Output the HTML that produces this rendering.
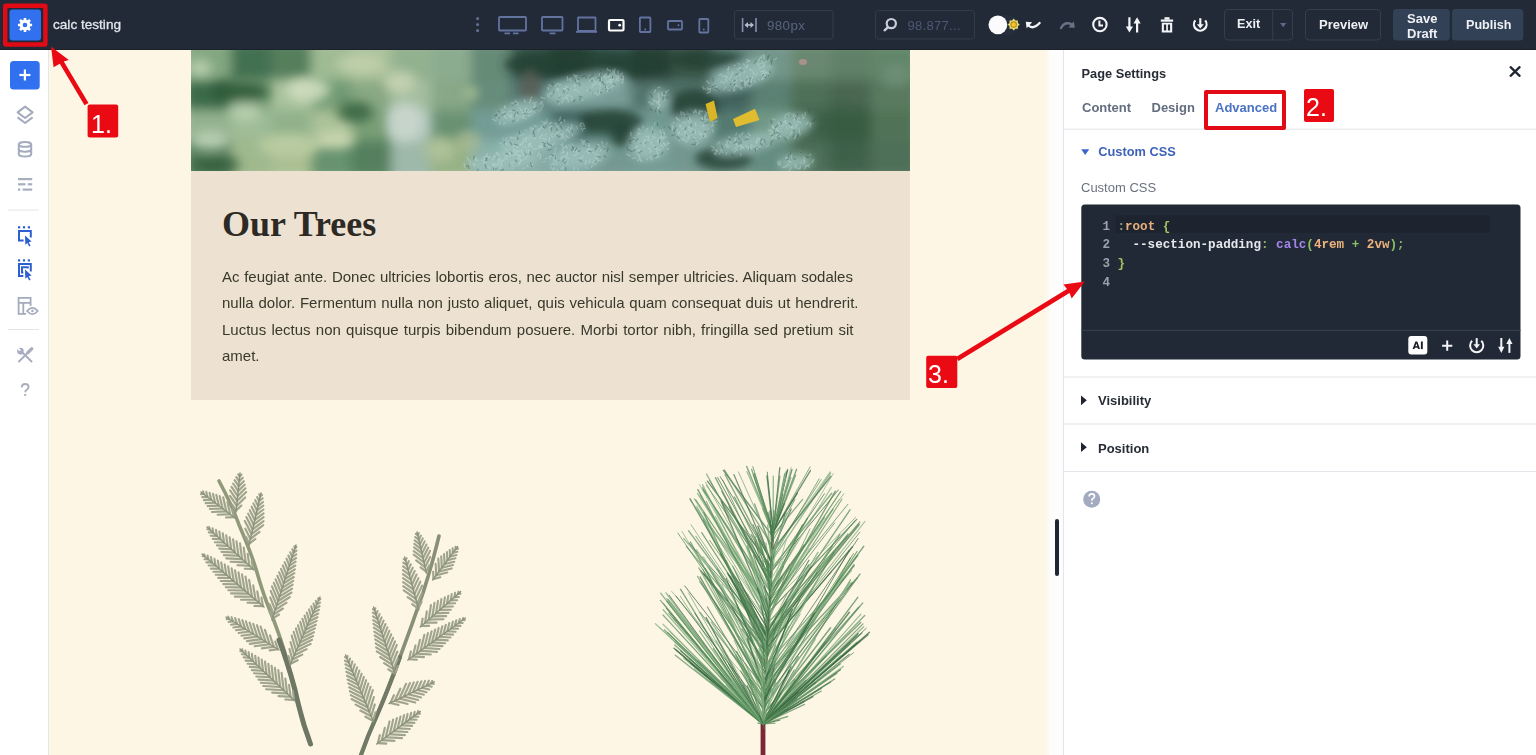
<!DOCTYPE html>
<html><head><meta charset="utf-8">
<style>
*{margin:0;padding:0;box-sizing:border-box}
html,body{width:1536px;height:755px;overflow:hidden;background:#fff;font-family:"Liberation Sans",sans-serif}
.abs{position:absolute}
#top{position:absolute;left:0;top:0;width:1536px;height:50px;background:#222a37;border-bottom:1px solid #1c222c;z-index:5}
#side{position:absolute;left:0;top:49px;width:49px;height:706px;background:#fff;border-right:1px solid #e3e6eb}
#canvas{position:absolute;left:49px;top:49px;width:1001px;height:706px;background:#fdf6e5;overflow:hidden}
#gap{position:absolute;left:1050px;top:49px;width:14px;height:706px;background:#fdfdfd}
#panel{position:absolute;left:1064px;top:49px;width:472px;height:706px;background:#fff}
#pline{position:absolute;left:1063px;top:49px;width:1px;height:706px;background:#e3e5ea}
.t{position:absolute;white-space:nowrap;line-height:1}
.lbl{position:absolute;color:#fff;font-size:25px;line-height:1;white-space:nowrap}
</style></head><body>

<div id="top">
  <svg class="abs" style="left:0;top:0" width="1536" height="49" viewBox="0 0 1536 49">
    <!-- gear button -->
    <rect x="9.5" y="9.5" width="31.5" height="31" rx="3" fill="#3170ee"/>
    <path fill="#fff" d="M32.09 23.76 L32.09 26.24 L30.23 26.34 L29.65 27.75 L30.89 29.14 L29.14 30.89 L27.75 29.65 L26.34 30.23 L26.24 32.09 L23.76 32.09 L23.66 30.23 L22.25 29.65 L20.86 30.89 L19.11 29.14 L20.35 27.75 L19.77 26.34 L17.91 26.24 L17.91 23.76 L19.77 23.66 L20.35 22.25 L19.11 20.86 L20.86 19.11 L22.25 20.35 L23.66 19.77 L23.76 17.91 L26.24 17.91 L26.34 19.77 L27.75 20.35 L29.14 19.11 L30.89 20.86 L29.65 22.25 L30.23 23.66Z"/>
    <circle cx="25" cy="25" r="2.3" fill="#3170ee"/>
    <!-- red highlight box -->
    <rect x="5.2" y="5.7" width="40.2" height="38.8" rx="0.8" fill="none" stroke="#e20a15" stroke-width="4.4"/>
    <!-- kebab -->
    <g fill="#5f6c8c"><circle cx="477.6" cy="18.6" r="1.6"/><circle cx="477.6" cy="24.6" r="1.6"/><circle cx="477.6" cy="30.6" r="1.6"/></g>
    <g fill="none" stroke="#6373a0" stroke-width="1.8">
      <rect x="499" y="17" width="27" height="13.5" rx="0.8"/>
      <rect x="542" y="17" width="20.5" height="13.5" rx="0.8"/>
      <rect x="578" y="17.5" width="17.5" height="13.5" rx="0.5"/>
      <rect x="639.9" y="17.5" width="10.5" height="14.5" rx="0.8"/>
      <rect x="668" y="21" width="14" height="8.5" rx="0.8"/>
      <rect x="699.3" y="19" width="9" height="13.5" rx="0.8"/>
    </g>
    <g fill="#6373a0">
      <rect x="504.5" y="32.5" width="5.5" height="1.8"/><rect x="513" y="32.5" width="5.5" height="1.8"/>
      <rect x="549.5" y="32.5" width="6" height="1.8"/>
      <rect x="576" y="31" width="21" height="1.8"/>
      <circle cx="645.2" cy="29.5" r="1"/>
      <circle cx="678.5" cy="25.2" r="1"/>
      <circle cx="703.8" cy="29.5" r="1"/>
    </g>
    <rect x="609" y="20" width="14.5" height="10.5" rx="1" fill="none" stroke="#fff" stroke-width="2.2"/>
    <circle cx="619.7" cy="25.2" r="1.4" fill="#fff"/>
    <!-- width box icon -->
    <rect x="734.5" y="10.5" width="98.5" height="28.5" rx="3" fill="none" stroke="#343c4b" stroke-width="1"/>
    <g stroke="#8791ad" stroke-width="1.6" fill="none">
      <line x1="742.6" y1="18" x2="742.6" y2="32"/><line x1="756" y1="18" x2="756" y2="32"/>
    </g>
    <path d="M744.5 25 L748 22 L748 28 Z M754 25 L750.5 22 L750.5 28 Z" fill="#b6bdd0"/>
    <rect x="747" y="24.2" width="4.5" height="1.6" fill="#b6bdd0"/>
    <!-- zoom box -->
    <rect x="875.5" y="10.5" width="99" height="28.5" rx="3" fill="none" stroke="#343c4b" stroke-width="1"/>
    <circle cx="891.3" cy="23.6" r="4.6" fill="none" stroke="#c9ced9" stroke-width="2.2"/>
    <line x1="887.8" y1="27.3" x2="884.6" y2="30.3" stroke="#c9ced9" stroke-width="2.4" stroke-linecap="round"/>
    <!-- toggle -->
    <rect x="987" y="15" width="32" height="20" rx="10" fill="#252e3d"/>
    <circle cx="997.9" cy="24.8" r="9.4" fill="#fbfbfd"/>
    <g transform="translate(1013.7 24.6)">
      <path fill="#e9d77a" d="M6 0 L4.2 1.7 L4.2 4.2 L1.7 4.2 L0 6 L-1.7 4.2 L-4.2 4.2 L-4.2 1.7 L-6 0 L-4.2 -1.7 L-4.2 -4.2 L-1.7 -4.2 L0 -6 L1.7 -4.2 L4.2 -4.2 L4.2 -1.7Z"/>
      <circle r="3.3" fill="#b48f1a"/><circle r="2.2" fill="#f0c62a"/>
    </g>
    <!-- undo -->
    <path d="M1028.5 25.5 Q1033 29.8 1039.6 23" fill="none" stroke="#f4f5f8" stroke-width="2.4" stroke-linecap="round"/>
    <path d="M1025.8 21.8 L1032.2 22.3 L1026.6 28.2Z" fill="#f4f5f8"/>
    <!-- redo -->
    <path d="M1061 28 Q1065 21 1072 24.5" fill="none" stroke="#687385" stroke-width="2.4" stroke-linecap="round"/>
    <path d="M1074.8 27.8 L1068.4 27.4 L1073.8 21.3Z" fill="#687385"/>
    <!-- clock -->
    <circle cx="1099.9" cy="24.6" r="6.7" fill="none" stroke="#f4f5f8" stroke-width="2.1"/>
    <path d="M1099.4 20.5 V25.4 H1103" fill="none" stroke="#f4f5f8" stroke-width="2"/>
    <!-- sort arrows -->
    <g fill="#f4f5f8">
      <rect x="1128.3" y="17.3" width="2.2" height="11"/>
      <path d="M1125.8 26.5 L1133 26.5 L1129.4 32.6Z"/>
      <rect x="1136" y="21.5" width="2.2" height="11"/>
      <path d="M1133.5 23.4 L1140.7 23.4 L1137.1 17.2Z"/>
    </g>
    <!-- trash -->
    <g fill="#f4f5f8">
      <rect x="1160.8" y="19.5" width="12.3" height="2.2"/>
      <rect x="1164.5" y="17.2" width="5" height="2.5"/>
      <path d="M1161.8 22.8 H1172.2 V32.5 H1161.8Z M1163.9 24.6 V30.6 H1166.2 V24.6Z M1167.9 24.6 V30.6 H1170.1 V24.6Z" fill-rule="evenodd"/>
    </g>
    <!-- power/download -->
    <path d="M1195.3 20.4 A6.3 6.3 0 1 0 1205.2 20.4" fill="none" stroke="#f4f5f8" stroke-width="2.2"/>
    <rect x="1199.2" y="18.2" width="2.2" height="7"/>
    <path d="M1196.8 24.2 L1203.8 24.2 L1200.3 28.6Z" fill="#f4f5f8"/>
    <rect x="1199.2" y="18.2" width="2.2" height="7" fill="#f4f5f8"/>
    <!-- exit / preview -->
    <rect x="1224.5" y="9.5" width="68" height="30.5" rx="3.5" fill="none" stroke="#353e4d"/>
    <line x1="1272.7" y1="10" x2="1272.7" y2="40" stroke="#353e4d"/>
    <path d="M1280 23 L1286.4 23 L1283.2 27.2Z" fill="#5d6886"/>
    <rect x="1305.5" y="9.5" width="75" height="30.5" rx="3.5" fill="none" stroke="#353e4d"/>
    <rect x="1393" y="9" width="56.8" height="31.6" rx="3.5" fill="#334157"/>
    <rect x="1452" y="9" width="71.3" height="31.6" rx="3.5" fill="#334157"/>
  </svg>
  <div class="t" style="left:53px;top:18px;font-size:13.6px;color:#e2e6ec;-webkit-text-stroke:0.3px #e2e6ec">calc testing</div>
  <div class="t" style="left:767px;top:18.5px;font-size:13.3px;color:#58647e;letter-spacing:0.4px">980px</div>
  <div class="t" style="left:907.5px;top:18.5px;font-size:13px;color:#4c5874;letter-spacing:0.3px">98.877...</div>
  <div class="t" style="left:1237px;top:18.2px;font-size:12.6px;font-weight:bold;color:#eef0f4">Exit</div>
  <div class="t" style="left:1319px;top:18px;font-size:13px;font-weight:bold;color:#eef0f4">Preview</div>
  <div class="t" style="left:1407px;top:11px;font-size:13px;font-weight:bold;color:#eef0f4;line-height:15.2px;text-align:center">Save<br>Draft</div>
  <div class="t" style="left:1466px;top:19.3px;font-size:12.6px;font-weight:bold;color:#eef0f4">Publish</div>
</div>

<div id="side">
  <svg class="abs" style="left:0;top:-49px" width="49" height="755" viewBox="0 0 49 755">
    <rect x="10" y="61" width="29.7" height="28.5" rx="3.5" fill="#3170ee"/>
    <rect x="23.8" y="69.5" width="2.2" height="11" fill="#fff"/>
    <rect x="19.4" y="73.9" width="11" height="2.2" fill="#fff"/>
    <g fill="none" stroke="#a4abbd" stroke-width="2" stroke-linejoin="round">
      <path d="M17.6 112.4 L25.1 106.6 L32.6 112.4 L25.1 118 Z"/>
      <path d="M17.6 117.4 L25.1 123 L32.6 117.4"/>
      <ellipse cx="25" cy="144.4" rx="6.2" ry="2.4"/>
      <path d="M18.8 144.4 V154 A6.2 2.6 0 0 0 31.2 154 V144.4"/>
      <path d="M18.8 149.2 A6.2 2.6 0 0 0 31.2 149.2"/>
    </g>
    <g fill="#a8aebf">
      <rect x="18" y="178" width="14.2" height="2.2"/>
      <rect x="18" y="183.2" width="7.5" height="2.2"/><rect x="27.8" y="183.2" width="4.4" height="2.2"/>
      <rect x="18" y="188.5" width="2.3" height="2.2"/><rect x="22.6" y="188.5" width="9.6" height="2.2"/>
    </g>
    <rect x="8" y="209.5" width="31" height="1" fill="#e3e5ea"/>
    <rect x="8" y="329" width="31" height="1" fill="#e3e5ea"/>
    <g fill="#2d5fd2">
      <rect x="18" y="226.2" width="2.2" height="2.2"/><rect x="22.9" y="226.2" width="2.2" height="2.2"/><rect x="27.8" y="226.2" width="2.2" height="2.2"/>
      <rect x="18" y="259.3" width="2.2" height="2.2"/><rect x="22.9" y="259.3" width="2.2" height="2.2"/><rect x="27.8" y="259.3" width="2.2" height="2.2"/>
      <path d="M25 235.6 L31.6 241.6 L28.7 242.2 L30.6 245.8 L29.2 246.5 L27.3 242.9 L25.3 244.8Z"/>
      <path d="M25 269.6 L31.6 275.6 L28.7 276.2 L30.6 279.8 L29.2 280.5 L27.3 276.9 L25.3 278.8Z"/>
    </g>
    <g fill="none" stroke="#2d5fd2" stroke-width="2">
      <path d="M23.6 240.6 H19 V231 H30.8 V237.5"/>
      <path d="M23.3 276 H19 V264 H30.8 V271.5"/>
      <path d="M23.3 272.5 H22 V267.3 H27.8 V268.5"/>
    </g>
    <g fill="none" stroke="#a4abbd" stroke-width="1.8">
      <path d="M26 313.8 H18.6 V297.8 H30.6 V306"/>
      <path d="M18.6 302.8 H30.6 M23.3 302.8 V313.8"/>
      <path d="M27 311 Q32.4 304.8 37.8 311 Q32.4 317.2 27 311Z" fill="#fff"/>
    </g>
    <circle cx="32.4" cy="311" r="1.3" fill="#a4abbd"/>
    <g stroke="#a8aebf" stroke-linecap="round" fill="none">
      <path d="M19 361.5 L28.5 352" stroke-width="2"/>
      <path d="M28 352.5 L31.8 348.7" stroke-width="3.2"/>
      <path d="M22.5 352.5 L31.5 361.5" stroke-width="2"/>
    </g>
    <path d="M17.6 350.6 A3.6 3.6 0 0 0 23.6 353.6 L21.3 351.3 L20.3 348.1 A3.6 3.6 0 0 0 17.6 350.6Z" fill="#a8aebf"/>
    <circle cx="20.4" cy="351" r="3.3" fill="#a8aebf"/>
    <path d="M17.5 348 L20.2 350.7" stroke="#fff" stroke-width="1.8"/>
    <path d="M21.8 387.5 Q21.8 384 25.2 384 Q28.6 384 28.6 387 Q28.6 389 26.2 390.2 Q25.2 390.8 25.2 392.3" fill="none" stroke="#a8aebf" stroke-width="1.9"/>
    <rect x="24.2" y="394" width="2" height="1.9" fill="#a8aebf"/>
  </svg>
</div>

<div id="canvas"><svg class="abs" style="left:0;top:0;filter:saturate(1.25) contrast(1.12)" width="1001" height="706" viewBox="49 49 1001 706">
<defs><filter id="b6" x="-20%" y="-20%" width="140%" height="140%"><feGaussianBlur stdDeviation="6"/></filter><filter id="b3" x="-30%" y="-30%" width="160%" height="160%"><feGaussianBlur stdDeviation="4.5"/></filter><filter id="b1" x="-10%" y="-10%" width="120%" height="120%"><feGaussianBlur stdDeviation="0.6"/></filter><clipPath id="ph"><rect x="191" y="49" width="719" height="122"/></clipPath></defs>
<g clip-path="url(#ph)">
<g filter="url(#b6)">
<rect x="183" y="40" width="48" height="40" fill="#86a085"/>
<rect x="231" y="40" width="40" height="40" fill="#50705a"/>
<rect x="271" y="40" width="40" height="40" fill="#5f7d64"/>
<rect x="311" y="40" width="40" height="40" fill="#9fb397"/>
<rect x="351" y="40" width="40" height="40" fill="#a9b99e"/>
<rect x="391" y="40" width="40" height="40" fill="#94aa92"/>
<rect x="431" y="40" width="40" height="40" fill="#8fa692"/>
<rect x="471" y="40" width="40" height="40" fill="#6d8779"/>
<rect x="511" y="40" width="40" height="40" fill="#3f5650"/>
<rect x="551" y="40" width="40" height="40" fill="#34473f"/>
<rect x="591" y="40" width="40" height="40" fill="#4a625c"/>
<rect x="631" y="40" width="40" height="40" fill="#344740"/>
<rect x="671" y="40" width="40" height="40" fill="#44594f"/>
<rect x="711" y="40" width="40" height="40" fill="#6a837e"/>
<rect x="751" y="40" width="40" height="40" fill="#7a938a"/>
<rect x="791" y="40" width="40" height="40" fill="#6f8674"/>
<rect x="831" y="40" width="40" height="40" fill="#677f6d"/>
<rect x="871" y="40" width="50" height="40" fill="#6a8470"/>
<rect x="183" y="80" width="48" height="30" fill="#4a6a52"/>
<rect x="231" y="80" width="40" height="30" fill="#7e9a7e"/>
<rect x="271" y="80" width="40" height="30" fill="#a7b99f"/>
<rect x="311" y="80" width="40" height="30" fill="#779579"/>
<rect x="351" y="80" width="40" height="30" fill="#8ca388"/>
<rect x="391" y="80" width="40" height="30" fill="#a3b59f"/>
<rect x="431" y="80" width="40" height="30" fill="#8ba28a"/>
<rect x="471" y="80" width="40" height="30" fill="#6e8a7d"/>
<rect x="511" y="80" width="40" height="30" fill="#5f7672"/>
<rect x="551" y="80" width="40" height="30" fill="#7a9691"/>
<rect x="591" y="80" width="40" height="30" fill="#7f9994"/>
<rect x="631" y="80" width="40" height="30" fill="#5b736d"/>
<rect x="671" y="80" width="40" height="30" fill="#5b736d"/>
<rect x="711" y="80" width="40" height="30" fill="#4e6461"/>
<rect x="751" y="80" width="40" height="30" fill="#647f74"/>
<rect x="791" y="80" width="40" height="30" fill="#586f5f"/>
<rect x="831" y="80" width="40" height="30" fill="#54695a"/>
<rect x="871" y="80" width="50" height="30" fill="#627966"/>
<rect x="183" y="110" width="48" height="30" fill="#94ab91"/>
<rect x="231" y="110" width="40" height="30" fill="#9fb49a"/>
<rect x="271" y="110" width="40" height="30" fill="#93aa8f"/>
<rect x="311" y="110" width="40" height="30" fill="#a9b99c"/>
<rect x="351" y="110" width="40" height="30" fill="#7f9a7d"/>
<rect x="391" y="110" width="40" height="30" fill="#adbdb4"/>
<rect x="431" y="110" width="40" height="30" fill="#718e78"/>
<rect x="471" y="110" width="40" height="30" fill="#7a9893"/>
<rect x="511" y="110" width="40" height="30" fill="#789591"/>
<rect x="551" y="110" width="40" height="30" fill="#48625e"/>
<rect x="591" y="110" width="40" height="30" fill="#58746d"/>
<rect x="631" y="110" width="40" height="30" fill="#789590"/>
<rect x="671" y="110" width="40" height="30" fill="#78918b"/>
<rect x="711" y="110" width="40" height="30" fill="#5f7a73"/>
<rect x="751" y="110" width="40" height="30" fill="#789488"/>
<rect x="791" y="110" width="40" height="30" fill="#4b6453"/>
<rect x="831" y="110" width="40" height="30" fill="#475e4e"/>
<rect x="871" y="110" width="50" height="30" fill="#5a735f"/>
<rect x="183" y="140" width="48" height="40" fill="#5f7d65"/>
<rect x="231" y="140" width="40" height="40" fill="#9fb192"/>
<rect x="271" y="140" width="40" height="40" fill="#a9b797"/>
<rect x="311" y="140" width="40" height="40" fill="#708f74"/>
<rect x="351" y="140" width="40" height="40" fill="#5f7e66"/>
<rect x="391" y="140" width="40" height="40" fill="#9eb1a6"/>
<rect x="431" y="140" width="40" height="40" fill="#98aa8b"/>
<rect x="471" y="140" width="40" height="40" fill="#8eaaa5"/>
<rect x="511" y="140" width="40" height="40" fill="#89a49f"/>
<rect x="551" y="140" width="40" height="40" fill="#7c9896"/>
<rect x="591" y="140" width="40" height="40" fill="#7a9590"/>
<rect x="631" y="140" width="40" height="40" fill="#7b9892"/>
<rect x="671" y="140" width="40" height="40" fill="#7a948e"/>
<rect x="711" y="140" width="40" height="40" fill="#78928b"/>
<rect x="751" y="140" width="40" height="40" fill="#6e8a81"/>
<rect x="791" y="140" width="40" height="40" fill="#587060"/>
<rect x="831" y="140" width="40" height="40" fill="#4d6555"/>
<rect x="871" y="140" width="50" height="40" fill="#58705e"/>
</g>
<g filter="url(#b6)" opacity="0.9">
<ellipse cx="200" cy="68" rx="12" ry="9" fill="#b9c8b0"/>
<ellipse cx="308" cy="90" rx="22" ry="12" fill="#c9d3bd"/>
<ellipse cx="245" cy="112" rx="16" ry="9" fill="#b8c8b0"/>
<ellipse cx="290" cy="145" rx="32" ry="11" fill="#b7c4a5"/>
<ellipse cx="335" cy="140" rx="20" ry="8" fill="#ccd4b8"/>
<ellipse cx="210" cy="140" rx="20" ry="9" fill="#bccab7"/>
<ellipse cx="360" cy="64" rx="24" ry="9" fill="#bdc8ae"/>
<ellipse cx="400" cy="82" rx="16" ry="11" fill="#c1cab2"/>
<ellipse cx="405" cy="122" rx="18" ry="20" fill="#c3ccc6"/>
<ellipse cx="240" cy="92" rx="30" ry="10" fill="#3a5a43"/>
<ellipse cx="355" cy="112" rx="18" ry="10" fill="#42634a"/>
<ellipse cx="215" cy="165" rx="25" ry="8" fill="#3f5e47"/>
<ellipse cx="440" cy="150" rx="15" ry="12" fill="#aebb9f"/>
</g>
<g filter="url(#b3)">
<ellipse cx="587.0" cy="64.5" rx="83.0" ry="14.5" fill="#2e433c" opacity="0.8"/>
<ellipse cx="610.5" cy="121.5" rx="32.5" ry="11.5" fill="#2e433c" opacity="0.8"/>
<ellipse cx="623.0" cy="137.0" rx="12.0" ry="10.0" fill="#2e433c" opacity="0.8"/>
<ellipse cx="707.0" cy="59.5" rx="37.0" ry="9.5" fill="#2e433c" opacity="0.8"/>
<ellipse cx="694.5" cy="105.5" rx="24.5" ry="16.5" fill="#2e433c" opacity="0.8"/>
<ellipse cx="723.5" cy="158.5" rx="28.5" ry="11.5" fill="#2e433c" opacity="0.8"/>
<ellipse cx="530" cy="87" rx="10" ry="17" fill="#5e605a" opacity="0.8"/>
<ellipse cx="581.0" cy="88.0" rx="39.56" ry="11.9" fill="#a0bab5" opacity="0.8" transform="rotate(-15 581.0 88.0)"/>
<ellipse cx="613.0" cy="81.0" rx="12.88" ry="6.8" fill="#a0bab5" opacity="0.8" transform="rotate(-10 613.0 81.0)"/>
<ellipse cx="659.0" cy="100.5" rx="10.120000000000001" ry="11.475" fill="#a0bab5" opacity="0.8" transform="rotate(-10 659.0 100.5)"/>
<ellipse cx="518.5" cy="112.0" rx="24.380000000000003" ry="10.2" fill="#a0bab5" opacity="0.8" transform="rotate(-20 518.5 112.0)"/>
<ellipse cx="540.0" cy="138.5" rx="42.32" ry="12.325" fill="#a0bab5" opacity="0.8" transform="rotate(-15 540.0 138.5)"/>
<ellipse cx="504.0" cy="162.5" rx="37.72" ry="8.075" fill="#a0bab5" opacity="0.8" transform="rotate(-5 504.0 162.5)"/>
<ellipse cx="578.0" cy="157.5" rx="30.360000000000003" ry="12.325" fill="#a0bab5" opacity="0.8" transform="rotate(-10 578.0 157.5)"/>
<ellipse cx="648.5" cy="144.0" rx="19.78" ry="16.15" fill="#a0bab5" opacity="0.8" transform="rotate(-10 648.5 144.0)"/>
<ellipse cx="740.5" cy="76.0" rx="34.5" ry="12.75" fill="#a0bab5" opacity="0.8" transform="rotate(-18 740.5 76.0)"/>
<ellipse cx="693.0" cy="128.5" rx="21.16" ry="15.725" fill="#a0bab5" opacity="0.8" transform="rotate(-12 693.0 128.5)"/>
<ellipse cx="791.5" cy="126.0" rx="21.62" ry="11.9" fill="#a0bab5" opacity="0.8" transform="rotate(-15 791.5 126.0)"/>
<ellipse cx="745.5" cy="144.0" rx="31.740000000000002" ry="9.35" fill="#a0bab5" opacity="0.8" transform="rotate(-12 745.5 144.0)"/>
<ellipse cx="796.0" cy="162.5" rx="17.48" ry="8.075" fill="#a0bab5" opacity="0.8" transform="rotate(-5 796.0 162.5)"/>
<ellipse cx="471" cy="93" rx="9" ry="7" fill="#a9b79b" opacity="0.6"/>
<ellipse cx="468" cy="141" rx="13" ry="11" fill="#aab699" opacity="0.6"/>
<ellipse cx="896" cy="76" rx="14" ry="12" fill="#788f7e" opacity="0.6"/>
<ellipse cx="842" cy="130" rx="24" ry="33" fill="#3f5a48" opacity="0.25"/>
</g>
<g stroke-width="1.2" opacity="0.35" filter="url(#b1)">
<line x1="554.5" y1="86.7" x2="558.0" y2="83.4" stroke="#c8dad5"/>
<line x1="601.4" y1="72.1" x2="599.8" y2="70.1" stroke="#3a524c"/>
<line x1="603.3" y1="88.3" x2="600.9" y2="85.2" stroke="#3a524c"/>
<line x1="601.0" y1="83.2" x2="598.3" y2="79.2" stroke="#d2e0dc"/>
<line x1="601.7" y1="93.0" x2="598.4" y2="90.7" stroke="#3a524c"/>
<line x1="609.6" y1="90.5" x2="605.3" y2="89.4" stroke="#3a524c"/>
<line x1="597.1" y1="78.3" x2="600.8" y2="77.1" stroke="#3a524c"/>
<line x1="598.6" y1="95.8" x2="595.1" y2="92.4" stroke="#d2e0dc"/>
<line x1="573.2" y1="98.1" x2="571.0" y2="96.3" stroke="#c8dad5"/>
<line x1="561.9" y1="104.1" x2="562.9" y2="100.3" stroke="#b9cec9"/>
<line x1="604.5" y1="85.1" x2="602.4" y2="81.4" stroke="#3a524c"/>
<line x1="545.2" y1="99.0" x2="540.6" y2="97.1" stroke="#c8dad5"/>
<line x1="605.4" y1="78.8" x2="604.5" y2="75.1" stroke="#d2e0dc"/>
<line x1="559.2" y1="101.8" x2="556.7" y2="101.1" stroke="#3a524c"/>
<line x1="551.1" y1="86.4" x2="548.4" y2="84.8" stroke="#d2e0dc"/>
<line x1="566.7" y1="98.8" x2="567.1" y2="94.3" stroke="#c8dad5"/>
<line x1="548.9" y1="90.0" x2="547.8" y2="86.9" stroke="#d2e0dc"/>
<line x1="593.2" y1="83.3" x2="591.6" y2="79.6" stroke="#3a524c"/>
<line x1="558.9" y1="105.3" x2="559.3" y2="102.1" stroke="#b9cec9"/>
<line x1="567.7" y1="103.3" x2="569.2" y2="99.3" stroke="#b9cec9"/>
<line x1="598.3" y1="83.3" x2="593.7" y2="81.4" stroke="#d2e0dc"/>
<line x1="617.3" y1="80.7" x2="616.0" y2="77.8" stroke="#d2e0dc"/>
<line x1="606.9" y1="92.0" x2="608.7" y2="87.9" stroke="#b9cec9"/>
<line x1="589.2" y1="81.5" x2="592.1" y2="77.6" stroke="#d2e0dc"/>
<line x1="603.2" y1="87.8" x2="599.5" y2="85.0" stroke="#b9cec9"/>
<line x1="607.1" y1="91.4" x2="608.1" y2="88.7" stroke="#d2e0dc"/>
<line x1="615.6" y1="75.9" x2="614.1" y2="73.0" stroke="#d2e0dc"/>
<line x1="567.5" y1="94.7" x2="565.9" y2="89.9" stroke="#3a524c"/>
<line x1="559.8" y1="86.6" x2="558.7" y2="84.1" stroke="#b9cec9"/>
<line x1="549.3" y1="95.5" x2="549.4" y2="92.8" stroke="#b9cec9"/>
<line x1="569.0" y1="80.5" x2="571.3" y2="77.9" stroke="#b9cec9"/>
<line x1="592.3" y1="78.8" x2="596.4" y2="77.7" stroke="#b9cec9"/>
<line x1="561.7" y1="84.6" x2="558.0" y2="83.5" stroke="#b9cec9"/>
<line x1="570.7" y1="97.3" x2="568.7" y2="94.1" stroke="#b9cec9"/>
<line x1="561.1" y1="102.5" x2="563.9" y2="98.9" stroke="#b9cec9"/>
<line x1="596.8" y1="81.0" x2="599.8" y2="79.1" stroke="#b9cec9"/>
<line x1="610.8" y1="77.3" x2="611.1" y2="74.4" stroke="#b9cec9"/>
<line x1="608.4" y1="76.9" x2="610.6" y2="73.2" stroke="#d2e0dc"/>
<line x1="598.9" y1="94.1" x2="599.9" y2="90.1" stroke="#d2e0dc"/>
<line x1="570.6" y1="100.6" x2="573.3" y2="98.9" stroke="#c8dad5"/>
<line x1="592.0" y1="95.1" x2="593.1" y2="92.4" stroke="#3a524c"/>
<line x1="575.0" y1="87.5" x2="574.8" y2="84.4" stroke="#c8dad5"/>
<line x1="592.1" y1="82.1" x2="595.7" y2="81.0" stroke="#c8dad5"/>
<line x1="559.0" y1="98.1" x2="560.2" y2="95.7" stroke="#3a524c"/>
<line x1="584.1" y1="100.4" x2="580.7" y2="99.6" stroke="#b9cec9"/>
<line x1="605.7" y1="71.1" x2="607.7" y2="67.8" stroke="#c8dad5"/>
<line x1="558.5" y1="91.6" x2="556.6" y2="88.4" stroke="#b9cec9"/>
<line x1="618.6" y1="74.7" x2="617.7" y2="70.2" stroke="#b9cec9"/>
<line x1="564.3" y1="93.6" x2="563.3" y2="90.1" stroke="#3a524c"/>
<line x1="613.9" y1="77.0" x2="612.1" y2="72.6" stroke="#c8dad5"/>
<line x1="562.9" y1="98.3" x2="566.4" y2="96.7" stroke="#b9cec9"/>
<line x1="553.1" y1="85.9" x2="552.0" y2="82.5" stroke="#3a524c"/>
<line x1="551.2" y1="96.4" x2="553.2" y2="93.5" stroke="#3a524c"/>
<line x1="562.9" y1="88.8" x2="566.6" y2="87.9" stroke="#d2e0dc"/>
<line x1="622.5" y1="78.6" x2="620.2" y2="74.3" stroke="#3a524c"/>
<line x1="566.1" y1="92.7" x2="567.4" y2="89.3" stroke="#b9cec9"/>
<line x1="596.4" y1="85.2" x2="595.4" y2="81.6" stroke="#b9cec9"/>
<line x1="582.2" y1="97.3" x2="578.7" y2="96.1" stroke="#3a524c"/>
<line x1="576.9" y1="81.7" x2="576.9" y2="76.8" stroke="#c8dad5"/>
<line x1="596.2" y1="84.4" x2="593.9" y2="80.8" stroke="#b9cec9"/>
<line x1="580.2" y1="86.0" x2="578.6" y2="82.1" stroke="#3a524c"/>
<line x1="602.0" y1="84.0" x2="601.6" y2="79.2" stroke="#3a524c"/>
<line x1="618.8" y1="79.0" x2="618.1" y2="75.1" stroke="#d2e0dc"/>
<line x1="605.9" y1="71.4" x2="605.7" y2="67.2" stroke="#3a524c"/>
<line x1="604.6" y1="76.0" x2="606.7" y2="73.6" stroke="#c8dad5"/>
<line x1="571.4" y1="81.9" x2="569.0" y2="78.1" stroke="#b9cec9"/>
<line x1="599.6" y1="90.6" x2="600.1" y2="86.9" stroke="#b9cec9"/>
<line x1="553.7" y1="93.1" x2="554.1" y2="90.5" stroke="#3a524c"/>
<line x1="579.6" y1="92.4" x2="575.2" y2="90.5" stroke="#b9cec9"/>
<line x1="573.7" y1="76.3" x2="577.9" y2="75.4" stroke="#c8dad5"/>
<line x1="591.7" y1="88.5" x2="593.2" y2="84.2" stroke="#c8dad5"/>
<line x1="577.3" y1="84.0" x2="574.8" y2="79.9" stroke="#3a524c"/>
<line x1="588.6" y1="91.5" x2="590.5" y2="89.7" stroke="#3a524c"/>
<line x1="594.6" y1="85.6" x2="593.8" y2="83.0" stroke="#c8dad5"/>
<line x1="567.7" y1="89.5" x2="566.6" y2="85.6" stroke="#c8dad5"/>
<line x1="559.1" y1="97.1" x2="560.1" y2="93.6" stroke="#b9cec9"/>
<line x1="594.8" y1="81.7" x2="592.8" y2="78.3" stroke="#b9cec9"/>
<line x1="608.1" y1="75.2" x2="609.2" y2="72.2" stroke="#3a524c"/>
<line x1="580.0" y1="100.4" x2="580.2" y2="97.6" stroke="#3a524c"/>
<line x1="599.9" y1="75.8" x2="599.2" y2="73.1" stroke="#c8dad5"/>
<line x1="573.9" y1="86.5" x2="575.2" y2="84.1" stroke="#c8dad5"/>
<line x1="552.1" y1="95.4" x2="551.1" y2="91.9" stroke="#b9cec9"/>
<line x1="605.4" y1="87.8" x2="605.9" y2="84.4" stroke="#3a524c"/>
<line x1="607.5" y1="77.8" x2="610.7" y2="74.8" stroke="#c8dad5"/>
<line x1="615.6" y1="76.8" x2="617.8" y2="75.0" stroke="#d2e0dc"/>
<line x1="568.3" y1="96.8" x2="566.6" y2="93.1" stroke="#b9cec9"/>
<line x1="588.5" y1="77.7" x2="590.5" y2="75.0" stroke="#b9cec9"/>
<line x1="590.5" y1="76.8" x2="593.6" y2="74.6" stroke="#3a524c"/>
<line x1="579.3" y1="79.7" x2="577.1" y2="78.4" stroke="#3a524c"/>
<line x1="591.1" y1="94.5" x2="595.0" y2="93.0" stroke="#b9cec9"/>
<line x1="610.5" y1="80.1" x2="614.0" y2="78.2" stroke="#d2e0dc"/>
<line x1="568.0" y1="100.0" x2="565.0" y2="97.2" stroke="#c8dad5"/>
<line x1="562.2" y1="99.2" x2="564.7" y2="97.8" stroke="#b9cec9"/>
<line x1="610.9" y1="88.1" x2="613.6" y2="84.9" stroke="#c8dad5"/>
<line x1="573.3" y1="90.3" x2="576.5" y2="89.0" stroke="#c8dad5"/>
<line x1="567.5" y1="81.0" x2="567.3" y2="76.1" stroke="#c8dad5"/>
<line x1="586.4" y1="78.8" x2="586.1" y2="75.7" stroke="#3a524c"/>
<line x1="616.6" y1="80.9" x2="617.5" y2="76.9" stroke="#d2e0dc"/>
<line x1="611.7" y1="73.6" x2="613.2" y2="71.0" stroke="#b9cec9"/>
<line x1="573.4" y1="101.8" x2="575.1" y2="99.4" stroke="#3a524c"/>
<line x1="589.8" y1="91.3" x2="586.1" y2="89.9" stroke="#b9cec9"/>
<line x1="591.6" y1="85.3" x2="594.1" y2="82.8" stroke="#c8dad5"/>
<line x1="619.4" y1="80.4" x2="622.6" y2="78.0" stroke="#c8dad5"/>
<line x1="576.6" y1="82.5" x2="578.7" y2="80.7" stroke="#d2e0dc"/>
<line x1="601.0" y1="84.9" x2="597.8" y2="83.6" stroke="#c8dad5"/>
<line x1="618.5" y1="81.7" x2="618.0" y2="77.7" stroke="#c8dad5"/>
<line x1="599.0" y1="81.3" x2="601.2" y2="77.8" stroke="#3a524c"/>
<line x1="568.8" y1="90.5" x2="567.5" y2="88.0" stroke="#3a524c"/>
<line x1="548.5" y1="89.2" x2="546.8" y2="87.3" stroke="#b9cec9"/>
<line x1="548.6" y1="97.6" x2="547.4" y2="93.7" stroke="#c8dad5"/>
<line x1="601.4" y1="78.5" x2="600.8" y2="74.0" stroke="#3a524c"/>
<line x1="565.9" y1="90.3" x2="565.8" y2="85.8" stroke="#b9cec9"/>
<line x1="591.2" y1="78.2" x2="588.9" y2="76.7" stroke="#3a524c"/>
<line x1="568.5" y1="79.5" x2="572.5" y2="78.3" stroke="#b9cec9"/>
<line x1="614.3" y1="83.5" x2="611.5" y2="82.4" stroke="#b9cec9"/>
<line x1="611.0" y1="71.1" x2="606.9" y2="69.2" stroke="#d2e0dc"/>
<line x1="581.5" y1="77.4" x2="585.1" y2="75.5" stroke="#3a524c"/>
<line x1="555.5" y1="90.6" x2="558.7" y2="88.0" stroke="#c8dad5"/>
<line x1="576.0" y1="77.7" x2="573.5" y2="74.0" stroke="#d2e0dc"/>
<line x1="558.4" y1="91.0" x2="557.1" y2="88.5" stroke="#d2e0dc"/>
<line x1="609.6" y1="77.8" x2="605.6" y2="76.0" stroke="#c8dad5"/>
<line x1="616.1" y1="80.8" x2="613.3" y2="78.9" stroke="#b9cec9"/>
<line x1="623.4" y1="77.2" x2="621.1" y2="74.5" stroke="#b9cec9"/>
<line x1="615.5" y1="85.1" x2="612.4" y2="82.6" stroke="#3a524c"/>
<line x1="612.4" y1="78.7" x2="612.7" y2="75.8" stroke="#3a524c"/>
<line x1="600.2" y1="85.8" x2="602.2" y2="83.9" stroke="#b9cec9"/>
<line x1="606.7" y1="83.4" x2="607.5" y2="80.6" stroke="#c8dad5"/>
<line x1="614.5" y1="73.0" x2="615.0" y2="68.1" stroke="#c8dad5"/>
<line x1="623.1" y1="83.6" x2="622.5" y2="81.0" stroke="#c8dad5"/>
<line x1="623.4" y1="80.4" x2="623.3" y2="75.7" stroke="#d2e0dc"/>
<line x1="606.9" y1="82.9" x2="609.4" y2="80.8" stroke="#b9cec9"/>
<line x1="614.1" y1="73.7" x2="612.6" y2="69.5" stroke="#c8dad5"/>
<line x1="606.5" y1="78.7" x2="602.8" y2="76.0" stroke="#d2e0dc"/>
<line x1="609.8" y1="83.2" x2="608.7" y2="79.0" stroke="#b9cec9"/>
<line x1="618.1" y1="78.0" x2="620.5" y2="75.8" stroke="#d2e0dc"/>
<line x1="620.2" y1="74.9" x2="622.8" y2="72.6" stroke="#c8dad5"/>
<line x1="621.7" y1="83.2" x2="623.2" y2="79.0" stroke="#c8dad5"/>
<line x1="612.1" y1="82.4" x2="610.4" y2="79.3" stroke="#d2e0dc"/>
<line x1="601.8" y1="81.1" x2="601.3" y2="76.6" stroke="#c8dad5"/>
<line x1="600.8" y1="81.5" x2="599.5" y2="77.8" stroke="#3a524c"/>
<line x1="612.2" y1="83.3" x2="609.2" y2="81.8" stroke="#d2e0dc"/>
<line x1="608.3" y1="89.1" x2="605.9" y2="85.5" stroke="#c8dad5"/>
<line x1="662.2" y1="100.9" x2="665.3" y2="99.9" stroke="#b9cec9"/>
<line x1="655.2" y1="89.8" x2="657.6" y2="86.6" stroke="#3a524c"/>
<line x1="655.7" y1="101.5" x2="652.9" y2="99.7" stroke="#d2e0dc"/>
<line x1="658.5" y1="101.0" x2="657.7" y2="98.2" stroke="#3a524c"/>
<line x1="666.3" y1="93.6" x2="665.5" y2="90.9" stroke="#b9cec9"/>
<line x1="659.0" y1="104.8" x2="656.7" y2="100.9" stroke="#c8dad5"/>
<line x1="662.6" y1="96.5" x2="664.2" y2="92.4" stroke="#3a524c"/>
<line x1="654.4" y1="92.9" x2="655.8" y2="89.0" stroke="#d2e0dc"/>
<line x1="652.8" y1="106.0" x2="653.3" y2="101.3" stroke="#b9cec9"/>
<line x1="656.2" y1="102.9" x2="659.1" y2="101.3" stroke="#d2e0dc"/>
<line x1="662.7" y1="100.7" x2="663.4" y2="96.8" stroke="#3a524c"/>
<line x1="653.3" y1="104.6" x2="649.4" y2="102.4" stroke="#b9cec9"/>
<line x1="658.6" y1="97.2" x2="658.5" y2="92.7" stroke="#c8dad5"/>
<line x1="654.8" y1="112.6" x2="656.7" y2="108.1" stroke="#3a524c"/>
<line x1="665.8" y1="92.7" x2="669.1" y2="89.6" stroke="#c8dad5"/>
<line x1="660.5" y1="105.2" x2="658.0" y2="103.9" stroke="#c8dad5"/>
<line x1="652.5" y1="97.6" x2="650.5" y2="93.6" stroke="#3a524c"/>
<line x1="656.6" y1="88.3" x2="660.4" y2="87.0" stroke="#c8dad5"/>
<line x1="652.4" y1="110.8" x2="650.0" y2="108.5" stroke="#3a524c"/>
<line x1="650.2" y1="104.9" x2="651.9" y2="102.8" stroke="#d2e0dc"/>
<line x1="666.0" y1="95.9" x2="661.2" y2="94.7" stroke="#b9cec9"/>
<line x1="659.4" y1="101.0" x2="658.4" y2="97.8" stroke="#c8dad5"/>
<line x1="648.4" y1="103.1" x2="649.8" y2="101.0" stroke="#d2e0dc"/>
<line x1="668.5" y1="98.8" x2="666.1" y2="96.4" stroke="#3a524c"/>
<line x1="657.0" y1="110.1" x2="659.4" y2="106.3" stroke="#c8dad5"/>
<line x1="657.2" y1="108.3" x2="660.3" y2="106.2" stroke="#c8dad5"/>
<line x1="661.0" y1="113.3" x2="658.6" y2="109.8" stroke="#3a524c"/>
<line x1="658.6" y1="104.7" x2="658.4" y2="99.8" stroke="#d2e0dc"/>
<line x1="662.4" y1="94.6" x2="662.0" y2="91.8" stroke="#c8dad5"/>
<line x1="541.7" y1="103.9" x2="540.8" y2="101.5" stroke="#b9cec9"/>
<line x1="494.5" y1="116.2" x2="496.8" y2="114.8" stroke="#3a524c"/>
<line x1="526.7" y1="119.1" x2="523.1" y2="118.1" stroke="#b9cec9"/>
<line x1="498.7" y1="112.8" x2="498.6" y2="110.3" stroke="#3a524c"/>
<line x1="500.2" y1="125.3" x2="499.6" y2="121.3" stroke="#c8dad5"/>
<line x1="522.2" y1="118.3" x2="524.8" y2="114.6" stroke="#d2e0dc"/>
<line x1="532.6" y1="103.1" x2="536.9" y2="102.3" stroke="#b9cec9"/>
<line x1="532.5" y1="115.4" x2="531.5" y2="110.6" stroke="#b9cec9"/>
<line x1="522.1" y1="118.3" x2="520.0" y2="115.3" stroke="#b9cec9"/>
<line x1="539.6" y1="104.5" x2="542.6" y2="101.2" stroke="#c8dad5"/>
<line x1="533.1" y1="110.0" x2="537.3" y2="107.8" stroke="#3a524c"/>
<line x1="504.8" y1="108.7" x2="504.8" y2="105.4" stroke="#d2e0dc"/>
<line x1="526.9" y1="113.3" x2="531.4" y2="111.4" stroke="#c8dad5"/>
<line x1="542.3" y1="104.3" x2="539.8" y2="103.0" stroke="#b9cec9"/>
<line x1="512.3" y1="119.1" x2="509.9" y2="115.0" stroke="#c8dad5"/>
<line x1="516.7" y1="116.5" x2="515.9" y2="113.3" stroke="#d2e0dc"/>
<line x1="501.6" y1="115.8" x2="505.8" y2="113.2" stroke="#3a524c"/>
<line x1="516.9" y1="121.4" x2="518.6" y2="119.2" stroke="#d2e0dc"/>
<line x1="515.3" y1="110.7" x2="512.4" y2="109.9" stroke="#3a524c"/>
<line x1="497.8" y1="119.3" x2="499.7" y2="117.5" stroke="#3a524c"/>
<line x1="534.5" y1="108.0" x2="533.5" y2="105.6" stroke="#b9cec9"/>
<line x1="510.6" y1="116.3" x2="506.6" y2="113.7" stroke="#b9cec9"/>
<line x1="512.6" y1="102.8" x2="517.3" y2="101.2" stroke="#b9cec9"/>
<line x1="530.1" y1="100.2" x2="532.2" y2="96.6" stroke="#c8dad5"/>
<line x1="516.8" y1="103.9" x2="515.5" y2="99.3" stroke="#b9cec9"/>
<line x1="525.2" y1="102.9" x2="524.3" y2="99.3" stroke="#c8dad5"/>
<line x1="498.6" y1="119.6" x2="496.0" y2="117.0" stroke="#c8dad5"/>
<line x1="518.0" y1="108.1" x2="521.0" y2="106.4" stroke="#b9cec9"/>
<line x1="517.3" y1="118.7" x2="520.4" y2="115.6" stroke="#b9cec9"/>
<line x1="518.5" y1="113.9" x2="516.7" y2="111.6" stroke="#3a524c"/>
<line x1="512.4" y1="105.4" x2="516.6" y2="102.9" stroke="#3a524c"/>
<line x1="501.9" y1="113.0" x2="505.0" y2="111.5" stroke="#c8dad5"/>
<line x1="524.0" y1="110.1" x2="526.9" y2="107.8" stroke="#c8dad5"/>
<line x1="535.3" y1="107.1" x2="534.5" y2="103.4" stroke="#d2e0dc"/>
<line x1="509.0" y1="111.8" x2="511.6" y2="110.9" stroke="#c8dad5"/>
<line x1="514.6" y1="104.4" x2="510.6" y2="102.9" stroke="#b9cec9"/>
<line x1="503.6" y1="108.3" x2="505.2" y2="106.1" stroke="#b9cec9"/>
<line x1="535.2" y1="113.1" x2="533.3" y2="110.5" stroke="#c8dad5"/>
<line x1="529.4" y1="103.3" x2="531.0" y2="100.0" stroke="#d2e0dc"/>
<line x1="525.4" y1="114.1" x2="522.6" y2="110.1" stroke="#3a524c"/>
<line x1="508.6" y1="116.8" x2="512.6" y2="115.9" stroke="#d2e0dc"/>
<line x1="503.1" y1="110.9" x2="500.9" y2="109.1" stroke="#d2e0dc"/>
<line x1="527.6" y1="116.1" x2="530.7" y2="114.9" stroke="#c8dad5"/>
<line x1="526.9" y1="113.9" x2="526.9" y2="110.0" stroke="#3a524c"/>
<line x1="498.2" y1="116.1" x2="497.4" y2="111.7" stroke="#b9cec9"/>
<line x1="516.1" y1="116.7" x2="514.1" y2="113.9" stroke="#b9cec9"/>
<line x1="496.3" y1="120.9" x2="492.2" y2="118.9" stroke="#c8dad5"/>
<line x1="514.1" y1="116.9" x2="515.8" y2="112.6" stroke="#3a524c"/>
<line x1="543.4" y1="106.6" x2="542.2" y2="102.7" stroke="#b9cec9"/>
<line x1="538.4" y1="111.3" x2="541.2" y2="109.7" stroke="#b9cec9"/>
<line x1="515.0" y1="105.8" x2="517.3" y2="104.4" stroke="#b9cec9"/>
<line x1="523.3" y1="111.3" x2="519.5" y2="109.2" stroke="#d2e0dc"/>
<line x1="532.1" y1="111.8" x2="530.4" y2="109.8" stroke="#b9cec9"/>
<line x1="505.8" y1="108.5" x2="504.3" y2="105.5" stroke="#c8dad5"/>
<line x1="510.2" y1="115.8" x2="512.1" y2="113.8" stroke="#c8dad5"/>
<line x1="541.3" y1="109.7" x2="541.8" y2="106.1" stroke="#b9cec9"/>
<line x1="512.3" y1="121.8" x2="514.3" y2="120.2" stroke="#3a524c"/>
<line x1="503.0" y1="124.1" x2="506.0" y2="122.8" stroke="#c8dad5"/>
<line x1="522.4" y1="112.7" x2="525.8" y2="111.4" stroke="#d2e0dc"/>
<line x1="496.1" y1="116.6" x2="497.3" y2="113.7" stroke="#3a524c"/>
<line x1="518.0" y1="106.1" x2="517.7" y2="101.7" stroke="#c8dad5"/>
<line x1="526.4" y1="113.1" x2="528.7" y2="109.5" stroke="#c8dad5"/>
<line x1="506.4" y1="118.4" x2="503.9" y2="115.1" stroke="#d2e0dc"/>
<line x1="538.6" y1="148.7" x2="540.8" y2="144.8" stroke="#d2e0dc"/>
<line x1="567.7" y1="137.9" x2="565.6" y2="135.2" stroke="#c8dad5"/>
<line x1="506.9" y1="144.5" x2="505.1" y2="142.7" stroke="#d2e0dc"/>
<line x1="519.4" y1="136.3" x2="523.5" y2="133.8" stroke="#b9cec9"/>
<line x1="531.3" y1="138.7" x2="529.3" y2="135.4" stroke="#b9cec9"/>
<line x1="500.9" y1="156.3" x2="497.5" y2="154.0" stroke="#c8dad5"/>
<line x1="584.7" y1="126.6" x2="582.5" y2="122.5" stroke="#b9cec9"/>
<line x1="503.0" y1="154.7" x2="504.6" y2="151.8" stroke="#b9cec9"/>
<line x1="531.4" y1="129.8" x2="533.5" y2="127.8" stroke="#d2e0dc"/>
<line x1="520.5" y1="135.0" x2="520.4" y2="131.4" stroke="#b9cec9"/>
<line x1="572.4" y1="132.7" x2="572.3" y2="129.9" stroke="#3a524c"/>
<line x1="549.3" y1="141.3" x2="549.4" y2="137.1" stroke="#d2e0dc"/>
<line x1="523.4" y1="135.6" x2="524.6" y2="132.8" stroke="#b9cec9"/>
<line x1="558.3" y1="130.4" x2="556.6" y2="128.4" stroke="#b9cec9"/>
<line x1="516.6" y1="148.0" x2="518.7" y2="145.2" stroke="#d2e0dc"/>
<line x1="548.5" y1="124.2" x2="551.8" y2="122.4" stroke="#c8dad5"/>
<line x1="546.6" y1="139.5" x2="542.3" y2="138.3" stroke="#c8dad5"/>
<line x1="560.4" y1="145.1" x2="563.6" y2="143.4" stroke="#b9cec9"/>
<line x1="532.8" y1="140.1" x2="536.0" y2="137.1" stroke="#d2e0dc"/>
<line x1="558.3" y1="123.8" x2="560.9" y2="120.0" stroke="#3a524c"/>
<line x1="582.9" y1="128.7" x2="585.8" y2="128.1" stroke="#c8dad5"/>
<line x1="533.2" y1="134.2" x2="533.7" y2="129.5" stroke="#3a524c"/>
<line x1="540.5" y1="139.2" x2="539.9" y2="136.0" stroke="#d2e0dc"/>
<line x1="508.6" y1="154.9" x2="505.7" y2="153.1" stroke="#3a524c"/>
<line x1="546.0" y1="145.9" x2="545.6" y2="142.4" stroke="#c8dad5"/>
<line x1="535.0" y1="150.2" x2="532.0" y2="147.2" stroke="#b9cec9"/>
<line x1="543.4" y1="124.1" x2="547.5" y2="122.3" stroke="#d2e0dc"/>
<line x1="559.6" y1="121.0" x2="560.4" y2="116.5" stroke="#d2e0dc"/>
<line x1="537.7" y1="132.6" x2="538.8" y2="128.5" stroke="#c8dad5"/>
<line x1="552.0" y1="145.2" x2="554.7" y2="143.2" stroke="#c8dad5"/>
<line x1="532.2" y1="131.4" x2="535.3" y2="128.8" stroke="#3a524c"/>
<line x1="557.7" y1="134.0" x2="557.2" y2="131.3" stroke="#c8dad5"/>
<line x1="530.5" y1="131.6" x2="534.2" y2="128.7" stroke="#c8dad5"/>
<line x1="512.2" y1="146.6" x2="516.4" y2="145.6" stroke="#b9cec9"/>
<line x1="541.4" y1="128.1" x2="544.1" y2="125.7" stroke="#b9cec9"/>
<line x1="513.8" y1="138.9" x2="511.0" y2="136.6" stroke="#d2e0dc"/>
<line x1="545.9" y1="136.7" x2="545.8" y2="133.9" stroke="#c8dad5"/>
<line x1="545.3" y1="127.1" x2="541.6" y2="125.3" stroke="#b9cec9"/>
<line x1="572.6" y1="136.7" x2="571.9" y2="133.5" stroke="#c8dad5"/>
<line x1="526.2" y1="153.3" x2="523.0" y2="151.3" stroke="#c8dad5"/>
<line x1="543.9" y1="124.0" x2="545.2" y2="121.6" stroke="#d2e0dc"/>
<line x1="508.6" y1="146.1" x2="508.2" y2="143.2" stroke="#b9cec9"/>
<line x1="514.0" y1="138.1" x2="517.7" y2="137.1" stroke="#b9cec9"/>
<line x1="557.3" y1="124.2" x2="554.2" y2="122.7" stroke="#d2e0dc"/>
<line x1="562.3" y1="137.4" x2="564.8" y2="136.4" stroke="#b9cec9"/>
<line x1="558.9" y1="127.2" x2="556.0" y2="125.5" stroke="#d2e0dc"/>
<line x1="522.0" y1="153.9" x2="521.5" y2="149.3" stroke="#c8dad5"/>
<line x1="504.1" y1="140.4" x2="502.4" y2="137.2" stroke="#b9cec9"/>
<line x1="526.0" y1="141.9" x2="526.2" y2="137.2" stroke="#d2e0dc"/>
<line x1="520.1" y1="134.4" x2="519.2" y2="130.9" stroke="#3a524c"/>
<line x1="564.1" y1="135.2" x2="559.9" y2="133.7" stroke="#d2e0dc"/>
<line x1="511.8" y1="139.3" x2="509.1" y2="136.9" stroke="#b9cec9"/>
<line x1="554.7" y1="135.8" x2="557.8" y2="132.2" stroke="#c8dad5"/>
<line x1="562.1" y1="128.9" x2="560.2" y2="125.8" stroke="#3a524c"/>
<line x1="570.4" y1="132.5" x2="567.8" y2="130.4" stroke="#d2e0dc"/>
<line x1="559.7" y1="123.6" x2="562.1" y2="122.0" stroke="#d2e0dc"/>
<line x1="582.4" y1="126.9" x2="579.2" y2="125.2" stroke="#b9cec9"/>
<line x1="512.0" y1="155.3" x2="516.6" y2="153.6" stroke="#d2e0dc"/>
<line x1="514.8" y1="150.9" x2="513.2" y2="148.5" stroke="#d2e0dc"/>
<line x1="527.8" y1="146.6" x2="530.2" y2="146.0" stroke="#d2e0dc"/>
<line x1="531.9" y1="146.5" x2="528.1" y2="143.6" stroke="#d2e0dc"/>
<line x1="560.8" y1="139.0" x2="558.7" y2="136.9" stroke="#d2e0dc"/>
<line x1="541.3" y1="148.4" x2="542.2" y2="144.7" stroke="#c8dad5"/>
<line x1="544.6" y1="129.4" x2="542.9" y2="125.7" stroke="#3a524c"/>
<line x1="543.0" y1="136.4" x2="541.1" y2="134.6" stroke="#d2e0dc"/>
<line x1="530.3" y1="140.6" x2="527.0" y2="136.9" stroke="#b9cec9"/>
<line x1="545.6" y1="146.6" x2="543.0" y2="145.7" stroke="#3a524c"/>
<line x1="569.7" y1="138.2" x2="565.7" y2="135.6" stroke="#c8dad5"/>
<line x1="546.1" y1="123.3" x2="547.2" y2="118.6" stroke="#b9cec9"/>
<line x1="544.7" y1="130.1" x2="542.3" y2="128.0" stroke="#c8dad5"/>
<line x1="522.5" y1="147.7" x2="526.9" y2="146.3" stroke="#b9cec9"/>
<line x1="518.2" y1="145.6" x2="514.2" y2="144.0" stroke="#3a524c"/>
<line x1="514.1" y1="152.8" x2="512.7" y2="150.6" stroke="#b9cec9"/>
<line x1="557.7" y1="133.9" x2="560.7" y2="130.1" stroke="#b9cec9"/>
<line x1="509.6" y1="157.1" x2="509.5" y2="152.5" stroke="#c8dad5"/>
<line x1="518.2" y1="139.8" x2="517.3" y2="136.7" stroke="#3a524c"/>
<line x1="565.1" y1="121.6" x2="563.6" y2="119.1" stroke="#c8dad5"/>
<line x1="522.8" y1="139.6" x2="526.4" y2="137.9" stroke="#c8dad5"/>
<line x1="542.8" y1="144.3" x2="544.6" y2="140.7" stroke="#b9cec9"/>
<line x1="549.3" y1="131.5" x2="551.3" y2="129.3" stroke="#d2e0dc"/>
<line x1="545.4" y1="146.5" x2="543.9" y2="143.8" stroke="#3a524c"/>
<line x1="505.2" y1="140.9" x2="507.0" y2="137.1" stroke="#b9cec9"/>
<line x1="499.3" y1="143.6" x2="501.7" y2="143.0" stroke="#c8dad5"/>
<line x1="506.7" y1="143.3" x2="508.1" y2="140.3" stroke="#b9cec9"/>
<line x1="562.3" y1="121.1" x2="563.3" y2="117.9" stroke="#3a524c"/>
<line x1="507.5" y1="150.8" x2="505.5" y2="148.9" stroke="#c8dad5"/>
<line x1="556.7" y1="130.8" x2="557.2" y2="127.9" stroke="#3a524c"/>
<line x1="532.9" y1="153.4" x2="530.6" y2="150.0" stroke="#b9cec9"/>
<line x1="527.7" y1="131.0" x2="524.7" y2="130.1" stroke="#b9cec9"/>
<line x1="549.8" y1="127.5" x2="551.8" y2="125.7" stroke="#d2e0dc"/>
<line x1="522.3" y1="143.8" x2="524.3" y2="139.9" stroke="#d2e0dc"/>
<line x1="550.6" y1="134.3" x2="554.0" y2="133.5" stroke="#c8dad5"/>
<line x1="552.2" y1="147.4" x2="550.0" y2="144.3" stroke="#3a524c"/>
<line x1="515.6" y1="153.4" x2="517.0" y2="149.5" stroke="#d2e0dc"/>
<line x1="529.8" y1="129.4" x2="531.5" y2="126.8" stroke="#c8dad5"/>
<line x1="530.6" y1="155.1" x2="529.9" y2="151.4" stroke="#3a524c"/>
<line x1="543.0" y1="127.8" x2="546.4" y2="126.5" stroke="#3a524c"/>
<line x1="566.1" y1="131.1" x2="568.9" y2="127.0" stroke="#c8dad5"/>
<line x1="562.0" y1="139.3" x2="561.8" y2="135.2" stroke="#c8dad5"/>
<line x1="551.2" y1="131.2" x2="551.2" y2="127.2" stroke="#3a524c"/>
<line x1="579.8" y1="124.5" x2="581.9" y2="122.8" stroke="#d2e0dc"/>
<line x1="521.6" y1="145.7" x2="519.5" y2="144.3" stroke="#d2e0dc"/>
<line x1="503.2" y1="146.0" x2="504.9" y2="141.7" stroke="#3a524c"/>
<line x1="571.8" y1="128.1" x2="571.8" y2="124.0" stroke="#b9cec9"/>
<line x1="582.9" y1="131.3" x2="581.2" y2="128.0" stroke="#c8dad5"/>
<line x1="549.8" y1="146.2" x2="546.8" y2="142.2" stroke="#3a524c"/>
<line x1="548.6" y1="129.6" x2="550.4" y2="126.1" stroke="#d2e0dc"/>
<line x1="543.1" y1="147.0" x2="540.7" y2="144.3" stroke="#b9cec9"/>
<line x1="553.0" y1="138.8" x2="550.9" y2="134.9" stroke="#b9cec9"/>
<line x1="544.3" y1="123.0" x2="541.0" y2="121.0" stroke="#b9cec9"/>
<line x1="564.6" y1="139.0" x2="563.0" y2="136.6" stroke="#c8dad5"/>
<line x1="560.3" y1="137.8" x2="556.4" y2="134.9" stroke="#3a524c"/>
<line x1="521.7" y1="156.3" x2="517.2" y2="154.6" stroke="#d2e0dc"/>
<line x1="528.5" y1="144.9" x2="531.5" y2="142.6" stroke="#d2e0dc"/>
<line x1="536.7" y1="126.4" x2="533.5" y2="125.5" stroke="#d2e0dc"/>
<line x1="565.1" y1="141.2" x2="566.3" y2="138.0" stroke="#b9cec9"/>
<line x1="534.7" y1="149.4" x2="537.1" y2="148.6" stroke="#d2e0dc"/>
<line x1="523.4" y1="156.1" x2="523.2" y2="152.8" stroke="#c8dad5"/>
<line x1="541.1" y1="147.6" x2="538.4" y2="146.1" stroke="#d2e0dc"/>
<line x1="502.7" y1="146.7" x2="504.4" y2="143.4" stroke="#b9cec9"/>
<line x1="551.5" y1="147.1" x2="547.7" y2="145.9" stroke="#d2e0dc"/>
<line x1="577.7" y1="129.2" x2="576.5" y2="126.3" stroke="#b9cec9"/>
<line x1="559.4" y1="129.2" x2="557.0" y2="126.4" stroke="#b9cec9"/>
<line x1="552.2" y1="137.0" x2="555.7" y2="135.1" stroke="#b9cec9"/>
<line x1="570.2" y1="129.7" x2="571.9" y2="126.4" stroke="#c8dad5"/>
<line x1="534.7" y1="137.1" x2="533.9" y2="132.6" stroke="#3a524c"/>
<line x1="545.7" y1="143.8" x2="542.2" y2="142.2" stroke="#3a524c"/>
<line x1="547.6" y1="150.4" x2="551.5" y2="149.2" stroke="#3a524c"/>
<line x1="522.5" y1="145.2" x2="521.6" y2="142.6" stroke="#d2e0dc"/>
<line x1="526.7" y1="155.8" x2="524.5" y2="151.5" stroke="#3a524c"/>
<line x1="561.8" y1="136.1" x2="563.8" y2="131.8" stroke="#c8dad5"/>
<line x1="538.8" y1="130.0" x2="542.1" y2="126.7" stroke="#d2e0dc"/>
<line x1="512.1" y1="145.1" x2="510.0" y2="142.2" stroke="#3a524c"/>
<line x1="474.8" y1="160.3" x2="477.2" y2="159.4" stroke="#c8dad5"/>
<line x1="519.0" y1="163.6" x2="521.7" y2="160.1" stroke="#d2e0dc"/>
<line x1="497.5" y1="160.2" x2="500.8" y2="159.6" stroke="#d2e0dc"/>
<line x1="510.0" y1="163.2" x2="514.6" y2="161.6" stroke="#b9cec9"/>
<line x1="517.1" y1="165.9" x2="519.7" y2="164.0" stroke="#b9cec9"/>
<line x1="522.5" y1="168.7" x2="524.9" y2="167.7" stroke="#d2e0dc"/>
<line x1="498.3" y1="165.5" x2="498.4" y2="160.6" stroke="#c8dad5"/>
<line x1="493.7" y1="170.4" x2="493.8" y2="166.7" stroke="#3a524c"/>
<line x1="464.7" y1="167.5" x2="464.0" y2="163.1" stroke="#c8dad5"/>
<line x1="512.5" y1="154.0" x2="510.0" y2="151.5" stroke="#3a524c"/>
<line x1="469.6" y1="164.8" x2="470.6" y2="160.7" stroke="#c8dad5"/>
<line x1="525.9" y1="153.4" x2="526.8" y2="148.6" stroke="#c8dad5"/>
<line x1="498.2" y1="158.8" x2="501.1" y2="158.1" stroke="#b9cec9"/>
<line x1="495.0" y1="172.0" x2="496.3" y2="167.9" stroke="#3a524c"/>
<line x1="481.5" y1="160.4" x2="484.9" y2="159.7" stroke="#d2e0dc"/>
<line x1="494.7" y1="167.7" x2="492.7" y2="163.2" stroke="#d2e0dc"/>
<line x1="473.8" y1="166.4" x2="475.1" y2="163.6" stroke="#c8dad5"/>
<line x1="507.5" y1="159.6" x2="504.4" y2="157.8" stroke="#c8dad5"/>
<line x1="528.6" y1="152.8" x2="528.6" y2="149.3" stroke="#d2e0dc"/>
<line x1="485.3" y1="160.9" x2="486.7" y2="158.1" stroke="#3a524c"/>
<line x1="477.6" y1="161.0" x2="475.2" y2="159.5" stroke="#c8dad5"/>
<line x1="495.4" y1="166.0" x2="498.7" y2="163.2" stroke="#c8dad5"/>
<line x1="492.7" y1="165.7" x2="494.7" y2="163.5" stroke="#d2e0dc"/>
<line x1="496.9" y1="158.4" x2="493.1" y2="157.5" stroke="#3a524c"/>
<line x1="469.4" y1="160.6" x2="466.6" y2="157.3" stroke="#d2e0dc"/>
<line x1="475.1" y1="164.9" x2="472.7" y2="163.4" stroke="#d2e0dc"/>
<line x1="473.5" y1="159.5" x2="474.6" y2="155.9" stroke="#3a524c"/>
<line x1="485.8" y1="159.7" x2="483.4" y2="156.3" stroke="#d2e0dc"/>
<line x1="504.5" y1="156.3" x2="508.3" y2="155.4" stroke="#d2e0dc"/>
<line x1="488.0" y1="158.4" x2="490.6" y2="156.2" stroke="#b9cec9"/>
<line x1="464.7" y1="167.3" x2="467.4" y2="166.5" stroke="#c8dad5"/>
<line x1="537.0" y1="156.8" x2="538.3" y2="154.6" stroke="#d2e0dc"/>
<line x1="525.6" y1="158.5" x2="527.4" y2="154.8" stroke="#c8dad5"/>
<line x1="490.4" y1="168.7" x2="486.9" y2="166.4" stroke="#c8dad5"/>
<line x1="490.2" y1="157.7" x2="485.9" y2="155.7" stroke="#d2e0dc"/>
<line x1="469.4" y1="168.9" x2="468.2" y2="165.1" stroke="#3a524c"/>
<line x1="521.9" y1="160.5" x2="526.1" y2="158.4" stroke="#b9cec9"/>
<line x1="500.5" y1="170.9" x2="504.1" y2="169.1" stroke="#3a524c"/>
<line x1="520.4" y1="157.3" x2="517.0" y2="155.0" stroke="#c8dad5"/>
<line x1="513.6" y1="168.9" x2="511.2" y2="168.0" stroke="#b9cec9"/>
<line x1="510.2" y1="155.4" x2="510.3" y2="151.8" stroke="#c8dad5"/>
<line x1="493.6" y1="158.6" x2="494.5" y2="154.9" stroke="#c8dad5"/>
<line x1="484.1" y1="158.8" x2="486.2" y2="157.1" stroke="#c8dad5"/>
<line x1="465.7" y1="167.3" x2="468.8" y2="165.1" stroke="#3a524c"/>
<line x1="474.6" y1="159.5" x2="476.5" y2="156.6" stroke="#c8dad5"/>
<line x1="517.3" y1="162.1" x2="514.9" y2="159.8" stroke="#3a524c"/>
<line x1="477.9" y1="171.7" x2="477.7" y2="168.7" stroke="#3a524c"/>
<line x1="521.1" y1="160.5" x2="518.0" y2="157.4" stroke="#d2e0dc"/>
<line x1="500.4" y1="162.0" x2="504.5" y2="159.5" stroke="#d2e0dc"/>
<line x1="509.5" y1="166.3" x2="510.0" y2="162.8" stroke="#3a524c"/>
<line x1="528.4" y1="167.5" x2="526.4" y2="164.8" stroke="#c8dad5"/>
<line x1="496.3" y1="158.6" x2="493.4" y2="155.7" stroke="#b9cec9"/>
<line x1="514.8" y1="167.3" x2="512.4" y2="165.3" stroke="#b9cec9"/>
<line x1="542.0" y1="162.3" x2="545.7" y2="161.0" stroke="#b9cec9"/>
<line x1="516.5" y1="152.5" x2="520.9" y2="150.4" stroke="#c8dad5"/>
<line x1="483.5" y1="163.6" x2="485.7" y2="161.3" stroke="#d2e0dc"/>
<line x1="541.2" y1="156.2" x2="538.1" y2="152.5" stroke="#d2e0dc"/>
<line x1="507.7" y1="157.7" x2="505.5" y2="155.8" stroke="#b9cec9"/>
<line x1="492.3" y1="160.2" x2="494.4" y2="155.9" stroke="#c8dad5"/>
<line x1="500.9" y1="168.9" x2="499.6" y2="165.1" stroke="#c8dad5"/>
<line x1="495.8" y1="155.3" x2="496.5" y2="152.1" stroke="#c8dad5"/>
<line x1="540.4" y1="159.3" x2="540.1" y2="155.5" stroke="#c8dad5"/>
<line x1="485.5" y1="161.1" x2="487.1" y2="157.7" stroke="#3a524c"/>
<line x1="544.9" y1="158.9" x2="547.4" y2="158.0" stroke="#c8dad5"/>
<line x1="486.6" y1="168.8" x2="484.9" y2="164.0" stroke="#3a524c"/>
<line x1="520.5" y1="163.9" x2="518.2" y2="162.3" stroke="#c8dad5"/>
<line x1="509.9" y1="165.6" x2="510.8" y2="163.0" stroke="#b9cec9"/>
<line x1="498.7" y1="154.9" x2="496.7" y2="152.0" stroke="#d2e0dc"/>
<line x1="495.2" y1="172.5" x2="494.8" y2="169.4" stroke="#c8dad5"/>
<line x1="531.9" y1="166.8" x2="530.4" y2="162.5" stroke="#3a524c"/>
<line x1="502.3" y1="166.5" x2="500.7" y2="162.2" stroke="#d2e0dc"/>
<line x1="487.2" y1="160.8" x2="485.7" y2="157.4" stroke="#3a524c"/>
<line x1="485.5" y1="156.7" x2="487.5" y2="153.1" stroke="#d2e0dc"/>
<line x1="533.1" y1="165.8" x2="531.8" y2="163.6" stroke="#d2e0dc"/>
<line x1="498.7" y1="162.9" x2="498.7" y2="160.2" stroke="#b9cec9"/>
<line x1="494.5" y1="167.4" x2="495.9" y2="163.8" stroke="#b9cec9"/>
<line x1="511.1" y1="164.4" x2="513.4" y2="161.9" stroke="#b9cec9"/>
<line x1="587.7" y1="152.1" x2="590.4" y2="150.6" stroke="#3a524c"/>
<line x1="591.0" y1="167.8" x2="592.6" y2="165.3" stroke="#d2e0dc"/>
<line x1="555.9" y1="161.9" x2="554.0" y2="159.7" stroke="#c8dad5"/>
<line x1="587.2" y1="151.4" x2="590.0" y2="148.6" stroke="#c8dad5"/>
<line x1="583.4" y1="142.4" x2="580.4" y2="139.3" stroke="#d2e0dc"/>
<line x1="554.7" y1="151.5" x2="556.2" y2="147.4" stroke="#c8dad5"/>
<line x1="592.8" y1="162.0" x2="594.4" y2="159.6" stroke="#c8dad5"/>
<line x1="573.5" y1="148.7" x2="572.2" y2="146.1" stroke="#3a524c"/>
<line x1="583.6" y1="144.5" x2="583.1" y2="140.5" stroke="#b9cec9"/>
<line x1="569.0" y1="159.1" x2="565.1" y2="156.2" stroke="#c8dad5"/>
<line x1="589.7" y1="153.2" x2="586.0" y2="151.1" stroke="#d2e0dc"/>
<line x1="588.4" y1="150.5" x2="592.7" y2="148.8" stroke="#d2e0dc"/>
<line x1="557.1" y1="165.5" x2="556.1" y2="162.0" stroke="#b9cec9"/>
<line x1="578.1" y1="158.8" x2="582.5" y2="157.9" stroke="#c8dad5"/>
<line x1="563.7" y1="148.5" x2="561.9" y2="144.1" stroke="#c8dad5"/>
<line x1="554.8" y1="165.0" x2="553.0" y2="163.0" stroke="#d2e0dc"/>
<line x1="578.2" y1="170.4" x2="577.4" y2="167.6" stroke="#b9cec9"/>
<line x1="564.1" y1="156.7" x2="567.4" y2="155.0" stroke="#c8dad5"/>
<line x1="596.8" y1="153.4" x2="597.3" y2="149.6" stroke="#b9cec9"/>
<line x1="588.8" y1="161.4" x2="590.8" y2="158.7" stroke="#b9cec9"/>
<line x1="567.5" y1="149.0" x2="566.1" y2="145.0" stroke="#d2e0dc"/>
<line x1="595.9" y1="163.2" x2="597.0" y2="158.6" stroke="#3a524c"/>
<line x1="596.4" y1="154.9" x2="592.4" y2="152.0" stroke="#b9cec9"/>
<line x1="564.0" y1="163.5" x2="568.0" y2="161.2" stroke="#3a524c"/>
<line x1="548.7" y1="156.9" x2="552.5" y2="156.0" stroke="#d2e0dc"/>
<line x1="564.6" y1="148.2" x2="566.7" y2="145.1" stroke="#d2e0dc"/>
<line x1="605.9" y1="145.4" x2="607.4" y2="142.5" stroke="#b9cec9"/>
<line x1="595.0" y1="165.0" x2="591.9" y2="161.7" stroke="#c8dad5"/>
<line x1="569.6" y1="147.0" x2="568.5" y2="144.3" stroke="#b9cec9"/>
<line x1="554.2" y1="170.3" x2="550.4" y2="167.1" stroke="#d2e0dc"/>
<line x1="582.5" y1="157.8" x2="583.1" y2="155.2" stroke="#c8dad5"/>
<line x1="563.0" y1="170.6" x2="562.5" y2="166.5" stroke="#b9cec9"/>
<line x1="552.8" y1="170.2" x2="555.2" y2="168.1" stroke="#c8dad5"/>
<line x1="588.2" y1="163.4" x2="590.8" y2="161.2" stroke="#c8dad5"/>
<line x1="578.1" y1="151.9" x2="580.5" y2="150.1" stroke="#3a524c"/>
<line x1="581.9" y1="144.3" x2="582.7" y2="139.7" stroke="#b9cec9"/>
<line x1="606.2" y1="157.6" x2="603.8" y2="155.5" stroke="#3a524c"/>
<line x1="603.0" y1="143.7" x2="601.2" y2="141.3" stroke="#d2e0dc"/>
<line x1="573.4" y1="151.5" x2="575.0" y2="147.8" stroke="#d2e0dc"/>
<line x1="583.8" y1="146.5" x2="585.4" y2="143.9" stroke="#3a524c"/>
<line x1="607.0" y1="152.0" x2="608.3" y2="147.8" stroke="#3a524c"/>
<line x1="597.3" y1="147.7" x2="596.8" y2="144.8" stroke="#3a524c"/>
<line x1="604.1" y1="152.4" x2="604.1" y2="148.8" stroke="#b9cec9"/>
<line x1="560.7" y1="153.9" x2="564.9" y2="151.8" stroke="#c8dad5"/>
<line x1="573.7" y1="146.1" x2="571.0" y2="143.5" stroke="#b9cec9"/>
<line x1="586.2" y1="151.6" x2="588.1" y2="149.3" stroke="#b9cec9"/>
<line x1="588.6" y1="147.7" x2="585.8" y2="146.8" stroke="#3a524c"/>
<line x1="573.0" y1="150.0" x2="573.9" y2="147.2" stroke="#3a524c"/>
<line x1="583.8" y1="143.9" x2="584.5" y2="140.0" stroke="#c8dad5"/>
<line x1="562.1" y1="162.1" x2="564.5" y2="158.5" stroke="#3a524c"/>
<line x1="604.3" y1="149.7" x2="605.1" y2="145.5" stroke="#3a524c"/>
<line x1="563.7" y1="152.9" x2="562.4" y2="148.2" stroke="#d2e0dc"/>
<line x1="595.3" y1="165.2" x2="596.6" y2="162.1" stroke="#b9cec9"/>
<line x1="573.6" y1="170.6" x2="574.3" y2="166.7" stroke="#c8dad5"/>
<line x1="549.6" y1="160.0" x2="550.1" y2="156.6" stroke="#b9cec9"/>
<line x1="576.1" y1="153.0" x2="576.6" y2="149.6" stroke="#d2e0dc"/>
<line x1="591.5" y1="151.9" x2="588.7" y2="150.9" stroke="#3a524c"/>
<line x1="599.8" y1="145.4" x2="597.2" y2="144.6" stroke="#c8dad5"/>
<line x1="567.5" y1="165.1" x2="566.3" y2="162.9" stroke="#b9cec9"/>
<line x1="600.8" y1="157.1" x2="597.7" y2="156.3" stroke="#3a524c"/>
<line x1="595.3" y1="150.4" x2="596.4" y2="147.2" stroke="#3a524c"/>
<line x1="589.4" y1="143.0" x2="586.6" y2="140.8" stroke="#3a524c"/>
<line x1="567.4" y1="154.9" x2="567.3" y2="151.6" stroke="#d2e0dc"/>
<line x1="562.5" y1="153.9" x2="560.6" y2="151.4" stroke="#b9cec9"/>
<line x1="586.8" y1="146.4" x2="583.8" y2="143.5" stroke="#b9cec9"/>
<line x1="605.7" y1="148.0" x2="602.8" y2="145.2" stroke="#b9cec9"/>
<line x1="557.3" y1="172.1" x2="557.4" y2="168.7" stroke="#d2e0dc"/>
<line x1="551.9" y1="154.2" x2="556.2" y2="153.1" stroke="#b9cec9"/>
<line x1="555.0" y1="159.5" x2="555.5" y2="156.3" stroke="#3a524c"/>
<line x1="570.5" y1="147.5" x2="569.6" y2="145.1" stroke="#b9cec9"/>
<line x1="550.0" y1="165.6" x2="553.5" y2="162.6" stroke="#b9cec9"/>
<line x1="582.3" y1="162.1" x2="578.6" y2="159.5" stroke="#3a524c"/>
<line x1="565.8" y1="170.8" x2="565.6" y2="167.3" stroke="#3a524c"/>
<line x1="560.6" y1="169.3" x2="563.6" y2="166.8" stroke="#c8dad5"/>
<line x1="553.9" y1="159.7" x2="554.1" y2="155.3" stroke="#d2e0dc"/>
<line x1="590.2" y1="149.0" x2="586.7" y2="147.7" stroke="#c8dad5"/>
<line x1="588.8" y1="168.8" x2="585.1" y2="167.1" stroke="#b9cec9"/>
<line x1="571.4" y1="150.8" x2="573.8" y2="147.5" stroke="#3a524c"/>
<line x1="597.9" y1="160.1" x2="594.2" y2="157.1" stroke="#d2e0dc"/>
<line x1="573.3" y1="155.8" x2="577.5" y2="154.3" stroke="#d2e0dc"/>
<line x1="558.5" y1="160.6" x2="560.6" y2="158.8" stroke="#3a524c"/>
<line x1="600.1" y1="155.6" x2="596.9" y2="154.1" stroke="#b9cec9"/>
<line x1="553.8" y1="156.2" x2="551.5" y2="154.1" stroke="#3a524c"/>
<line x1="585.0" y1="164.7" x2="586.4" y2="160.5" stroke="#d2e0dc"/>
<line x1="599.9" y1="151.7" x2="601.9" y2="149.4" stroke="#c8dad5"/>
<line x1="588.9" y1="147.4" x2="589.0" y2="142.8" stroke="#d2e0dc"/>
<line x1="566.4" y1="163.3" x2="568.4" y2="160.7" stroke="#b9cec9"/>
<line x1="559.6" y1="159.8" x2="562.2" y2="156.6" stroke="#d2e0dc"/>
<line x1="579.2" y1="153.6" x2="575.9" y2="151.7" stroke="#b9cec9"/>
<line x1="596.8" y1="161.5" x2="598.1" y2="157.7" stroke="#c8dad5"/>
<line x1="552.5" y1="168.9" x2="554.6" y2="167.3" stroke="#b9cec9"/>
<line x1="597.5" y1="160.8" x2="602.0" y2="159.8" stroke="#b9cec9"/>
<line x1="575.0" y1="150.8" x2="577.1" y2="147.7" stroke="#3a524c"/>
<line x1="561.4" y1="157.9" x2="563.9" y2="155.3" stroke="#c8dad5"/>
<line x1="600.8" y1="149.1" x2="597.8" y2="147.4" stroke="#b9cec9"/>
<line x1="638.1" y1="141.8" x2="637.4" y2="139.2" stroke="#d2e0dc"/>
<line x1="655.9" y1="138.0" x2="652.1" y2="136.2" stroke="#c8dad5"/>
<line x1="636.9" y1="151.9" x2="639.2" y2="149.6" stroke="#c8dad5"/>
<line x1="650.8" y1="140.4" x2="653.7" y2="138.7" stroke="#b9cec9"/>
<line x1="660.1" y1="133.1" x2="659.4" y2="130.3" stroke="#b9cec9"/>
<line x1="641.7" y1="152.0" x2="638.3" y2="150.0" stroke="#d2e0dc"/>
<line x1="657.1" y1="157.4" x2="659.5" y2="156.5" stroke="#b9cec9"/>
<line x1="666.4" y1="149.7" x2="668.9" y2="148.4" stroke="#c8dad5"/>
<line x1="661.0" y1="154.5" x2="663.3" y2="151.6" stroke="#3a524c"/>
<line x1="666.3" y1="146.3" x2="663.4" y2="142.5" stroke="#d2e0dc"/>
<line x1="633.0" y1="141.8" x2="634.3" y2="137.1" stroke="#c8dad5"/>
<line x1="640.6" y1="143.9" x2="642.1" y2="141.7" stroke="#3a524c"/>
<line x1="642.3" y1="162.2" x2="640.0" y2="158.5" stroke="#d2e0dc"/>
<line x1="645.3" y1="137.0" x2="648.3" y2="136.0" stroke="#d2e0dc"/>
<line x1="630.9" y1="143.9" x2="629.3" y2="140.2" stroke="#3a524c"/>
<line x1="650.6" y1="146.9" x2="654.4" y2="144.9" stroke="#b9cec9"/>
<line x1="644.0" y1="144.3" x2="641.0" y2="141.6" stroke="#c8dad5"/>
<line x1="645.2" y1="146.9" x2="643.1" y2="145.6" stroke="#c8dad5"/>
<line x1="661.5" y1="133.6" x2="660.0" y2="130.2" stroke="#c8dad5"/>
<line x1="661.6" y1="137.9" x2="665.1" y2="135.4" stroke="#c8dad5"/>
<line x1="652.4" y1="133.6" x2="652.9" y2="130.8" stroke="#3a524c"/>
<line x1="652.3" y1="160.5" x2="649.6" y2="156.3" stroke="#d2e0dc"/>
<line x1="636.6" y1="135.4" x2="639.4" y2="133.8" stroke="#b9cec9"/>
<line x1="664.1" y1="139.5" x2="663.5" y2="136.5" stroke="#3a524c"/>
<line x1="650.8" y1="150.0" x2="647.8" y2="147.5" stroke="#c8dad5"/>
<line x1="654.3" y1="126.2" x2="655.2" y2="121.8" stroke="#b9cec9"/>
<line x1="654.2" y1="149.4" x2="656.0" y2="146.6" stroke="#3a524c"/>
<line x1="644.0" y1="143.0" x2="644.9" y2="138.6" stroke="#c8dad5"/>
<line x1="630.7" y1="155.9" x2="626.2" y2="154.3" stroke="#d2e0dc"/>
<line x1="632.9" y1="151.4" x2="635.3" y2="149.5" stroke="#3a524c"/>
<line x1="658.4" y1="139.1" x2="662.0" y2="136.0" stroke="#d2e0dc"/>
<line x1="641.1" y1="161.5" x2="638.7" y2="157.7" stroke="#d2e0dc"/>
<line x1="647.0" y1="142.2" x2="648.6" y2="139.6" stroke="#b9cec9"/>
<line x1="661.0" y1="143.9" x2="658.3" y2="143.0" stroke="#b9cec9"/>
<line x1="648.0" y1="160.2" x2="646.3" y2="158.3" stroke="#c8dad5"/>
<line x1="657.5" y1="142.3" x2="658.0" y2="138.9" stroke="#b9cec9"/>
<line x1="665.0" y1="145.5" x2="663.6" y2="142.9" stroke="#d2e0dc"/>
<line x1="665.1" y1="135.8" x2="661.7" y2="134.1" stroke="#3a524c"/>
<line x1="644.4" y1="143.3" x2="648.8" y2="141.4" stroke="#3a524c"/>
<line x1="635.1" y1="148.3" x2="637.7" y2="145.3" stroke="#d2e0dc"/>
<line x1="639.0" y1="152.9" x2="642.2" y2="150.6" stroke="#3a524c"/>
<line x1="649.1" y1="152.5" x2="651.9" y2="150.7" stroke="#c8dad5"/>
<line x1="644.8" y1="142.6" x2="646.9" y2="139.2" stroke="#b9cec9"/>
<line x1="663.0" y1="139.6" x2="664.7" y2="135.3" stroke="#c8dad5"/>
<line x1="659.8" y1="146.3" x2="662.7" y2="144.9" stroke="#c8dad5"/>
<line x1="632.4" y1="151.9" x2="628.4" y2="149.7" stroke="#3a524c"/>
<line x1="655.3" y1="157.9" x2="659.5" y2="156.1" stroke="#b9cec9"/>
<line x1="631.8" y1="158.6" x2="636.2" y2="157.6" stroke="#c8dad5"/>
<line x1="664.2" y1="130.2" x2="664.3" y2="127.3" stroke="#3a524c"/>
<line x1="647.2" y1="142.6" x2="650.2" y2="139.5" stroke="#b9cec9"/>
<line x1="663.5" y1="135.5" x2="664.1" y2="132.3" stroke="#b9cec9"/>
<line x1="663.6" y1="139.3" x2="667.0" y2="136.2" stroke="#b9cec9"/>
<line x1="645.9" y1="130.9" x2="647.8" y2="128.0" stroke="#c8dad5"/>
<line x1="635.8" y1="141.3" x2="638.4" y2="138.8" stroke="#3a524c"/>
<line x1="658.4" y1="150.7" x2="661.1" y2="149.6" stroke="#c8dad5"/>
<line x1="648.1" y1="139.8" x2="648.9" y2="135.7" stroke="#c8dad5"/>
<line x1="665.0" y1="135.1" x2="663.7" y2="130.9" stroke="#d2e0dc"/>
<line x1="652.0" y1="129.6" x2="652.4" y2="126.5" stroke="#c8dad5"/>
<line x1="657.7" y1="126.4" x2="657.4" y2="122.9" stroke="#3a524c"/>
<line x1="657.5" y1="142.9" x2="658.2" y2="140.2" stroke="#c8dad5"/>
<line x1="653.7" y1="156.3" x2="656.5" y2="155.5" stroke="#3a524c"/>
<line x1="638.8" y1="130.9" x2="638.7" y2="127.7" stroke="#c8dad5"/>
<line x1="667.5" y1="144.9" x2="668.2" y2="141.9" stroke="#c8dad5"/>
<line x1="627.7" y1="150.7" x2="627.1" y2="146.5" stroke="#3a524c"/>
<line x1="658.6" y1="154.4" x2="656.5" y2="150.9" stroke="#d2e0dc"/>
<line x1="666.4" y1="144.1" x2="669.8" y2="143.2" stroke="#c8dad5"/>
<line x1="638.8" y1="161.3" x2="637.0" y2="159.3" stroke="#d2e0dc"/>
<line x1="658.1" y1="149.6" x2="653.8" y2="148.3" stroke="#d2e0dc"/>
<line x1="641.3" y1="131.3" x2="639.0" y2="128.8" stroke="#b9cec9"/>
<line x1="650.7" y1="144.8" x2="651.9" y2="141.3" stroke="#d2e0dc"/>
<line x1="631.0" y1="136.4" x2="630.8" y2="131.7" stroke="#d2e0dc"/>
<line x1="661.5" y1="135.9" x2="661.6" y2="133.3" stroke="#b9cec9"/>
<line x1="662.4" y1="149.2" x2="663.3" y2="146.3" stroke="#b9cec9"/>
<line x1="661.8" y1="130.4" x2="665.1" y2="128.8" stroke="#b9cec9"/>
<line x1="659.4" y1="143.4" x2="659.9" y2="138.9" stroke="#3a524c"/>
<line x1="640.2" y1="158.4" x2="638.0" y2="154.2" stroke="#d2e0dc"/>
<line x1="630.3" y1="141.0" x2="634.5" y2="139.0" stroke="#3a524c"/>
<line x1="660.8" y1="139.4" x2="664.7" y2="136.4" stroke="#c8dad5"/>
<line x1="656.6" y1="150.1" x2="657.9" y2="147.2" stroke="#c8dad5"/>
<line x1="640.6" y1="134.3" x2="637.5" y2="132.1" stroke="#d2e0dc"/>
<line x1="643.8" y1="128.4" x2="642.3" y2="124.9" stroke="#b9cec9"/>
<line x1="774.9" y1="59.2" x2="777.2" y2="57.9" stroke="#d2e0dc"/>
<line x1="766.8" y1="74.3" x2="764.6" y2="70.3" stroke="#b9cec9"/>
<line x1="718.1" y1="75.3" x2="722.4" y2="73.7" stroke="#c8dad5"/>
<line x1="752.5" y1="70.5" x2="749.9" y2="69.2" stroke="#d2e0dc"/>
<line x1="753.7" y1="64.0" x2="756.4" y2="60.4" stroke="#3a524c"/>
<line x1="764.0" y1="63.3" x2="765.8" y2="61.5" stroke="#d2e0dc"/>
<line x1="747.4" y1="80.7" x2="750.5" y2="77.5" stroke="#d2e0dc"/>
<line x1="724.9" y1="76.9" x2="720.5" y2="75.3" stroke="#b9cec9"/>
<line x1="726.8" y1="70.2" x2="728.9" y2="67.8" stroke="#d2e0dc"/>
<line x1="725.0" y1="83.2" x2="720.5" y2="81.4" stroke="#d2e0dc"/>
<line x1="760.3" y1="81.0" x2="758.7" y2="78.8" stroke="#b9cec9"/>
<line x1="762.1" y1="76.1" x2="764.6" y2="73.1" stroke="#3a524c"/>
<line x1="755.7" y1="83.1" x2="753.7" y2="80.2" stroke="#c8dad5"/>
<line x1="728.6" y1="79.7" x2="731.8" y2="76.5" stroke="#c8dad5"/>
<line x1="746.3" y1="62.9" x2="747.9" y2="60.6" stroke="#c8dad5"/>
<line x1="737.2" y1="81.4" x2="734.8" y2="78.1" stroke="#c8dad5"/>
<line x1="746.5" y1="68.3" x2="747.6" y2="65.2" stroke="#c8dad5"/>
<line x1="730.8" y1="91.0" x2="727.3" y2="89.7" stroke="#b9cec9"/>
<line x1="739.9" y1="64.5" x2="737.2" y2="63.3" stroke="#b9cec9"/>
<line x1="749.3" y1="87.4" x2="752.6" y2="84.1" stroke="#c8dad5"/>
<line x1="759.9" y1="58.0" x2="762.3" y2="55.0" stroke="#d2e0dc"/>
<line x1="750.2" y1="61.8" x2="746.8" y2="60.7" stroke="#b9cec9"/>
<line x1="709.7" y1="83.7" x2="706.2" y2="80.5" stroke="#c8dad5"/>
<line x1="755.3" y1="76.8" x2="757.6" y2="72.7" stroke="#b9cec9"/>
<line x1="753.1" y1="78.8" x2="752.3" y2="75.8" stroke="#c8dad5"/>
<line x1="735.7" y1="79.2" x2="737.0" y2="74.8" stroke="#b9cec9"/>
<line x1="734.5" y1="82.9" x2="732.2" y2="80.7" stroke="#d2e0dc"/>
<line x1="714.3" y1="89.9" x2="715.0" y2="85.1" stroke="#b9cec9"/>
<line x1="745.5" y1="85.0" x2="744.4" y2="80.7" stroke="#c8dad5"/>
<line x1="742.4" y1="84.1" x2="744.8" y2="81.0" stroke="#3a524c"/>
<line x1="763.5" y1="67.7" x2="764.8" y2="64.5" stroke="#d2e0dc"/>
<line x1="760.9" y1="75.1" x2="765.0" y2="72.1" stroke="#d2e0dc"/>
<line x1="713.2" y1="81.7" x2="713.3" y2="77.7" stroke="#3a524c"/>
<line x1="758.1" y1="62.2" x2="760.2" y2="57.8" stroke="#d2e0dc"/>
<line x1="759.1" y1="68.8" x2="762.9" y2="66.5" stroke="#c8dad5"/>
<line x1="727.7" y1="76.8" x2="725.2" y2="76.1" stroke="#b9cec9"/>
<line x1="717.2" y1="90.5" x2="716.5" y2="85.9" stroke="#c8dad5"/>
<line x1="719.4" y1="91.4" x2="716.1" y2="87.8" stroke="#3a524c"/>
<line x1="738.7" y1="86.0" x2="734.6" y2="84.6" stroke="#b9cec9"/>
<line x1="750.2" y1="84.6" x2="748.6" y2="82.3" stroke="#3a524c"/>
<line x1="767.8" y1="58.1" x2="769.8" y2="54.5" stroke="#3a524c"/>
<line x1="723.2" y1="90.3" x2="726.1" y2="86.6" stroke="#b9cec9"/>
<line x1="774.9" y1="60.0" x2="770.8" y2="58.7" stroke="#c8dad5"/>
<line x1="770.4" y1="67.7" x2="769.4" y2="65.1" stroke="#b9cec9"/>
<line x1="750.3" y1="80.7" x2="749.6" y2="77.3" stroke="#3a524c"/>
<line x1="703.8" y1="89.5" x2="702.5" y2="85.9" stroke="#c8dad5"/>
<line x1="745.8" y1="81.6" x2="747.5" y2="77.4" stroke="#3a524c"/>
<line x1="768.4" y1="76.0" x2="769.4" y2="72.4" stroke="#3a524c"/>
<line x1="733.3" y1="92.0" x2="735.5" y2="89.2" stroke="#c8dad5"/>
<line x1="770.3" y1="75.2" x2="767.9" y2="73.2" stroke="#b9cec9"/>
<line x1="714.8" y1="87.7" x2="713.8" y2="84.6" stroke="#d2e0dc"/>
<line x1="771.7" y1="62.2" x2="772.3" y2="57.3" stroke="#3a524c"/>
<line x1="742.2" y1="81.0" x2="739.9" y2="79.4" stroke="#d2e0dc"/>
<line x1="728.4" y1="70.5" x2="728.9" y2="66.2" stroke="#c8dad5"/>
<line x1="706.6" y1="90.7" x2="710.6" y2="88.6" stroke="#b9cec9"/>
<line x1="760.3" y1="72.0" x2="764.7" y2="70.7" stroke="#d2e0dc"/>
<line x1="743.5" y1="86.0" x2="740.9" y2="82.3" stroke="#3a524c"/>
<line x1="722.2" y1="82.7" x2="720.3" y2="80.8" stroke="#b9cec9"/>
<line x1="728.0" y1="74.4" x2="728.2" y2="71.1" stroke="#b9cec9"/>
<line x1="766.3" y1="62.2" x2="769.6" y2="59.7" stroke="#b9cec9"/>
<line x1="767.7" y1="60.3" x2="767.8" y2="56.3" stroke="#3a524c"/>
<line x1="736.1" y1="66.4" x2="734.8" y2="63.8" stroke="#3a524c"/>
<line x1="737.1" y1="69.9" x2="741.1" y2="67.4" stroke="#d2e0dc"/>
<line x1="731.0" y1="75.7" x2="733.0" y2="71.4" stroke="#c8dad5"/>
<line x1="748.5" y1="86.3" x2="745.8" y2="82.2" stroke="#d2e0dc"/>
<line x1="726.2" y1="77.9" x2="725.3" y2="75.0" stroke="#c8dad5"/>
<line x1="758.8" y1="66.7" x2="757.7" y2="62.7" stroke="#c8dad5"/>
<line x1="743.6" y1="73.3" x2="745.0" y2="70.6" stroke="#b9cec9"/>
<line x1="709.8" y1="93.2" x2="710.5" y2="88.7" stroke="#d2e0dc"/>
<line x1="706.6" y1="93.4" x2="710.0" y2="92.1" stroke="#d2e0dc"/>
<line x1="745.6" y1="87.7" x2="744.7" y2="83.5" stroke="#c8dad5"/>
<line x1="712.2" y1="87.0" x2="715.8" y2="85.2" stroke="#3a524c"/>
<line x1="764.4" y1="59.6" x2="763.9" y2="54.8" stroke="#c8dad5"/>
<line x1="771.1" y1="73.9" x2="766.4" y2="72.4" stroke="#d2e0dc"/>
<line x1="744.8" y1="66.0" x2="743.2" y2="63.5" stroke="#c8dad5"/>
<line x1="746.0" y1="78.6" x2="748.1" y2="76.3" stroke="#c8dad5"/>
<line x1="764.0" y1="56.8" x2="763.6" y2="53.9" stroke="#c8dad5"/>
<line x1="744.0" y1="82.3" x2="747.9" y2="80.7" stroke="#c8dad5"/>
<line x1="737.0" y1="83.2" x2="734.1" y2="82.3" stroke="#c8dad5"/>
<line x1="762.6" y1="79.4" x2="763.0" y2="76.0" stroke="#d2e0dc"/>
<line x1="743.0" y1="71.3" x2="739.6" y2="69.7" stroke="#3a524c"/>
<line x1="745.3" y1="83.8" x2="744.5" y2="79.7" stroke="#b9cec9"/>
<line x1="729.8" y1="85.2" x2="731.6" y2="83.3" stroke="#3a524c"/>
<line x1="736.2" y1="65.6" x2="733.7" y2="64.8" stroke="#d2e0dc"/>
<line x1="771.7" y1="64.7" x2="770.9" y2="59.8" stroke="#3a524c"/>
<line x1="765.0" y1="75.3" x2="764.1" y2="72.1" stroke="#b9cec9"/>
<line x1="751.5" y1="83.3" x2="751.2" y2="79.0" stroke="#d2e0dc"/>
<line x1="749.9" y1="61.1" x2="746.4" y2="59.2" stroke="#d2e0dc"/>
<line x1="748.2" y1="82.1" x2="748.4" y2="78.9" stroke="#c8dad5"/>
<line x1="733.9" y1="85.8" x2="735.3" y2="83.4" stroke="#3a524c"/>
<line x1="760.6" y1="57.8" x2="764.3" y2="56.9" stroke="#c8dad5"/>
<line x1="754.1" y1="75.4" x2="753.1" y2="71.4" stroke="#d2e0dc"/>
<line x1="770.4" y1="74.6" x2="769.7" y2="71.0" stroke="#3a524c"/>
<line x1="757.2" y1="65.4" x2="761.3" y2="63.1" stroke="#c8dad5"/>
<line x1="733.3" y1="90.6" x2="734.9" y2="86.2" stroke="#c8dad5"/>
<line x1="726.9" y1="82.2" x2="726.4" y2="79.3" stroke="#d2e0dc"/>
<line x1="745.5" y1="67.8" x2="748.2" y2="64.1" stroke="#c8dad5"/>
<line x1="706.0" y1="89.4" x2="703.8" y2="88.1" stroke="#b9cec9"/>
<line x1="735.3" y1="75.6" x2="738.9" y2="73.0" stroke="#3a524c"/>
<line x1="742.1" y1="89.9" x2="738.7" y2="86.2" stroke="#d2e0dc"/>
<line x1="763.7" y1="64.9" x2="761.4" y2="60.6" stroke="#c8dad5"/>
<line x1="764.7" y1="78.1" x2="766.7" y2="75.9" stroke="#3a524c"/>
<line x1="740.4" y1="76.1" x2="738.8" y2="73.2" stroke="#c8dad5"/>
<line x1="766.2" y1="76.4" x2="763.7" y2="75.2" stroke="#d2e0dc"/>
<line x1="760.9" y1="79.3" x2="764.5" y2="78.4" stroke="#d2e0dc"/>
<line x1="711.0" y1="89.2" x2="706.5" y2="87.9" stroke="#d2e0dc"/>
<line x1="724.9" y1="80.5" x2="727.8" y2="76.8" stroke="#c8dad5"/>
<line x1="737.4" y1="86.9" x2="735.3" y2="85.2" stroke="#d2e0dc"/>
<line x1="733.4" y1="81.9" x2="735.6" y2="79.6" stroke="#3a524c"/>
<line x1="740.6" y1="89.2" x2="742.3" y2="87.0" stroke="#c8dad5"/>
<line x1="765.1" y1="73.7" x2="768.1" y2="71.5" stroke="#c8dad5"/>
<line x1="716.7" y1="89.0" x2="714.2" y2="87.9" stroke="#3a524c"/>
<line x1="684.6" y1="123.7" x2="682.7" y2="121.8" stroke="#c8dad5"/>
<line x1="692.3" y1="132.9" x2="694.8" y2="130.9" stroke="#3a524c"/>
<line x1="687.6" y1="139.4" x2="689.1" y2="135.7" stroke="#b9cec9"/>
<line x1="707.0" y1="118.8" x2="702.8" y2="117.6" stroke="#d2e0dc"/>
<line x1="678.9" y1="141.4" x2="680.0" y2="138.1" stroke="#b9cec9"/>
<line x1="702.0" y1="136.6" x2="704.5" y2="136.0" stroke="#3a524c"/>
<line x1="682.0" y1="140.6" x2="683.8" y2="138.0" stroke="#c8dad5"/>
<line x1="670.8" y1="129.5" x2="668.4" y2="126.3" stroke="#3a524c"/>
<line x1="674.1" y1="131.2" x2="676.1" y2="127.2" stroke="#3a524c"/>
<line x1="685.4" y1="115.8" x2="682.5" y2="112.0" stroke="#c8dad5"/>
<line x1="674.7" y1="132.2" x2="673.5" y2="129.4" stroke="#3a524c"/>
<line x1="680.0" y1="126.7" x2="678.6" y2="124.4" stroke="#b9cec9"/>
<line x1="680.0" y1="120.5" x2="676.2" y2="118.3" stroke="#c8dad5"/>
<line x1="713.2" y1="132.7" x2="712.7" y2="129.0" stroke="#c8dad5"/>
<line x1="701.8" y1="134.2" x2="698.3" y2="131.4" stroke="#b9cec9"/>
<line x1="679.7" y1="139.2" x2="676.7" y2="135.7" stroke="#3a524c"/>
<line x1="685.9" y1="141.2" x2="682.4" y2="138.4" stroke="#d2e0dc"/>
<line x1="680.7" y1="135.0" x2="683.2" y2="133.9" stroke="#b9cec9"/>
<line x1="685.7" y1="143.1" x2="688.1" y2="139.5" stroke="#b9cec9"/>
<line x1="689.0" y1="137.1" x2="690.0" y2="134.6" stroke="#b9cec9"/>
<line x1="677.9" y1="133.4" x2="677.3" y2="129.3" stroke="#b9cec9"/>
<line x1="691.4" y1="121.4" x2="689.5" y2="117.5" stroke="#c8dad5"/>
<line x1="696.1" y1="125.9" x2="695.1" y2="122.6" stroke="#d2e0dc"/>
<line x1="706.0" y1="119.7" x2="702.0" y2="117.8" stroke="#c8dad5"/>
<line x1="711.1" y1="126.6" x2="714.2" y2="124.9" stroke="#d2e0dc"/>
<line x1="704.5" y1="123.8" x2="709.0" y2="122.3" stroke="#3a524c"/>
<line x1="694.4" y1="145.1" x2="696.9" y2="141.7" stroke="#3a524c"/>
<line x1="699.2" y1="134.4" x2="702.5" y2="133.7" stroke="#d2e0dc"/>
<line x1="680.7" y1="130.3" x2="683.0" y2="127.1" stroke="#b9cec9"/>
<line x1="688.4" y1="119.2" x2="689.9" y2="116.6" stroke="#3a524c"/>
<line x1="693.2" y1="113.0" x2="696.5" y2="109.6" stroke="#c8dad5"/>
<line x1="691.4" y1="123.6" x2="688.0" y2="120.3" stroke="#c8dad5"/>
<line x1="672.4" y1="130.7" x2="672.1" y2="126.8" stroke="#d2e0dc"/>
<line x1="690.7" y1="120.6" x2="689.1" y2="116.7" stroke="#c8dad5"/>
<line x1="700.9" y1="118.5" x2="705.0" y2="115.8" stroke="#d2e0dc"/>
<line x1="704.8" y1="115.1" x2="708.0" y2="112.2" stroke="#c8dad5"/>
<line x1="688.4" y1="116.6" x2="684.9" y2="115.6" stroke="#3a524c"/>
<line x1="673.2" y1="128.5" x2="671.7" y2="124.0" stroke="#d2e0dc"/>
<line x1="697.1" y1="145.3" x2="696.0" y2="143.0" stroke="#d2e0dc"/>
<line x1="703.6" y1="118.8" x2="702.7" y2="114.2" stroke="#3a524c"/>
<line x1="686.2" y1="132.7" x2="684.4" y2="130.3" stroke="#c8dad5"/>
<line x1="699.5" y1="113.8" x2="699.5" y2="109.7" stroke="#d2e0dc"/>
<line x1="705.5" y1="119.2" x2="707.2" y2="117.1" stroke="#3a524c"/>
<line x1="697.8" y1="142.7" x2="696.4" y2="140.6" stroke="#d2e0dc"/>
<line x1="691.4" y1="144.7" x2="694.9" y2="144.0" stroke="#3a524c"/>
<line x1="702.5" y1="126.8" x2="704.4" y2="124.8" stroke="#d2e0dc"/>
<line x1="690.7" y1="127.8" x2="691.5" y2="123.3" stroke="#3a524c"/>
<line x1="706.5" y1="136.7" x2="704.0" y2="133.1" stroke="#c8dad5"/>
<line x1="704.3" y1="132.1" x2="708.5" y2="130.4" stroke="#3a524c"/>
<line x1="704.4" y1="116.7" x2="707.2" y2="115.2" stroke="#d2e0dc"/>
<line x1="713.7" y1="122.1" x2="717.7" y2="120.9" stroke="#c8dad5"/>
<line x1="688.6" y1="138.9" x2="687.7" y2="136.4" stroke="#c8dad5"/>
<line x1="707.1" y1="114.3" x2="704.9" y2="111.0" stroke="#d2e0dc"/>
<line x1="700.2" y1="111.9" x2="703.2" y2="110.6" stroke="#d2e0dc"/>
<line x1="696.4" y1="113.3" x2="695.0" y2="109.3" stroke="#c8dad5"/>
<line x1="686.7" y1="136.4" x2="685.3" y2="134.1" stroke="#3a524c"/>
<line x1="684.8" y1="130.2" x2="686.2" y2="127.3" stroke="#3a524c"/>
<line x1="671.5" y1="135.9" x2="675.2" y2="134.3" stroke="#3a524c"/>
<line x1="695.6" y1="133.6" x2="694.7" y2="129.4" stroke="#d2e0dc"/>
<line x1="694.3" y1="139.6" x2="691.1" y2="136.9" stroke="#3a524c"/>
<line x1="678.2" y1="120.4" x2="676.1" y2="116.9" stroke="#d2e0dc"/>
<line x1="686.4" y1="124.3" x2="684.7" y2="121.5" stroke="#b9cec9"/>
<line x1="677.7" y1="135.8" x2="680.0" y2="132.7" stroke="#b9cec9"/>
<line x1="673.8" y1="124.0" x2="673.3" y2="121.3" stroke="#c8dad5"/>
<line x1="692.3" y1="128.8" x2="688.0" y2="126.6" stroke="#d2e0dc"/>
<line x1="692.6" y1="114.3" x2="690.1" y2="111.1" stroke="#3a524c"/>
<line x1="685.0" y1="136.7" x2="685.1" y2="132.0" stroke="#c8dad5"/>
<line x1="698.9" y1="139.3" x2="701.1" y2="137.3" stroke="#b9cec9"/>
<line x1="706.5" y1="131.5" x2="708.5" y2="128.6" stroke="#b9cec9"/>
<line x1="704.1" y1="121.2" x2="700.4" y2="119.9" stroke="#3a524c"/>
<line x1="701.8" y1="120.1" x2="702.9" y2="116.8" stroke="#c8dad5"/>
<line x1="708.6" y1="115.5" x2="712.1" y2="112.3" stroke="#d2e0dc"/>
<line x1="712.3" y1="125.6" x2="712.7" y2="121.1" stroke="#b9cec9"/>
<line x1="691.8" y1="131.6" x2="688.1" y2="128.7" stroke="#c8dad5"/>
<line x1="689.7" y1="113.2" x2="688.6" y2="110.1" stroke="#3a524c"/>
<line x1="699.0" y1="143.5" x2="697.2" y2="141.7" stroke="#d2e0dc"/>
<line x1="699.0" y1="114.8" x2="698.4" y2="112.3" stroke="#b9cec9"/>
<line x1="678.1" y1="134.3" x2="679.6" y2="131.2" stroke="#d2e0dc"/>
<line x1="702.5" y1="137.7" x2="700.2" y2="133.6" stroke="#c8dad5"/>
<line x1="706.2" y1="137.6" x2="703.9" y2="136.1" stroke="#c8dad5"/>
<line x1="707.9" y1="119.9" x2="704.5" y2="117.1" stroke="#d2e0dc"/>
<line x1="680.1" y1="127.8" x2="681.1" y2="124.6" stroke="#c8dad5"/>
<line x1="690.9" y1="123.0" x2="686.4" y2="121.0" stroke="#b9cec9"/>
<line x1="696.3" y1="138.6" x2="691.6" y2="137.3" stroke="#b9cec9"/>
<line x1="681.3" y1="115.3" x2="680.8" y2="111.1" stroke="#d2e0dc"/>
<line x1="785.1" y1="115.6" x2="787.7" y2="113.0" stroke="#c8dad5"/>
<line x1="795.8" y1="137.1" x2="798.3" y2="136.4" stroke="#3a524c"/>
<line x1="794.4" y1="119.8" x2="795.4" y2="115.2" stroke="#c8dad5"/>
<line x1="810.2" y1="125.6" x2="809.8" y2="122.2" stroke="#b9cec9"/>
<line x1="797.6" y1="119.4" x2="795.0" y2="117.6" stroke="#3a524c"/>
<line x1="806.0" y1="124.9" x2="808.3" y2="121.7" stroke="#d2e0dc"/>
<line x1="805.1" y1="116.0" x2="805.3" y2="111.8" stroke="#c8dad5"/>
<line x1="799.5" y1="133.1" x2="799.1" y2="129.4" stroke="#d2e0dc"/>
<line x1="788.7" y1="139.2" x2="787.3" y2="136.1" stroke="#b9cec9"/>
<line x1="772.3" y1="132.9" x2="774.2" y2="130.1" stroke="#d2e0dc"/>
<line x1="792.5" y1="127.4" x2="789.6" y2="123.7" stroke="#c8dad5"/>
<line x1="775.8" y1="120.1" x2="772.2" y2="118.6" stroke="#b9cec9"/>
<line x1="786.7" y1="140.3" x2="783.6" y2="137.1" stroke="#3a524c"/>
<line x1="810.1" y1="127.4" x2="811.2" y2="122.9" stroke="#b9cec9"/>
<line x1="793.1" y1="128.5" x2="789.3" y2="126.6" stroke="#d2e0dc"/>
<line x1="795.5" y1="128.4" x2="796.9" y2="124.2" stroke="#c8dad5"/>
<line x1="786.2" y1="123.3" x2="789.3" y2="122.4" stroke="#b9cec9"/>
<line x1="799.6" y1="135.5" x2="800.3" y2="132.9" stroke="#b9cec9"/>
<line x1="791.8" y1="128.8" x2="794.2" y2="127.5" stroke="#c8dad5"/>
<line x1="803.1" y1="118.7" x2="802.3" y2="113.8" stroke="#b9cec9"/>
<line x1="775.5" y1="137.7" x2="779.4" y2="134.6" stroke="#3a524c"/>
<line x1="774.8" y1="128.1" x2="778.0" y2="124.7" stroke="#3a524c"/>
<line x1="793.6" y1="114.7" x2="791.1" y2="113.7" stroke="#c8dad5"/>
<line x1="793.8" y1="122.6" x2="794.4" y2="118.6" stroke="#c8dad5"/>
<line x1="784.1" y1="130.8" x2="784.9" y2="127.7" stroke="#3a524c"/>
<line x1="797.3" y1="115.6" x2="797.5" y2="113.0" stroke="#3a524c"/>
<line x1="775.2" y1="134.1" x2="773.6" y2="129.6" stroke="#3a524c"/>
<line x1="814.0" y1="121.7" x2="814.7" y2="119.1" stroke="#3a524c"/>
<line x1="796.8" y1="119.1" x2="799.6" y2="118.1" stroke="#d2e0dc"/>
<line x1="784.5" y1="130.7" x2="785.3" y2="127.7" stroke="#b9cec9"/>
<line x1="812.1" y1="121.8" x2="815.4" y2="118.2" stroke="#3a524c"/>
<line x1="787.5" y1="113.8" x2="790.6" y2="112.4" stroke="#b9cec9"/>
<line x1="780.5" y1="139.2" x2="780.2" y2="135.6" stroke="#d2e0dc"/>
<line x1="802.3" y1="118.7" x2="804.7" y2="116.7" stroke="#c8dad5"/>
<line x1="783.1" y1="122.8" x2="786.2" y2="120.4" stroke="#d2e0dc"/>
<line x1="796.1" y1="137.5" x2="798.9" y2="134.1" stroke="#3a524c"/>
<line x1="793.8" y1="139.2" x2="796.7" y2="135.3" stroke="#b9cec9"/>
<line x1="794.9" y1="138.9" x2="794.9" y2="134.0" stroke="#b9cec9"/>
<line x1="799.0" y1="130.0" x2="799.3" y2="127.5" stroke="#b9cec9"/>
<line x1="794.4" y1="132.2" x2="793.4" y2="129.6" stroke="#3a524c"/>
<line x1="774.0" y1="128.9" x2="772.6" y2="124.5" stroke="#d2e0dc"/>
<line x1="791.6" y1="127.5" x2="793.0" y2="125.3" stroke="#c8dad5"/>
<line x1="773.6" y1="135.0" x2="774.0" y2="131.4" stroke="#3a524c"/>
<line x1="809.0" y1="112.9" x2="808.8" y2="108.5" stroke="#3a524c"/>
<line x1="778.1" y1="123.8" x2="780.8" y2="120.6" stroke="#d2e0dc"/>
<line x1="796.9" y1="128.7" x2="795.3" y2="126.0" stroke="#b9cec9"/>
<line x1="789.8" y1="135.6" x2="792.0" y2="131.4" stroke="#c8dad5"/>
<line x1="771.9" y1="123.9" x2="770.6" y2="120.3" stroke="#3a524c"/>
<line x1="794.4" y1="125.1" x2="796.5" y2="122.0" stroke="#b9cec9"/>
<line x1="778.1" y1="131.8" x2="776.4" y2="128.3" stroke="#d2e0dc"/>
<line x1="770.8" y1="131.5" x2="767.8" y2="129.5" stroke="#d2e0dc"/>
<line x1="792.8" y1="137.5" x2="794.7" y2="133.5" stroke="#3a524c"/>
<line x1="787.8" y1="128.7" x2="785.8" y2="126.1" stroke="#b9cec9"/>
<line x1="785.7" y1="124.5" x2="785.2" y2="120.1" stroke="#d2e0dc"/>
<line x1="773.9" y1="128.5" x2="771.5" y2="126.5" stroke="#d2e0dc"/>
<line x1="801.1" y1="123.1" x2="796.9" y2="120.9" stroke="#d2e0dc"/>
<line x1="772.6" y1="139.0" x2="773.9" y2="134.4" stroke="#c8dad5"/>
<line x1="795.1" y1="125.8" x2="798.3" y2="124.4" stroke="#b9cec9"/>
<line x1="791.6" y1="125.5" x2="788.5" y2="122.5" stroke="#3a524c"/>
<line x1="781.6" y1="124.6" x2="780.1" y2="120.9" stroke="#3a524c"/>
<line x1="785.1" y1="119.0" x2="785.0" y2="114.5" stroke="#b9cec9"/>
<line x1="781.0" y1="125.8" x2="783.6" y2="125.1" stroke="#b9cec9"/>
<line x1="780.4" y1="134.4" x2="776.2" y2="131.9" stroke="#3a524c"/>
<line x1="792.9" y1="117.3" x2="794.3" y2="113.5" stroke="#c8dad5"/>
<line x1="788.4" y1="116.2" x2="788.8" y2="113.1" stroke="#b9cec9"/>
<line x1="760.2" y1="143.1" x2="761.4" y2="140.2" stroke="#c8dad5"/>
<line x1="728.8" y1="142.9" x2="729.9" y2="138.4" stroke="#3a524c"/>
<line x1="759.6" y1="149.1" x2="756.3" y2="145.9" stroke="#3a524c"/>
<line x1="717.9" y1="154.2" x2="720.4" y2="152.7" stroke="#c8dad5"/>
<line x1="756.1" y1="143.8" x2="758.2" y2="140.9" stroke="#c8dad5"/>
<line x1="741.2" y1="135.3" x2="743.2" y2="132.4" stroke="#d2e0dc"/>
<line x1="734.0" y1="139.8" x2="736.6" y2="137.7" stroke="#b9cec9"/>
<line x1="717.4" y1="144.5" x2="720.1" y2="141.4" stroke="#c8dad5"/>
<line x1="743.1" y1="147.1" x2="740.7" y2="144.8" stroke="#b9cec9"/>
<line x1="723.9" y1="148.3" x2="721.3" y2="145.3" stroke="#b9cec9"/>
<line x1="723.4" y1="148.9" x2="721.3" y2="144.9" stroke="#3a524c"/>
<line x1="775.9" y1="135.8" x2="779.2" y2="134.0" stroke="#b9cec9"/>
<line x1="715.0" y1="150.6" x2="717.7" y2="149.2" stroke="#d2e0dc"/>
<line x1="749.4" y1="150.5" x2="750.1" y2="147.9" stroke="#3a524c"/>
<line x1="740.1" y1="137.1" x2="739.4" y2="134.5" stroke="#d2e0dc"/>
<line x1="731.2" y1="142.8" x2="727.7" y2="140.9" stroke="#c8dad5"/>
<line x1="738.9" y1="144.4" x2="740.2" y2="140.1" stroke="#3a524c"/>
<line x1="735.5" y1="140.4" x2="734.5" y2="137.4" stroke="#d2e0dc"/>
<line x1="726.8" y1="147.6" x2="729.3" y2="146.9" stroke="#b9cec9"/>
<line x1="778.0" y1="138.7" x2="780.5" y2="137.9" stroke="#3a524c"/>
<line x1="757.4" y1="141.0" x2="757.4" y2="137.3" stroke="#b9cec9"/>
<line x1="750.4" y1="149.6" x2="753.6" y2="146.1" stroke="#c8dad5"/>
<line x1="755.6" y1="149.7" x2="759.4" y2="147.4" stroke="#d2e0dc"/>
<line x1="716.1" y1="155.6" x2="714.3" y2="152.4" stroke="#3a524c"/>
<line x1="765.7" y1="147.0" x2="769.9" y2="144.6" stroke="#b9cec9"/>
<line x1="716.5" y1="155.3" x2="713.6" y2="153.3" stroke="#b9cec9"/>
<line x1="755.7" y1="141.8" x2="758.5" y2="138.7" stroke="#d2e0dc"/>
<line x1="711.5" y1="151.1" x2="715.1" y2="148.6" stroke="#b9cec9"/>
<line x1="723.2" y1="152.8" x2="720.2" y2="149.6" stroke="#c8dad5"/>
<line x1="752.9" y1="146.7" x2="756.9" y2="145.8" stroke="#b9cec9"/>
<line x1="715.8" y1="155.1" x2="714.8" y2="151.6" stroke="#b9cec9"/>
<line x1="759.9" y1="142.2" x2="763.9" y2="141.0" stroke="#b9cec9"/>
<line x1="727.0" y1="146.6" x2="725.3" y2="144.0" stroke="#c8dad5"/>
<line x1="733.8" y1="143.8" x2="737.7" y2="140.7" stroke="#3a524c"/>
<line x1="750.6" y1="136.1" x2="748.1" y2="132.8" stroke="#d2e0dc"/>
<line x1="744.2" y1="140.0" x2="748.9" y2="139.0" stroke="#3a524c"/>
<line x1="748.7" y1="147.8" x2="744.9" y2="145.4" stroke="#d2e0dc"/>
<line x1="759.9" y1="140.6" x2="758.7" y2="137.6" stroke="#d2e0dc"/>
<line x1="727.6" y1="148.0" x2="726.9" y2="145.3" stroke="#b9cec9"/>
<line x1="714.3" y1="148.1" x2="710.9" y2="145.8" stroke="#c8dad5"/>
<line x1="740.5" y1="155.8" x2="741.0" y2="153.0" stroke="#b9cec9"/>
<line x1="748.8" y1="149.8" x2="747.8" y2="146.7" stroke="#c8dad5"/>
<line x1="734.2" y1="152.4" x2="736.2" y2="150.5" stroke="#d2e0dc"/>
<line x1="758.3" y1="146.8" x2="757.1" y2="144.6" stroke="#b9cec9"/>
<line x1="737.8" y1="150.5" x2="734.9" y2="147.7" stroke="#d2e0dc"/>
<line x1="741.3" y1="143.8" x2="740.8" y2="140.3" stroke="#3a524c"/>
<line x1="770.4" y1="145.2" x2="771.7" y2="142.0" stroke="#3a524c"/>
<line x1="771.5" y1="134.1" x2="769.0" y2="133.3" stroke="#c8dad5"/>
<line x1="758.6" y1="147.1" x2="761.6" y2="146.2" stroke="#c8dad5"/>
<line x1="760.3" y1="142.1" x2="762.2" y2="138.3" stroke="#3a524c"/>
<line x1="734.9" y1="141.0" x2="736.3" y2="137.7" stroke="#c8dad5"/>
<line x1="735.5" y1="135.8" x2="737.0" y2="132.6" stroke="#b9cec9"/>
<line x1="730.6" y1="137.8" x2="728.1" y2="136.8" stroke="#c8dad5"/>
<line x1="775.7" y1="138.8" x2="776.4" y2="134.7" stroke="#d2e0dc"/>
<line x1="727.1" y1="143.6" x2="727.0" y2="140.2" stroke="#d2e0dc"/>
<line x1="770.6" y1="141.7" x2="773.9" y2="140.5" stroke="#3a524c"/>
<line x1="755.7" y1="151.3" x2="754.9" y2="148.1" stroke="#3a524c"/>
<line x1="720.8" y1="152.7" x2="721.9" y2="148.9" stroke="#b9cec9"/>
<line x1="749.9" y1="148.6" x2="752.2" y2="144.4" stroke="#c8dad5"/>
<line x1="765.4" y1="143.1" x2="764.0" y2="138.7" stroke="#3a524c"/>
<line x1="738.0" y1="147.4" x2="735.8" y2="143.0" stroke="#c8dad5"/>
<line x1="733.7" y1="151.3" x2="732.6" y2="148.8" stroke="#b9cec9"/>
<line x1="718.3" y1="151.6" x2="715.2" y2="150.4" stroke="#c8dad5"/>
<line x1="762.3" y1="145.6" x2="760.1" y2="142.6" stroke="#3a524c"/>
<line x1="726.3" y1="155.3" x2="726.7" y2="151.8" stroke="#b9cec9"/>
<line x1="773.6" y1="132.8" x2="770.5" y2="129.3" stroke="#d2e0dc"/>
<line x1="728.6" y1="147.3" x2="727.0" y2="142.9" stroke="#b9cec9"/>
<line x1="770.8" y1="136.0" x2="773.3" y2="135.1" stroke="#3a524c"/>
<line x1="743.6" y1="148.2" x2="739.4" y2="145.6" stroke="#d2e0dc"/>
<line x1="733.8" y1="156.2" x2="731.1" y2="154.0" stroke="#3a524c"/>
<line x1="715.6" y1="153.7" x2="717.6" y2="150.2" stroke="#c8dad5"/>
<line x1="738.6" y1="142.9" x2="739.0" y2="138.2" stroke="#3a524c"/>
<line x1="740.1" y1="141.5" x2="737.5" y2="140.7" stroke="#d2e0dc"/>
<line x1="749.5" y1="137.8" x2="745.1" y2="136.1" stroke="#b9cec9"/>
<line x1="740.2" y1="149.5" x2="743.6" y2="146.6" stroke="#d2e0dc"/>
<line x1="797.1" y1="168.9" x2="794.2" y2="165.9" stroke="#c8dad5"/>
<line x1="809.0" y1="155.7" x2="811.3" y2="153.8" stroke="#b9cec9"/>
<line x1="803.9" y1="164.3" x2="804.5" y2="160.0" stroke="#d2e0dc"/>
<line x1="799.6" y1="169.2" x2="800.5" y2="166.0" stroke="#c8dad5"/>
<line x1="784.4" y1="167.5" x2="787.7" y2="165.2" stroke="#d2e0dc"/>
<line x1="804.9" y1="159.4" x2="804.0" y2="156.3" stroke="#d2e0dc"/>
<line x1="796.7" y1="166.5" x2="795.6" y2="163.9" stroke="#c8dad5"/>
<line x1="779.1" y1="163.6" x2="781.3" y2="161.0" stroke="#d2e0dc"/>
<line x1="790.2" y1="165.5" x2="786.9" y2="164.5" stroke="#b9cec9"/>
<line x1="800.9" y1="164.3" x2="801.4" y2="161.1" stroke="#b9cec9"/>
<line x1="779.9" y1="164.0" x2="778.2" y2="160.1" stroke="#b9cec9"/>
<line x1="781.0" y1="165.5" x2="777.9" y2="163.0" stroke="#d2e0dc"/>
<line x1="791.1" y1="162.7" x2="788.0" y2="160.4" stroke="#c8dad5"/>
<line x1="789.0" y1="160.5" x2="785.7" y2="157.3" stroke="#d2e0dc"/>
<line x1="804.3" y1="169.5" x2="806.3" y2="165.3" stroke="#d2e0dc"/>
<line x1="800.5" y1="153.3" x2="799.9" y2="150.7" stroke="#c8dad5"/>
<line x1="778.8" y1="166.0" x2="777.4" y2="161.7" stroke="#c8dad5"/>
<line x1="786.2" y1="160.1" x2="788.7" y2="159.0" stroke="#3a524c"/>
<line x1="808.8" y1="157.7" x2="805.0" y2="156.6" stroke="#3a524c"/>
<line x1="779.3" y1="164.3" x2="777.2" y2="162.2" stroke="#c8dad5"/>
<line x1="785.8" y1="159.2" x2="786.3" y2="156.0" stroke="#c8dad5"/>
<line x1="781.6" y1="168.0" x2="784.7" y2="166.6" stroke="#c8dad5"/>
<line x1="778.6" y1="164.8" x2="777.4" y2="162.0" stroke="#b9cec9"/>
<line x1="811.6" y1="163.3" x2="813.7" y2="159.3" stroke="#d2e0dc"/>
<line x1="792.4" y1="155.6" x2="789.6" y2="152.5" stroke="#b9cec9"/>
<line x1="791.9" y1="158.3" x2="790.3" y2="153.8" stroke="#c8dad5"/>
<line x1="800.1" y1="169.5" x2="796.4" y2="167.4" stroke="#c8dad5"/>
<line x1="788.9" y1="171.1" x2="791.5" y2="167.2" stroke="#c8dad5"/>
<line x1="809.6" y1="167.2" x2="807.2" y2="164.9" stroke="#c8dad5"/>
<line x1="806.0" y1="166.7" x2="809.8" y2="164.1" stroke="#d2e0dc"/>
<line x1="790.4" y1="154.9" x2="790.6" y2="151.2" stroke="#3a524c"/>
<line x1="795.8" y1="159.3" x2="793.0" y2="158.5" stroke="#3a524c"/>
<line x1="801.6" y1="153.0" x2="799.4" y2="151.6" stroke="#3a524c"/>
<line x1="787.4" y1="157.2" x2="787.3" y2="154.4" stroke="#b9cec9"/>
<line x1="805.5" y1="161.7" x2="802.5" y2="159.4" stroke="#c8dad5"/>
<line x1="787.8" y1="157.0" x2="789.1" y2="154.5" stroke="#3a524c"/>
</g>
<path d="M705.5 104 L714 100.5 L717.6 118 L710 122Z" fill="#c9b04a"/>
<path d="M733 119 L755 108.8 L759.5 120 L736 127Z" fill="#cfb650"/>
<ellipse cx="803" cy="62" rx="4" ry="3" fill="#c49a9c" opacity="0.6" filter="url(#b1)"/>
</g>
</svg>
<svg class="abs" style="left:0;top:0" width="1001" height="706" viewBox="49 49 1001 706">
<g stroke="#969c82" stroke-width="2.1" stroke-linecap="round" opacity="0.9">
<path d="M219 481 Q232 505 239.5 526 Q250 550 256 569 Q262 590 267 603 Q280 635 287 660 Q295 690 298 704 Q304 725 310.5 744" fill="none" stroke="#85906f" stroke-width="3.6"/>
<path d="M279 640 Q287 660 295 690 Q298 704 304 725 L310.5 744" fill="none" stroke="#5e6a56" stroke-width="5"/>
<path d="M234.7 514.5 L232.5 511.2 L230.2 508.2 L228.0 505.3 L225.9 503.4 L223.8 502.3 L221.7 501.2 L219.6 500.1 L217.5 499.0 L215.4 498.0 L213.4 496.9 L211.3 495.9 L209.2 494.9 L207.1 494.0 L205.1 493.1 L203.0 492.4 L201.0 492.0 L201.0 492.0 L201.9 493.9 L203.2 495.6 L204.5 497.4 L206.0 499.2 L207.5 500.9 L209.0 502.6 L210.5 504.4 L212.1 506.1 L213.7 507.8 L215.3 509.6 L216.9 511.3 L218.5 513.0 L220.9 514.6 L224.2 516.0 L227.8 517.3 L231.5 518.7Z" fill="#b4b99a" opacity="0.22" stroke="none"/><line x1="233.9" y1="517.1" x2="232.1" y2="509.4"/><line x1="233.9" y1="517.1" x2="226.0" y2="517.5"/><line x1="230.1" y1="514.2" x2="227.4" y2="502.0"/><line x1="230.1" y1="514.2" x2="217.6" y2="514.8"/><line x1="226.3" y1="511.4" x2="223.2" y2="497.3"/><line x1="226.3" y1="511.4" x2="211.9" y2="512.0"/><line x1="222.5" y1="508.5" x2="219.7" y2="496.0"/><line x1="222.5" y1="508.5" x2="209.8" y2="509.0"/><line x1="218.8" y1="505.6" x2="216.3" y2="494.8"/><line x1="218.8" y1="505.6" x2="207.7" y2="506.1"/><line x1="215.0" y1="502.7" x2="213.0" y2="493.7"/><line x1="215.0" y1="502.7" x2="205.7" y2="503.1"/><line x1="211.2" y1="499.8" x2="209.6" y2="492.7"/><line x1="211.2" y1="499.8" x2="203.9" y2="500.1"/><line x1="207.4" y1="496.9" x2="206.3" y2="491.9"/><line x1="207.4" y1="496.9" x2="202.3" y2="497.1"/><line x1="203.6" y1="494.0" x2="203.1" y2="491.4"/><line x1="203.6" y1="494.0" x2="201.0" y2="494.1"/><line x1="235.0" y1="518.0" x2="201.0" y2="492.0" stroke="#7f8870" stroke-width="1.4"/>
<path d="M238.6 510.1 L240.0 506.8 L241.3 503.6 L242.5 500.5 L242.9 497.9 L242.8 495.8 L242.7 493.6 L242.5 491.5 L242.4 489.3 L242.2 487.2 L242.0 485.1 L241.8 482.9 L241.6 480.9 L241.3 478.8 L241.0 476.7 L240.7 474.8 L240.0 473.0 L240.0 473.0 L239.0 474.6 L238.2 476.5 L237.5 478.4 L236.8 480.4 L236.2 482.4 L235.6 484.4 L235.0 486.4 L234.4 488.5 L233.8 490.6 L233.2 492.6 L232.6 494.7 L232.1 496.8 L232.0 499.4 L232.5 502.7 L233.1 506.1 L233.9 509.6Z" fill="#b4b99a" opacity="0.22" stroke="none"/><line x1="236.2" y1="510.5" x2="241.4" y2="505.5"/><line x1="236.2" y1="510.5" x2="232.1" y2="504.5"/><line x1="236.7" y1="505.7" x2="245.2" y2="497.4"/><line x1="236.7" y1="505.7" x2="230.0" y2="495.8"/><line x1="237.2" y1="500.8" x2="246.2" y2="492.0"/><line x1="237.2" y1="500.8" x2="230.1" y2="490.4"/><line x1="237.7" y1="495.9" x2="245.5" y2="488.3"/><line x1="237.7" y1="495.9" x2="231.5" y2="486.9"/><line x1="238.2" y1="491.0" x2="244.7" y2="484.7"/><line x1="238.2" y1="491.0" x2="233.1" y2="483.5"/><line x1="238.7" y1="486.2" x2="243.8" y2="481.2"/><line x1="238.7" y1="486.2" x2="234.6" y2="480.2"/><line x1="239.2" y1="481.3" x2="242.8" y2="477.8"/><line x1="239.2" y1="481.3" x2="236.3" y2="477.1"/><line x1="239.7" y1="476.4" x2="241.5" y2="474.6"/><line x1="239.7" y1="476.4" x2="238.2" y2="474.3"/><line x1="236.0" y1="512.0" x2="240.0" y2="473.0" stroke="#7f8870" stroke-width="1.4"/>
<path d="M252.1 543.3 L254.3 539.2 L256.3 535.3 L258.1 531.4 L259.1 528.1 L259.4 525.1 L259.7 522.1 L260.0 519.1 L260.2 516.1 L260.5 513.1 L260.7 510.2 L260.9 507.2 L261.1 504.3 L261.3 501.4 L261.4 498.5 L261.4 495.6 L261.0 493.0 L261.0 493.0 L259.5 495.2 L258.3 497.8 L257.1 500.4 L256.0 503.1 L254.8 505.8 L253.7 508.5 L252.6 511.3 L251.6 514.1 L250.5 516.9 L249.4 519.7 L248.4 522.5 L247.3 525.3 L246.7 528.8 L246.7 533.1 L246.8 537.5 L247.0 542.1Z" fill="#b4b99a" opacity="0.22" stroke="none"/><line x1="249.3" y1="543.6" x2="255.4" y2="539.0"/><line x1="249.3" y1="543.6" x2="245.9" y2="536.8"/><line x1="250.4" y1="538.9" x2="259.6" y2="531.9"/><line x1="250.4" y1="538.9" x2="245.2" y2="528.6"/><line x1="251.5" y1="534.1" x2="263.3" y2="525.2"/><line x1="251.5" y1="534.1" x2="244.8" y2="521.0"/><line x1="252.6" y1="529.4" x2="263.6" y2="521.1"/><line x1="252.6" y1="529.4" x2="246.3" y2="517.1"/><line x1="253.7" y1="524.7" x2="263.6" y2="517.2"/><line x1="253.7" y1="524.7" x2="248.1" y2="513.6"/><line x1="254.8" y1="519.9" x2="263.6" y2="513.3"/><line x1="254.8" y1="519.9" x2="249.8" y2="510.2"/><line x1="255.9" y1="515.2" x2="263.5" y2="509.5"/><line x1="255.9" y1="515.2" x2="251.6" y2="506.7"/><line x1="257.0" y1="510.5" x2="263.3" y2="505.7"/><line x1="257.0" y1="510.5" x2="253.4" y2="503.4"/><line x1="258.1" y1="505.8" x2="263.1" y2="502.0"/><line x1="258.1" y1="505.8" x2="255.2" y2="500.2"/><line x1="259.1" y1="501.0" x2="262.7" y2="498.4"/><line x1="259.1" y1="501.0" x2="257.1" y2="497.1"/><line x1="260.2" y1="496.3" x2="262.1" y2="494.9"/><line x1="260.2" y1="496.3" x2="259.2" y2="494.3"/><line x1="249.0" y1="545.0" x2="261.0" y2="493.0" stroke="#7f8870" stroke-width="1.4"/>
<path d="M254.0 566.1 L251.1 561.6 L248.2 557.3 L245.3 553.3 L242.3 550.3 L239.4 548.2 L236.4 546.1 L233.5 544.0 L230.6 541.9 L227.6 539.8 L224.7 537.8 L221.7 535.8 L218.8 533.8 L215.8 531.9 L212.9 530.0 L209.9 528.3 L207.0 527.0 L207.0 527.0 L208.6 529.8 L210.6 532.6 L212.7 535.4 L214.8 538.1 L217.1 540.9 L219.3 543.6 L221.6 546.4 L223.9 549.1 L226.3 551.9 L228.6 554.6 L231.0 557.4 L233.3 560.1 L236.6 562.8 L240.9 565.3 L245.4 567.9 L250.1 570.4Z" fill="#b4b99a" opacity="0.22" stroke="none"/><line x1="252.9" y1="569.0" x2="251.8" y2="560.9"/><line x1="252.9" y1="569.0" x2="244.8" y2="568.7"/><line x1="249.3" y1="565.7" x2="247.7" y2="553.9"/><line x1="249.3" y1="565.7" x2="237.4" y2="565.2"/><line x1="245.7" y1="562.4" x2="243.7" y2="547.5"/><line x1="245.7" y1="562.4" x2="230.6" y2="561.7"/><line x1="242.1" y1="559.1" x2="240.0" y2="543.3"/><line x1="242.1" y1="559.1" x2="226.2" y2="558.4"/><line x1="238.5" y1="555.8" x2="236.5" y2="541.3"/><line x1="238.5" y1="555.8" x2="223.8" y2="555.1"/><line x1="234.8" y1="552.5" x2="233.1" y2="539.2"/><line x1="234.8" y1="552.5" x2="221.5" y2="551.9"/><line x1="231.2" y1="549.2" x2="229.6" y2="537.2"/><line x1="231.2" y1="549.2" x2="219.2" y2="548.6"/><line x1="227.6" y1="545.9" x2="226.2" y2="535.3"/><line x1="227.6" y1="545.9" x2="216.9" y2="545.4"/><line x1="224.0" y1="542.5" x2="222.8" y2="533.4"/><line x1="224.0" y1="542.5" x2="214.8" y2="542.2"/><line x1="220.4" y1="539.2" x2="219.4" y2="531.6"/><line x1="220.4" y1="539.2" x2="212.7" y2="538.9"/><line x1="216.8" y1="535.9" x2="216.0" y2="529.9"/><line x1="216.8" y1="535.9" x2="210.7" y2="535.7"/><line x1="213.1" y1="532.6" x2="212.6" y2="528.4"/><line x1="213.1" y1="532.6" x2="208.8" y2="532.4"/><line x1="209.5" y1="529.3" x2="209.2" y2="527.1"/><line x1="209.5" y1="529.3" x2="207.3" y2="529.2"/><line x1="254.0" y1="570.0" x2="207.0" y2="527.0" stroke="#7f8870" stroke-width="1.4"/>
<path d="M263.9 602.8 L260.0 597.5 L256.0 592.4 L252.1 587.6 L248.3 584.0 L244.4 581.3 L240.5 578.6 L236.7 576.0 L232.8 573.3 L229.0 570.7 L225.1 568.1 L221.2 565.5 L217.4 563.0 L213.5 560.5 L209.7 558.1 L205.8 555.8 L202.0 554.0 L202.0 554.0 L204.4 557.5 L207.2 561.0 L210.2 564.4 L213.3 567.8 L216.4 571.2 L219.5 574.6 L222.7 578.0 L225.9 581.4 L229.1 584.8 L232.3 588.2 L235.6 591.6 L238.8 595.0 L243.0 598.3 L248.4 601.4 L254.0 604.5 L259.8 607.6Z" fill="#b4b99a" opacity="0.22" stroke="none"/><line x1="262.9" y1="606.1" x2="261.5" y2="597.6"/><line x1="262.9" y1="606.1" x2="254.3" y2="606.0"/><line x1="259.3" y1="602.9" x2="257.3" y2="591.3"/><line x1="259.3" y1="602.9" x2="247.5" y2="602.8"/><line x1="255.6" y1="599.8" x2="253.2" y2="585.4"/><line x1="255.6" y1="599.8" x2="241.0" y2="599.7"/><line x1="252.0" y1="596.7" x2="249.1" y2="579.8"/><line x1="252.0" y1="596.7" x2="234.8" y2="596.6"/><line x1="248.3" y1="593.6" x2="245.5" y2="576.5"/><line x1="248.3" y1="593.6" x2="231.0" y2="593.4"/><line x1="244.7" y1="590.5" x2="242.0" y2="574.4"/><line x1="244.7" y1="590.5" x2="228.3" y2="590.3"/><line x1="241.0" y1="587.4" x2="238.5" y2="572.3"/><line x1="241.0" y1="587.4" x2="225.8" y2="587.2"/><line x1="237.4" y1="584.2" x2="235.0" y2="570.3"/><line x1="237.4" y1="584.2" x2="223.2" y2="584.1"/><line x1="233.7" y1="581.1" x2="231.6" y2="568.2"/><line x1="233.7" y1="581.1" x2="220.7" y2="581.0"/><line x1="230.1" y1="578.0" x2="228.1" y2="566.2"/><line x1="230.1" y1="578.0" x2="218.2" y2="577.9"/><line x1="226.4" y1="574.9" x2="224.7" y2="564.3"/><line x1="226.4" y1="574.9" x2="215.7" y2="574.8"/><line x1="222.8" y1="571.8" x2="221.2" y2="562.4"/><line x1="222.8" y1="571.8" x2="213.3" y2="571.7"/><line x1="219.1" y1="568.7" x2="217.8" y2="560.5"/><line x1="219.1" y1="568.7" x2="210.9" y2="568.6"/><line x1="215.5" y1="565.5" x2="214.4" y2="558.7"/><line x1="215.5" y1="565.5" x2="208.6" y2="565.5"/><line x1="211.8" y1="562.4" x2="211.0" y2="557.1"/><line x1="211.8" y1="562.4" x2="206.4" y2="562.4"/><line x1="208.2" y1="559.3" x2="207.6" y2="555.5"/><line x1="208.2" y1="559.3" x2="204.4" y2="559.3"/><line x1="204.6" y1="556.2" x2="204.2" y2="554.2"/><line x1="204.6" y1="556.2" x2="202.6" y2="556.2"/><line x1="264.0" y1="607.0" x2="202.0" y2="554.0" stroke="#7f8870" stroke-width="1.4"/>
<path d="M275.5 618.4 L278.7 613.0 L281.6 607.6 L284.4 602.4 L286.2 597.6 L287.1 593.1 L288.1 588.7 L289.1 584.2 L290.0 579.8 L290.9 575.4 L291.8 570.9 L292.7 566.5 L293.6 562.1 L294.4 557.8 L295.1 553.4 L295.8 549.1 L296.0 545.0 L296.0 545.0 L293.8 548.5 L291.8 552.4 L289.9 556.3 L288.0 560.4 L286.2 564.4 L284.3 568.5 L282.5 572.7 L280.7 576.8 L278.9 581.0 L277.1 585.1 L275.3 589.3 L273.5 593.5 L272.1 598.5 L271.3 604.3 L270.6 610.4 L270.0 616.6Z" fill="#b4b99a" opacity="0.22" stroke="none"/><line x1="272.4" y1="618.7" x2="279.1" y2="614.5"/><line x1="272.4" y1="618.7" x2="269.4" y2="611.4"/><line x1="273.8" y1="614.3" x2="283.0" y2="608.5"/><line x1="273.8" y1="614.3" x2="269.7" y2="604.3"/><line x1="275.2" y1="609.9" x2="286.6" y2="602.7"/><line x1="275.2" y1="609.9" x2="270.2" y2="597.4"/><line x1="276.7" y1="605.4" x2="289.9" y2="597.1"/><line x1="276.7" y1="605.4" x2="270.7" y2="590.9"/><line x1="278.1" y1="601.0" x2="291.5" y2="592.5"/><line x1="278.1" y1="601.0" x2="272.0" y2="586.3"/><line x1="279.5" y1="596.6" x2="292.1" y2="588.6"/><line x1="279.5" y1="596.6" x2="273.8" y2="582.8"/><line x1="280.9" y1="592.2" x2="292.7" y2="584.7"/><line x1="280.9" y1="592.2" x2="275.6" y2="579.3"/><line x1="282.3" y1="587.8" x2="293.3" y2="580.9"/><line x1="282.3" y1="587.8" x2="277.4" y2="575.8"/><line x1="283.7" y1="583.4" x2="293.8" y2="577.0"/><line x1="283.7" y1="583.4" x2="279.2" y2="572.3"/><line x1="285.1" y1="579.0" x2="294.4" y2="573.1"/><line x1="285.1" y1="579.0" x2="281.0" y2="568.9"/><line x1="286.5" y1="574.6" x2="294.9" y2="569.3"/><line x1="286.5" y1="574.6" x2="282.8" y2="565.4"/><line x1="288.0" y1="570.1" x2="295.3" y2="565.5"/><line x1="288.0" y1="570.1" x2="284.6" y2="562.1"/><line x1="289.4" y1="565.7" x2="295.7" y2="561.7"/><line x1="289.4" y1="565.7" x2="286.5" y2="558.7"/><line x1="290.8" y1="561.3" x2="296.1" y2="558.0"/><line x1="290.8" y1="561.3" x2="288.4" y2="555.5"/><line x1="292.2" y1="556.9" x2="296.4" y2="554.3"/><line x1="292.2" y1="556.9" x2="290.3" y2="552.3"/><line x1="293.6" y1="552.5" x2="296.6" y2="550.6"/><line x1="293.6" y1="552.5" x2="292.3" y2="549.2"/><line x1="295.0" y1="548.1" x2="296.5" y2="547.1"/><line x1="295.0" y1="548.1" x2="294.3" y2="546.4"/><line x1="272.0" y1="620.0" x2="296.0" y2="545.0" stroke="#7f8870" stroke-width="1.4"/>
<path d="M278.3 646.2 L274.7 642.3 L271.1 638.7 L267.5 635.3 L264.2 632.9 L261.0 631.4 L257.8 629.9 L254.6 628.5 L251.3 627.0 L248.1 625.6 L244.9 624.1 L241.8 622.7 L238.6 621.4 L235.4 620.1 L232.2 618.8 L229.1 617.7 L226.0 617.0 L226.0 617.0 L228.0 619.4 L230.4 621.8 L232.9 624.1 L235.5 626.3 L238.1 628.6 L240.8 630.9 L243.5 633.1 L246.2 635.3 L248.9 637.6 L251.6 639.8 L254.4 642.0 L257.2 644.2 L260.7 646.2 L265.4 647.9 L270.2 649.5 L275.3 651.1Z" fill="#b4b99a" opacity="0.22" stroke="none"/><line x1="277.8" y1="649.2" x2="275.2" y2="641.5"/><line x1="277.8" y1="649.2" x2="269.7" y2="650.4"/><line x1="273.7" y1="646.7" x2="270.0" y2="635.4"/><line x1="273.7" y1="646.7" x2="261.9" y2="648.4"/><line x1="269.6" y1="644.2" x2="264.9" y2="629.8"/><line x1="269.6" y1="644.2" x2="254.7" y2="646.3"/><line x1="265.5" y1="641.6" x2="260.6" y2="626.5"/><line x1="265.5" y1="641.6" x2="249.8" y2="643.9"/><line x1="261.5" y1="639.1" x2="256.9" y2="625.2"/><line x1="261.5" y1="639.1" x2="247.0" y2="641.1"/><line x1="257.4" y1="636.5" x2="253.2" y2="623.8"/><line x1="257.4" y1="636.5" x2="244.2" y2="638.4"/><line x1="253.3" y1="634.0" x2="249.6" y2="622.6"/><line x1="253.3" y1="634.0" x2="241.4" y2="635.7"/><line x1="249.2" y1="631.5" x2="245.9" y2="621.3"/><line x1="249.2" y1="631.5" x2="238.7" y2="633.0"/><line x1="245.2" y1="628.9" x2="242.3" y2="620.2"/><line x1="245.2" y1="628.9" x2="236.0" y2="630.2"/><line x1="241.1" y1="626.4" x2="238.7" y2="619.1"/><line x1="241.1" y1="626.4" x2="233.4" y2="627.5"/><line x1="237.0" y1="623.9" x2="235.1" y2="618.1"/><line x1="237.0" y1="623.9" x2="231.0" y2="624.7"/><line x1="232.9" y1="621.3" x2="231.6" y2="617.2"/><line x1="232.9" y1="621.3" x2="228.7" y2="621.9"/><line x1="228.9" y1="618.8" x2="228.2" y2="616.7"/><line x1="228.9" y1="618.8" x2="226.7" y2="619.1"/><line x1="279.0" y1="650.0" x2="226.0" y2="617.0" stroke="#7f8870" stroke-width="1.4"/>
<path d="M293.7 663.8 L297.3 659.0 L300.7 654.2 L303.9 649.5 L306.0 645.2 L307.3 641.1 L308.7 637.1 L310.0 633.0 L311.3 628.9 L312.5 624.9 L313.8 620.8 L315.0 616.8 L316.2 612.8 L317.4 608.8 L318.5 604.8 L319.4 600.8 L320.0 597.0 L320.0 597.0 L317.6 600.0 L315.3 603.4 L313.1 606.9 L310.9 610.4 L308.7 614.0 L306.6 617.6 L304.4 621.3 L302.3 625.0 L300.2 628.7 L298.1 632.4 L295.9 636.1 L293.8 639.8 L292.1 644.3 L290.8 649.9 L289.5 655.6 L288.4 661.5Z" fill="#b4b99a" opacity="0.22" stroke="none"/><line x1="290.6" y1="663.7" x2="297.7" y2="660.2"/><line x1="290.6" y1="663.7" x2="288.4" y2="656.1"/><line x1="292.4" y1="659.5" x2="302.3" y2="654.6"/><line x1="292.4" y1="659.5" x2="289.4" y2="648.9"/><line x1="294.3" y1="655.2" x2="306.7" y2="649.1"/><line x1="294.3" y1="655.2" x2="290.5" y2="642.0"/><line x1="296.2" y1="651.0" x2="310.7" y2="643.9"/><line x1="296.2" y1="651.0" x2="291.7" y2="635.5"/><line x1="298.1" y1="646.7" x2="312.1" y2="639.8"/><line x1="298.1" y1="646.7" x2="293.7" y2="631.7"/><line x1="299.9" y1="642.5" x2="313.1" y2="636.0"/><line x1="299.9" y1="642.5" x2="295.9" y2="628.4"/><line x1="301.8" y1="638.2" x2="314.0" y2="632.2"/><line x1="301.8" y1="638.2" x2="298.0" y2="625.2"/><line x1="303.7" y1="634.0" x2="314.9" y2="628.4"/><line x1="303.7" y1="634.0" x2="300.2" y2="621.9"/><line x1="305.6" y1="629.7" x2="315.8" y2="624.7"/><line x1="305.6" y1="629.7" x2="302.4" y2="618.7"/><line x1="307.4" y1="625.5" x2="316.7" y2="620.9"/><line x1="307.4" y1="625.5" x2="304.6" y2="615.6"/><line x1="309.3" y1="621.2" x2="317.5" y2="617.2"/><line x1="309.3" y1="621.2" x2="306.8" y2="612.5"/><line x1="311.2" y1="617.0" x2="318.3" y2="613.5"/><line x1="311.2" y1="617.0" x2="309.0" y2="609.4"/><line x1="313.1" y1="612.7" x2="319.0" y2="609.8"/><line x1="313.1" y1="612.7" x2="311.2" y2="606.4"/><line x1="314.9" y1="608.5" x2="319.6" y2="606.2"/><line x1="314.9" y1="608.5" x2="313.5" y2="603.5"/><line x1="316.8" y1="604.2" x2="320.1" y2="602.6"/><line x1="316.8" y1="604.2" x2="315.8" y2="600.7"/><line x1="318.7" y1="600.0" x2="320.4" y2="599.1"/><line x1="318.7" y1="600.0" x2="318.2" y2="598.2"/><line x1="290.0" y1="665.0" x2="320.0" y2="597.0" stroke="#7f8870" stroke-width="1.4"/>
<path d="M295.1 696.8 L291.7 691.6 L288.3 686.6 L284.9 681.8 L281.5 678.2 L278.0 675.6 L274.6 673.0 L271.1 670.4 L267.7 667.8 L264.2 665.2 L260.8 662.7 L257.3 660.2 L253.9 657.7 L250.4 655.3 L246.9 653.0 L243.5 650.7 L240.0 649.0 L240.0 649.0 L241.9 652.4 L244.3 655.7 L246.9 659.0 L249.5 662.3 L252.1 665.7 L254.8 669.0 L257.6 672.3 L260.3 675.6 L263.1 678.9 L265.9 682.2 L268.7 685.5 L271.5 688.8 L275.3 692.0 L280.2 695.1 L285.4 698.2 L290.8 701.3Z" fill="#b4b99a" opacity="0.22" stroke="none"/><line x1="294.0" y1="700.0" x2="293.0" y2="691.4"/><line x1="294.0" y1="700.0" x2="285.3" y2="699.5"/><line x1="290.5" y1="696.8" x2="289.1" y2="684.8"/><line x1="290.5" y1="696.8" x2="278.5" y2="696.1"/><line x1="287.1" y1="693.5" x2="285.4" y2="678.6"/><line x1="287.1" y1="693.5" x2="272.1" y2="692.6"/><line x1="283.7" y1="690.3" x2="281.6" y2="672.8"/><line x1="283.7" y1="690.3" x2="266.1" y2="689.2"/><line x1="280.2" y1="687.0" x2="278.3" y2="670.1"/><line x1="280.2" y1="687.0" x2="263.2" y2="686.0"/><line x1="276.8" y1="683.8" x2="274.9" y2="667.9"/><line x1="276.8" y1="683.8" x2="260.8" y2="682.8"/><line x1="273.3" y1="680.5" x2="271.6" y2="665.8"/><line x1="273.3" y1="680.5" x2="258.5" y2="679.6"/><line x1="269.9" y1="677.3" x2="268.3" y2="663.7"/><line x1="269.9" y1="677.3" x2="256.3" y2="676.5"/><line x1="266.5" y1="674.0" x2="265.0" y2="661.6"/><line x1="266.5" y1="674.0" x2="254.0" y2="673.3"/><line x1="263.0" y1="670.8" x2="261.7" y2="659.6"/><line x1="263.0" y1="670.8" x2="251.8" y2="670.1"/><line x1="259.6" y1="667.5" x2="258.4" y2="657.6"/><line x1="259.6" y1="667.5" x2="249.7" y2="666.9"/><line x1="256.2" y1="664.3" x2="255.2" y2="655.7"/><line x1="256.2" y1="664.3" x2="247.6" y2="663.8"/><line x1="252.7" y1="661.0" x2="251.9" y2="653.9"/><line x1="252.7" y1="661.0" x2="245.5" y2="660.6"/><line x1="249.3" y1="657.8" x2="248.6" y2="652.1"/><line x1="249.3" y1="657.8" x2="243.6" y2="657.4"/><line x1="245.8" y1="654.5" x2="245.4" y2="650.5"/><line x1="245.8" y1="654.5" x2="241.8" y2="654.3"/><line x1="242.4" y1="651.3" x2="242.2" y2="649.2"/><line x1="242.4" y1="651.3" x2="240.3" y2="651.2"/><line x1="295.0" y1="701.0" x2="240.0" y2="649.0" stroke="#7f8870" stroke-width="1.4"/>
<path d="M439 536 Q432 565 423.4 591.6 Q412 625 400 657 Q388 690 376.7 716 Q368 735 361 755" fill="none" stroke="#7c8669" stroke-width="3.6"/>
<path d="M400 657 Q388 690 376.7 716 Q368 735 361 755" fill="none" stroke="#616d59" stroke-width="4.2"/>
<path d="M428.3 570.4 L428.6 566.6 L428.7 563.0 L428.8 559.5 L428.3 556.8 L427.5 554.6 L426.6 552.4 L425.7 550.2 L424.8 548.1 L424.0 545.9 L423.1 543.8 L422.1 541.7 L421.2 539.6 L420.3 537.6 L419.3 535.6 L418.2 533.6 L417.0 532.0 L417.0 532.0 L416.6 534.0 L416.5 536.2 L416.5 538.4 L416.6 540.7 L416.6 543.0 L416.8 545.3 L416.9 547.6 L417.0 549.9 L417.2 552.2 L417.4 554.5 L417.5 556.9 L417.7 559.2 L418.5 561.9 L420.1 565.0 L421.8 568.2 L423.7 571.5Z" fill="#b4b99a" opacity="0.22" stroke="none"/><line x1="426.2" y1="571.6" x2="429.4" y2="565.3"/><line x1="426.2" y1="571.6" x2="420.5" y2="567.4"/><line x1="425.1" y1="567.1" x2="430.2" y2="557.0"/><line x1="425.1" y1="567.1" x2="416.1" y2="560.3"/><line x1="424.1" y1="562.5" x2="430.0" y2="550.9"/><line x1="424.1" y1="562.5" x2="413.7" y2="554.7"/><line x1="423.0" y1="558.0" x2="428.2" y2="547.7"/><line x1="423.0" y1="558.0" x2="413.8" y2="551.1"/><line x1="422.0" y1="553.4" x2="426.5" y2="544.5"/><line x1="422.0" y1="553.4" x2="414.0" y2="547.4"/><line x1="420.9" y1="548.9" x2="424.7" y2="541.4"/><line x1="420.9" y1="548.9" x2="414.3" y2="543.9"/><line x1="419.9" y1="544.3" x2="422.8" y2="538.4"/><line x1="419.9" y1="544.3" x2="414.6" y2="540.4"/><line x1="418.8" y1="539.7" x2="420.9" y2="535.6"/><line x1="418.8" y1="539.7" x2="415.1" y2="537.0"/><line x1="417.7" y1="535.2" x2="418.8" y2="533.1"/><line x1="417.7" y1="535.2" x2="415.8" y2="533.8"/><line x1="426.5" y1="573.0" x2="417.0" y2="532.0" stroke="#7f8870" stroke-width="1.4"/>
<path d="M435.9 579.7 L438.9 577.5 L441.7 575.3 L444.4 573.1 L446.2 570.9 L447.3 568.9 L448.4 566.8 L449.5 564.8 L450.5 562.7 L451.6 560.7 L452.6 558.7 L453.6 556.6 L454.6 554.6 L455.5 552.5 L456.4 550.5 L457.2 548.5 L457.6 546.5 L457.6 546.5 L455.8 547.5 L454.1 548.8 L452.4 550.2 L450.7 551.7 L449.1 553.2 L447.4 554.8 L445.7 556.4 L444.1 558.0 L442.4 559.6 L440.8 561.2 L439.1 562.8 L437.5 564.5 L436.0 566.8 L434.6 570.0 L433.3 573.3 L432.1 576.9Z" fill="#b4b99a" opacity="0.22" stroke="none"/><line x1="433.5" y1="578.9" x2="440.4" y2="577.2"/><line x1="433.5" y1="578.9" x2="433.1" y2="571.8"/><line x1="436.3" y1="575.2" x2="447.3" y2="572.5"/><line x1="436.3" y1="575.2" x2="435.6" y2="563.9"/><line x1="439.1" y1="571.4" x2="451.7" y2="568.4"/><line x1="439.1" y1="571.4" x2="438.3" y2="558.5"/><line x1="441.8" y1="567.7" x2="453.0" y2="565.1"/><line x1="441.8" y1="567.7" x2="441.2" y2="556.2"/><line x1="444.6" y1="564.0" x2="454.3" y2="561.7"/><line x1="444.6" y1="564.0" x2="444.0" y2="554.1"/><line x1="447.4" y1="560.3" x2="455.5" y2="558.3"/><line x1="447.4" y1="560.3" x2="446.9" y2="552.0"/><line x1="450.1" y1="556.5" x2="456.5" y2="555.0"/><line x1="450.1" y1="556.5" x2="449.7" y2="550.0"/><line x1="452.9" y1="552.8" x2="457.4" y2="551.8"/><line x1="452.9" y1="552.8" x2="452.6" y2="548.2"/><line x1="455.7" y1="549.1" x2="458.0" y2="548.6"/><line x1="455.7" y1="549.1" x2="455.5" y2="546.7"/><line x1="432.7" y1="580.0" x2="457.6" y2="546.5" stroke="#7f8870" stroke-width="1.4"/>
<path d="M420.6 607.0 L420.7 602.4 L420.6 597.8 L420.4 593.5 L419.7 589.9 L418.5 587.1 L417.3 584.2 L416.2 581.3 L415.0 578.5 L413.8 575.6 L412.6 572.8 L411.4 570.0 L410.2 567.3 L408.9 564.5 L407.6 561.9 L406.3 559.3 L404.7 557.0 L404.7 557.0 L404.5 559.7 L404.6 562.7 L404.8 565.6 L405.0 568.6 L405.3 571.6 L405.6 574.7 L406.0 577.7 L406.4 580.8 L406.7 583.8 L407.1 586.9 L407.5 590.0 L408.0 593.0 L409.1 596.5 L411.1 600.4 L413.2 604.3 L415.6 608.4Z" fill="#b4b99a" opacity="0.22" stroke="none"/><line x1="418.3" y1="608.6" x2="421.6" y2="601.7"/><line x1="418.3" y1="608.6" x2="412.1" y2="604.2"/><line x1="417.0" y1="603.7" x2="422.0" y2="593.3"/><line x1="417.0" y1="603.7" x2="407.6" y2="597.1"/><line x1="415.8" y1="598.9" x2="422.1" y2="585.6"/><line x1="415.8" y1="598.9" x2="403.7" y2="590.4"/><line x1="414.5" y1="594.1" x2="420.4" y2="581.6"/><line x1="414.5" y1="594.1" x2="403.2" y2="586.2"/><line x1="413.2" y1="589.3" x2="418.5" y2="578.1"/><line x1="413.2" y1="589.3" x2="403.1" y2="582.1"/><line x1="412.0" y1="584.5" x2="416.6" y2="574.5"/><line x1="412.0" y1="584.5" x2="403.0" y2="578.1"/><line x1="410.7" y1="579.6" x2="414.7" y2="571.0"/><line x1="410.7" y1="579.6" x2="402.9" y2="574.2"/><line x1="409.4" y1="574.8" x2="412.8" y2="567.6"/><line x1="409.4" y1="574.8" x2="402.9" y2="570.2"/><line x1="408.1" y1="570.0" x2="410.8" y2="564.3"/><line x1="408.1" y1="570.0" x2="403.0" y2="566.4"/><line x1="406.9" y1="565.2" x2="408.8" y2="561.2"/><line x1="406.9" y1="565.2" x2="403.2" y2="562.6"/><line x1="405.6" y1="560.4" x2="406.6" y2="558.3"/><line x1="405.6" y1="560.4" x2="403.7" y2="559.1"/><line x1="418.7" y1="610.0" x2="404.7" y2="557.0" stroke="#7f8870" stroke-width="1.4"/>
<path d="M423.8 627.4 L428.0 625.4 L431.9 623.4 L435.7 621.3 L438.5 619.1 L440.5 616.8 L442.5 614.6 L444.5 612.3 L446.5 610.0 L448.4 607.7 L450.4 605.4 L452.3 603.2 L454.1 600.9 L456.0 598.6 L457.8 596.3 L459.4 594.0 L460.7 591.6 L460.7 591.6 L458.2 592.6 L455.7 593.9 L453.2 595.4 L450.6 596.9 L448.1 598.4 L445.6 600.0 L443.1 601.7 L440.6 603.3 L438.1 605.0 L435.5 606.6 L433.0 608.3 L430.5 610.0 L428.0 612.5 L425.4 616.0 L422.9 619.6 L420.3 623.5Z" fill="#b4b99a" opacity="0.22" stroke="none"/><line x1="421.4" y1="626.0" x2="429.0" y2="625.9"/><line x1="421.4" y1="626.0" x2="422.6" y2="618.5"/><line x1="425.1" y1="622.8" x2="436.6" y2="622.6"/><line x1="425.1" y1="622.8" x2="426.8" y2="611.4"/><line x1="428.7" y1="619.6" x2="443.5" y2="619.3"/><line x1="428.7" y1="619.6" x2="431.0" y2="605.0"/><line x1="432.4" y1="616.4" x2="446.2" y2="616.1"/><line x1="432.4" y1="616.4" x2="434.5" y2="602.8"/><line x1="436.1" y1="613.2" x2="448.5" y2="612.9"/><line x1="436.1" y1="613.2" x2="438.0" y2="600.9"/><line x1="439.8" y1="609.9" x2="450.8" y2="609.7"/><line x1="439.8" y1="609.9" x2="441.4" y2="599.1"/><line x1="443.4" y1="606.7" x2="452.9" y2="606.5"/><line x1="443.4" y1="606.7" x2="444.9" y2="597.3"/><line x1="447.1" y1="603.5" x2="455.1" y2="603.3"/><line x1="447.1" y1="603.5" x2="448.3" y2="595.7"/><line x1="450.8" y1="600.3" x2="457.1" y2="600.2"/><line x1="450.8" y1="600.3" x2="451.7" y2="594.1"/><line x1="454.5" y1="597.1" x2="458.9" y2="597.0"/><line x1="454.5" y1="597.1" x2="455.1" y2="592.7"/><line x1="458.1" y1="593.9" x2="460.4" y2="593.8"/><line x1="458.1" y1="593.9" x2="458.5" y2="591.6"/><line x1="420.3" y1="627.0" x2="460.7" y2="591.6" stroke="#7f8870" stroke-width="1.4"/>
<path d="M411.6 660.8 L417.0 658.5 L422.1 656.3 L427.1 653.9 L431.0 651.3 L434.0 648.6 L437.0 645.9 L440.1 643.1 L443.1 640.4 L446.0 637.6 L449.0 634.8 L451.9 632.1 L454.8 629.3 L457.7 626.5 L460.5 623.7 L463.2 620.9 L465.4 618.0 L465.4 618.0 L461.9 619.2 L458.4 620.9 L454.9 622.7 L451.4 624.6 L447.9 626.5 L444.3 628.5 L440.8 630.4 L437.3 632.4 L433.7 634.5 L430.2 636.5 L426.7 638.5 L423.1 640.6 L419.5 643.5 L415.7 647.5 L412.0 651.7 L408.2 656.1Z" fill="#b4b99a" opacity="0.22" stroke="none"/><line x1="409.0" y1="659.2" x2="416.9" y2="659.7"/><line x1="409.0" y1="659.2" x2="410.9" y2="651.4"/><line x1="412.8" y1="656.4" x2="424.0" y2="657.1"/><line x1="412.8" y1="656.4" x2="415.5" y2="645.4"/><line x1="416.6" y1="653.6" x2="430.8" y2="654.5"/><line x1="416.6" y1="653.6" x2="420.0" y2="639.8"/><line x1="420.5" y1="650.8" x2="436.9" y2="651.9"/><line x1="420.5" y1="650.8" x2="424.4" y2="634.8"/><line x1="424.3" y1="648.0" x2="439.6" y2="649.0"/><line x1="424.3" y1="648.0" x2="428.0" y2="633.0"/><line x1="428.2" y1="645.2" x2="442.4" y2="646.1"/><line x1="428.2" y1="645.2" x2="431.6" y2="631.3"/><line x1="432.0" y1="642.4" x2="445.1" y2="643.3"/><line x1="432.0" y1="642.4" x2="435.2" y2="629.6"/><line x1="435.8" y1="639.6" x2="447.8" y2="640.4"/><line x1="435.8" y1="639.6" x2="438.7" y2="627.9"/><line x1="439.7" y1="636.8" x2="450.5" y2="637.5"/><line x1="439.7" y1="636.8" x2="442.3" y2="626.3"/><line x1="443.5" y1="634.0" x2="453.1" y2="634.6"/><line x1="443.5" y1="634.0" x2="445.8" y2="624.7"/><line x1="447.4" y1="631.2" x2="455.6" y2="631.7"/><line x1="447.4" y1="631.2" x2="449.3" y2="623.1"/><line x1="451.2" y1="628.4" x2="458.1" y2="628.8"/><line x1="451.2" y1="628.4" x2="452.9" y2="621.6"/><line x1="455.0" y1="625.6" x2="460.5" y2="625.9"/><line x1="455.0" y1="625.6" x2="456.3" y2="620.2"/><line x1="458.9" y1="622.8" x2="462.7" y2="623.0"/><line x1="458.9" y1="622.8" x2="459.8" y2="619.0"/><line x1="462.7" y1="620.0" x2="464.7" y2="620.1"/><line x1="462.7" y1="620.0" x2="463.2" y2="618.0"/><line x1="407.8" y1="660.0" x2="465.4" y2="618.0" stroke="#7f8870" stroke-width="1.4"/>
<path d="M397.4 671.6 L396.9 665.8 L396.3 660.2 L395.7 654.8 L394.5 650.3 L392.8 646.5 L391.2 642.8 L389.5 639.0 L387.8 635.3 L386.1 631.6 L384.5 627.9 L382.7 624.2 L381.0 620.6 L379.3 617.0 L377.5 613.5 L375.7 610.1 L373.6 607.0 L373.6 607.0 L373.7 610.7 L374.2 614.5 L374.8 618.5 L375.5 622.4 L376.2 626.3 L376.9 630.3 L377.7 634.3 L378.5 638.3 L379.3 642.3 L380.1 646.3 L380.9 650.3 L381.8 654.3 L383.4 658.7 L386.0 663.5 L388.9 668.4 L391.9 673.4Z" fill="#b4b99a" opacity="0.22" stroke="none"/><line x1="395.0" y1="673.6" x2="398.0" y2="666.2"/><line x1="395.0" y1="673.6" x2="388.2" y2="669.4"/><line x1="393.5" y1="669.1" x2="397.8" y2="658.7"/><line x1="393.5" y1="669.1" x2="384.0" y2="663.1"/><line x1="392.1" y1="664.6" x2="397.4" y2="651.5"/><line x1="392.1" y1="664.6" x2="380.1" y2="657.0"/><line x1="390.6" y1="660.0" x2="396.8" y2="644.8"/><line x1="390.6" y1="660.0" x2="376.7" y2="651.3"/><line x1="389.2" y1="655.5" x2="395.0" y2="641.3"/><line x1="389.2" y1="655.5" x2="376.1" y2="647.3"/><line x1="387.7" y1="651.0" x2="393.1" y2="637.8"/><line x1="387.7" y1="651.0" x2="375.6" y2="643.4"/><line x1="386.2" y1="646.4" x2="391.2" y2="634.3"/><line x1="386.2" y1="646.4" x2="375.1" y2="639.4"/><line x1="384.8" y1="641.9" x2="389.3" y2="630.8"/><line x1="384.8" y1="641.9" x2="374.6" y2="635.5"/><line x1="383.3" y1="637.4" x2="387.4" y2="627.4"/><line x1="383.3" y1="637.4" x2="374.2" y2="631.6"/><line x1="381.9" y1="632.8" x2="385.5" y2="624.0"/><line x1="381.9" y1="632.8" x2="373.8" y2="627.7"/><line x1="380.4" y1="628.3" x2="383.6" y2="620.6"/><line x1="380.4" y1="628.3" x2="373.4" y2="623.9"/><line x1="379.0" y1="623.8" x2="381.6" y2="617.4"/><line x1="379.0" y1="623.8" x2="373.1" y2="620.1"/><line x1="377.5" y1="619.2" x2="379.6" y2="614.2"/><line x1="377.5" y1="619.2" x2="372.9" y2="616.3"/><line x1="376.1" y1="614.7" x2="377.5" y2="611.1"/><line x1="376.1" y1="614.7" x2="372.8" y2="612.6"/><line x1="374.6" y1="610.2" x2="375.4" y2="608.3"/><line x1="374.6" y1="610.2" x2="372.9" y2="609.1"/><line x1="395.4" y1="675.0" x2="373.6" y2="607.0" stroke="#7f8870" stroke-width="1.4"/>
<path d="M375.4 718.2 L374.5 712.2 L373.5 706.4 L372.4 700.9 L370.8 696.4 L368.8 692.8 L366.7 689.2 L364.7 685.6 L362.7 682.0 L360.6 678.4 L358.6 674.9 L356.5 671.4 L354.4 667.9 L352.3 664.4 L350.2 661.1 L348.0 657.8 L345.6 655.0 L345.6 655.0 L345.9 658.7 L346.7 662.5 L347.6 666.4 L348.6 670.3 L349.6 674.3 L350.6 678.2 L351.7 682.2 L352.8 686.1 L353.9 690.1 L355.1 694.1 L356.2 698.0 L357.4 702.0 L359.4 706.3 L362.6 711.0 L366.0 715.8 L369.6 720.6Z" fill="#b4b99a" opacity="0.22" stroke="none"/><line x1="373.0" y1="720.7" x2="375.6" y2="712.3"/><line x1="373.0" y1="720.7" x2="365.3" y2="716.7"/><line x1="371.2" y1="716.2" x2="374.8" y2="704.4"/><line x1="371.2" y1="716.2" x2="360.2" y2="710.5"/><line x1="369.3" y1="711.7" x2="373.9" y2="697.0"/><line x1="369.3" y1="711.7" x2="355.6" y2="704.6"/><line x1="367.4" y1="707.3" x2="372.8" y2="690.1"/><line x1="367.4" y1="707.3" x2="351.5" y2="699.0"/><line x1="365.6" y1="702.8" x2="370.6" y2="686.8"/><line x1="365.6" y1="702.8" x2="350.7" y2="695.1"/><line x1="363.7" y1="698.3" x2="368.3" y2="683.5"/><line x1="363.7" y1="698.3" x2="349.9" y2="691.2"/><line x1="361.8" y1="693.9" x2="366.1" y2="680.2"/><line x1="361.8" y1="693.9" x2="349.1" y2="687.3"/><line x1="360.0" y1="689.4" x2="363.9" y2="676.9"/><line x1="360.0" y1="689.4" x2="348.3" y2="683.4"/><line x1="358.1" y1="684.9" x2="361.6" y2="673.7"/><line x1="358.1" y1="684.9" x2="347.6" y2="679.5"/><line x1="356.2" y1="680.5" x2="359.4" y2="670.5"/><line x1="356.2" y1="680.5" x2="347.0" y2="675.7"/><line x1="354.4" y1="676.0" x2="357.1" y2="667.4"/><line x1="354.4" y1="676.0" x2="346.3" y2="671.8"/><line x1="352.5" y1="671.5" x2="354.8" y2="664.3"/><line x1="352.5" y1="671.5" x2="345.8" y2="668.1"/><line x1="350.6" y1="667.1" x2="352.4" y2="661.4"/><line x1="350.6" y1="667.1" x2="345.3" y2="664.3"/><line x1="348.8" y1="662.6" x2="350.0" y2="658.6"/><line x1="348.8" y1="662.6" x2="345.0" y2="660.7"/><line x1="346.9" y1="658.1" x2="347.6" y2="656.1"/><line x1="346.9" y1="658.1" x2="345.0" y2="657.1"/><line x1="373.6" y1="722.0" x2="345.6" y2="655.0" stroke="#7f8870" stroke-width="1.4"/>
<path d="M392.6 705.1 L397.1 704.4 L401.4 703.6 L405.5 702.8 L408.6 701.5 L410.9 700.0 L413.2 698.4 L415.5 696.8 L417.8 695.2 L420.0 693.6 L422.2 692.0 L424.4 690.4 L426.6 688.7 L428.7 687.1 L430.8 685.4 L432.8 683.7 L434.3 681.8 L434.3 681.8 L431.9 681.8 L429.3 682.3 L426.7 682.9 L424.1 683.5 L421.4 684.2 L418.8 684.9 L416.2 685.6 L413.5 686.4 L410.8 687.1 L408.2 687.9 L405.5 688.7 L402.8 689.6 L399.9 691.2 L396.7 693.9 L393.4 696.8 L390.1 699.9Z" fill="#b4b99a" opacity="0.22" stroke="none"/><line x1="390.4" y1="702.9" x2="398.6" y2="705.0"/><line x1="390.4" y1="702.9" x2="393.9" y2="695.2"/><line x1="394.9" y1="700.8" x2="407.7" y2="704.0"/><line x1="394.9" y1="700.8" x2="400.3" y2="688.7"/><line x1="399.4" y1="698.6" x2="415.2" y2="702.6"/><line x1="399.4" y1="698.6" x2="406.1" y2="683.8"/><line x1="403.9" y1="696.4" x2="418.2" y2="700.0"/><line x1="403.9" y1="696.4" x2="410.0" y2="683.0"/><line x1="408.5" y1="694.2" x2="421.1" y2="697.4"/><line x1="408.5" y1="694.2" x2="413.8" y2="682.4"/><line x1="413.0" y1="692.0" x2="423.9" y2="694.8"/><line x1="413.0" y1="692.0" x2="417.6" y2="681.8"/><line x1="417.5" y1="689.9" x2="426.6" y2="692.2"/><line x1="417.5" y1="689.9" x2="421.4" y2="681.3"/><line x1="422.1" y1="687.7" x2="429.3" y2="689.5"/><line x1="422.1" y1="687.7" x2="425.1" y2="680.9"/><line x1="426.6" y1="685.5" x2="431.7" y2="686.8"/><line x1="426.6" y1="685.5" x2="428.8" y2="680.7"/><line x1="431.1" y1="683.3" x2="433.7" y2="684.0"/><line x1="431.1" y1="683.3" x2="432.2" y2="680.9"/><line x1="389.0" y1="703.6" x2="434.3" y2="681.8" stroke="#7f8870" stroke-width="1.4"/>
<path d="M380.5 744.8 L385.0 743.1 L389.3 741.3 L393.4 739.6 L396.4 737.6 L398.5 735.4 L400.7 733.3 L402.8 731.1 L405.0 729.0 L407.1 726.8 L409.2 724.7 L411.2 722.5 L413.2 720.3 L415.2 718.1 L417.1 715.9 L418.9 713.7 L420.3 711.4 L420.3 711.4 L417.7 712.1 L415.1 713.2 L412.4 714.4 L409.8 715.6 L407.1 717.0 L404.4 718.3 L401.8 719.7 L399.1 721.1 L396.4 722.6 L393.8 724.0 L391.1 725.5 L388.4 726.9 L385.7 729.3 L382.8 732.7 L379.9 736.3 L377.1 740.1Z" fill="#b4b99a" opacity="0.22" stroke="none"/><line x1="377.9" y1="743.1" x2="386.3" y2="743.6"/><line x1="377.9" y1="743.1" x2="379.8" y2="735.0"/><line x1="381.9" y1="740.1" x2="394.5" y2="740.9"/><line x1="381.9" y1="740.1" x2="384.8" y2="727.8"/><line x1="385.8" y1="737.2" x2="402.0" y2="738.1"/><line x1="385.8" y1="737.2" x2="389.5" y2="721.4"/><line x1="389.8" y1="734.2" x2="404.9" y2="735.1"/><line x1="389.8" y1="734.2" x2="393.2" y2="719.5"/><line x1="393.7" y1="731.3" x2="407.4" y2="732.0"/><line x1="393.7" y1="731.3" x2="396.9" y2="718.0"/><line x1="397.7" y1="728.3" x2="409.8" y2="729.0"/><line x1="397.7" y1="728.3" x2="400.5" y2="716.5"/><line x1="401.7" y1="725.3" x2="412.1" y2="725.9"/><line x1="401.7" y1="725.3" x2="404.1" y2="715.1"/><line x1="405.6" y1="722.4" x2="414.4" y2="722.9"/><line x1="405.6" y1="722.4" x2="407.6" y2="713.9"/><line x1="409.6" y1="719.4" x2="416.5" y2="719.8"/><line x1="409.6" y1="719.4" x2="411.2" y2="712.7"/><line x1="413.6" y1="716.4" x2="418.4" y2="716.7"/><line x1="413.6" y1="716.4" x2="414.7" y2="711.7"/><line x1="417.5" y1="713.5" x2="420.0" y2="713.6"/><line x1="417.5" y1="713.5" x2="418.1" y2="711.0"/><line x1="376.7" y1="744.0" x2="420.3" y2="711.4" stroke="#7f8870" stroke-width="1.4"/>
</g>
<g stroke-linecap="round" fill="none">
<path d="M763 755 L763 722" stroke="#7a2836" stroke-width="4.8"/>
<path d="M763 724 Q768 640 773 532" stroke="#6e3a36" stroke-width="2.5" opacity="0.6"/>
<line x1="763.0" y1="724.0" x2="675.8" y2="649.7" stroke="#558a58" stroke-width="1.4" opacity="0.72"/>
<line x1="763.0" y1="724.0" x2="674.7" y2="645.1" stroke="#5e9160" stroke-width="1.4" opacity="0.72"/>
<line x1="763.0" y1="724.0" x2="684.0" y2="658.2" stroke="#5e9160" stroke-width="1.4" opacity="0.72"/>
<line x1="763.0" y1="724.0" x2="659.0" y2="627.0" stroke="#74a676" stroke-width="1.0" opacity="0.72"/>
<line x1="763.0" y1="724.0" x2="690.7" y2="663.2" stroke="#35623e" stroke-width="1.2" opacity="0.72"/>
<line x1="763.0" y1="724.0" x2="694.4" y2="668.7" stroke="#86b286" stroke-width="1.2" opacity="0.72"/>
<line x1="763.0" y1="724.0" x2="669.8" y2="631.5" stroke="#4f8552" stroke-width="1.0" opacity="0.72"/>
<line x1="763.0" y1="724.0" x2="689.8" y2="659.0" stroke="#558a58" stroke-width="1.4" opacity="0.72"/>
<line x1="763.0" y1="724.0" x2="680.6" y2="650.8" stroke="#3e6f47" stroke-width="1.2" opacity="0.72"/>
<line x1="763.0" y1="724.0" x2="674.0" y2="648.2" stroke="#35623e" stroke-width="1.4" opacity="0.72"/>
<line x1="763.0" y1="724.0" x2="674.6" y2="641.6" stroke="#35623e" stroke-width="1.2" opacity="0.72"/>
<line x1="763.0" y1="724.0" x2="667.6" y2="632.5" stroke="#5e9160" stroke-width="1.2" opacity="0.72"/>
<line x1="763.0" y1="724.0" x2="663.0" y2="624.2" stroke="#86b286" stroke-width="1.4" opacity="0.72"/>
<line x1="763.0" y1="724.0" x2="664.4" y2="629.9" stroke="#4f8552" stroke-width="1.2" opacity="0.72"/>
<line x1="763.0" y1="724.0" x2="675.3" y2="655.2" stroke="#5e9160" stroke-width="1.4" opacity="0.72"/>
<line x1="763.0" y1="724.0" x2="663.2" y2="609.8" stroke="#74a676" stroke-width="1.4" opacity="0.72"/>
<line x1="763.0" y1="724.0" x2="666.0" y2="592.9" stroke="#74a676" stroke-width="1.4" opacity="0.72"/>
<line x1="763.0" y1="724.0" x2="663.0" y2="615.0" stroke="#5e9160" stroke-width="1.2" opacity="0.72"/>
<line x1="763.0" y1="724.0" x2="660.7" y2="593.3" stroke="#74a676" stroke-width="1.4" opacity="0.72"/>
<line x1="763.0" y1="724.0" x2="663.5" y2="603.4" stroke="#4f8552" stroke-width="1.0" opacity="0.72"/>
<line x1="763.0" y1="724.0" x2="655.4" y2="623.7" stroke="#86b286" stroke-width="1.4" opacity="0.72"/>
<line x1="764.9" y1="689.0" x2="684.7" y2="585.9" stroke="#35623e" stroke-width="1.0" opacity="0.72"/>
<line x1="763.0" y1="724.0" x2="660.4" y2="600.4" stroke="#5e9160" stroke-width="1.2" opacity="0.72"/>
<line x1="763.0" y1="724.0" x2="669.1" y2="595.2" stroke="#35623e" stroke-width="1.0" opacity="0.72"/>
<line x1="764.3" y1="699.5" x2="671.6" y2="591.3" stroke="#86b286" stroke-width="1.0" opacity="0.72"/>
<line x1="763.0" y1="724.0" x2="680.6" y2="589.3" stroke="#558a58" stroke-width="1.4" opacity="0.72"/>
<line x1="763.0" y1="724.0" x2="666.9" y2="601.1" stroke="#558a58" stroke-width="1.2" opacity="0.72"/>
<line x1="763.0" y1="724.0" x2="688.6" y2="593.0" stroke="#74a676" stroke-width="1.0" opacity="0.72"/>
<line x1="763.2" y1="720.4" x2="668.3" y2="599.7" stroke="#5e9160" stroke-width="1.4" opacity="0.72"/>
<line x1="763.0" y1="724.0" x2="680.3" y2="596.2" stroke="#74a676" stroke-width="1.0" opacity="0.72"/>
<line x1="763.0" y1="724.0" x2="666.8" y2="598.7" stroke="#74a676" stroke-width="1.2" opacity="0.72"/>
<line x1="764.8" y1="690.7" x2="697.5" y2="576.3" stroke="#5e9160" stroke-width="1.2" opacity="0.72"/>
<line x1="765.7" y1="672.9" x2="699.5" y2="581.7" stroke="#4f8552" stroke-width="1.0" opacity="0.72"/>
<line x1="764.8" y1="689.8" x2="700.1" y2="577.0" stroke="#3e6f47" stroke-width="1.4" opacity="0.72"/>
<line x1="767.1" y1="647.0" x2="703.6" y2="573.5" stroke="#3e6f47" stroke-width="1.4" opacity="0.72"/>
<line x1="765.9" y1="670.0" x2="682.0" y2="531.5" stroke="#86b286" stroke-width="1.0" opacity="0.72"/>
<line x1="767.5" y1="638.3" x2="688.7" y2="530.8" stroke="#5e9160" stroke-width="1.4" opacity="0.72"/>
<line x1="764.8" y1="689.8" x2="702.9" y2="569.3" stroke="#558a58" stroke-width="1.0" opacity="0.72"/>
<line x1="764.7" y1="692.6" x2="705.3" y2="568.3" stroke="#4f8552" stroke-width="1.2" opacity="0.72"/>
<line x1="765.3" y1="680.2" x2="690.4" y2="541.9" stroke="#558a58" stroke-width="1.2" opacity="0.72"/>
<line x1="766.0" y1="666.8" x2="708.7" y2="567.2" stroke="#35623e" stroke-width="1.4" opacity="0.72"/>
<line x1="767.2" y1="644.4" x2="686.3" y2="546.3" stroke="#5e9160" stroke-width="1.2" opacity="0.72"/>
<line x1="767.9" y1="630.9" x2="689.0" y2="543.1" stroke="#35623e" stroke-width="1.0" opacity="0.72"/>
<line x1="767.7" y1="635.5" x2="683.7" y2="538.5" stroke="#74a676" stroke-width="1.2" opacity="0.72"/>
<line x1="766.7" y1="655.1" x2="696.5" y2="549.9" stroke="#86b286" stroke-width="1.4" opacity="0.72"/>
<line x1="766.5" y1="658.5" x2="703.1" y2="556.7" stroke="#86b286" stroke-width="1.2" opacity="0.72"/>
<line x1="766.8" y1="653.2" x2="700.9" y2="570.7" stroke="#3e6f47" stroke-width="1.4" opacity="0.72"/>
<line x1="765.1" y1="685.2" x2="698.8" y2="567.9" stroke="#74a676" stroke-width="1.4" opacity="0.72"/>
<line x1="767.7" y1="635.4" x2="690.0" y2="498.6" stroke="#3e6f47" stroke-width="1.2" opacity="0.72"/>
<line x1="770.8" y1="576.2" x2="706.6" y2="485.6" stroke="#4f8552" stroke-width="1.0" opacity="0.72"/>
<line x1="768.6" y1="617.8" x2="697.8" y2="489.7" stroke="#4f8552" stroke-width="1.4" opacity="0.72"/>
<line x1="766.3" y1="662.6" x2="677.9" y2="533.1" stroke="#558a58" stroke-width="1.0" opacity="0.72"/>
<line x1="769.7" y1="596.9" x2="702.6" y2="487.8" stroke="#4f8552" stroke-width="1.2" opacity="0.72"/>
<line x1="769.1" y1="608.2" x2="695.5" y2="499.7" stroke="#4f8552" stroke-width="1.2" opacity="0.72"/>
<line x1="769.2" y1="606.5" x2="695.4" y2="508.3" stroke="#74a676" stroke-width="1.2" opacity="0.72"/>
<line x1="767.6" y1="638.1" x2="696.8" y2="506.4" stroke="#86b286" stroke-width="1.2" opacity="0.72"/>
<line x1="769.2" y1="607.5" x2="700.2" y2="495.2" stroke="#5e9160" stroke-width="1.2" opacity="0.72"/>
<line x1="769.2" y1="607.9" x2="699.5" y2="484.6" stroke="#86b286" stroke-width="1.0" opacity="0.72"/>
<line x1="769.7" y1="598.0" x2="705.5" y2="482.2" stroke="#74a676" stroke-width="1.0" opacity="0.72"/>
<line x1="770.0" y1="591.3" x2="703.2" y2="489.8" stroke="#558a58" stroke-width="1.4" opacity="0.72"/>
<line x1="768.5" y1="620.9" x2="694.1" y2="498.5" stroke="#74a676" stroke-width="1.0" opacity="0.72"/>
<line x1="769.4" y1="604.0" x2="690.1" y2="500.0" stroke="#74a676" stroke-width="1.2" opacity="0.72"/>
<line x1="771.3" y1="566.6" x2="707.4" y2="481.1" stroke="#35623e" stroke-width="1.2" opacity="0.72"/>
<line x1="771.6" y1="561.0" x2="720.2" y2="476.6" stroke="#3e6f47" stroke-width="1.0" opacity="0.72"/>
<line x1="772.9" y1="536.7" x2="723.4" y2="470.4" stroke="#3e6f47" stroke-width="1.4" opacity="0.72"/>
<line x1="771.6" y1="562.5" x2="725.1" y2="474.7" stroke="#5e9160" stroke-width="1.4" opacity="0.72"/>
<line x1="771.0" y1="573.5" x2="717.6" y2="477.5" stroke="#3e6f47" stroke-width="1.0" opacity="0.72"/>
<line x1="770.5" y1="583.4" x2="722.8" y2="480.1" stroke="#558a58" stroke-width="1.0" opacity="0.72"/>
<line x1="770.1" y1="590.3" x2="706.6" y2="474.1" stroke="#74a676" stroke-width="1.4" opacity="0.72"/>
<line x1="772.4" y1="546.4" x2="724.5" y2="470.0" stroke="#558a58" stroke-width="1.2" opacity="0.72"/>
<line x1="772.4" y1="547.3" x2="738.4" y2="471.9" stroke="#74a676" stroke-width="1.0" opacity="0.72"/>
<line x1="771.5" y1="563.2" x2="733.9" y2="474.6" stroke="#3e6f47" stroke-width="1.2" opacity="0.72"/>
<line x1="770.5" y1="582.5" x2="709.5" y2="480.5" stroke="#4f8552" stroke-width="1.0" opacity="0.72"/>
<line x1="773.2" y1="532.0" x2="810.4" y2="470.6" stroke="#3e6f47" stroke-width="1.4" opacity="0.72"/>
<line x1="773.2" y1="532.0" x2="779.8" y2="467.6" stroke="#35623e" stroke-width="1.2" opacity="0.72"/>
<line x1="773.2" y1="532.0" x2="779.8" y2="476.2" stroke="#558a58" stroke-width="1.4" opacity="0.72"/>
<line x1="773.2" y1="532.0" x2="796.6" y2="469.3" stroke="#558a58" stroke-width="1.4" opacity="0.72"/>
<line x1="773.0" y1="535.5" x2="751.6" y2="469.3" stroke="#558a58" stroke-width="1.2" opacity="0.72"/>
<line x1="773.2" y1="532.0" x2="754.4" y2="473.5" stroke="#4f8552" stroke-width="1.2" opacity="0.72"/>
<line x1="773.2" y1="532.0" x2="773.3" y2="476.1" stroke="#74a676" stroke-width="1.4" opacity="0.72"/>
<line x1="773.2" y1="532.0" x2="810.1" y2="466.9" stroke="#5e9160" stroke-width="1.0" opacity="0.72"/>
<line x1="773.2" y1="532.0" x2="746.7" y2="466.5" stroke="#558a58" stroke-width="1.4" opacity="0.72"/>
<line x1="773.2" y1="532.0" x2="791.9" y2="469.7" stroke="#3e6f47" stroke-width="1.4" opacity="0.72"/>
<line x1="773.2" y1="532.0" x2="791.2" y2="467.6" stroke="#86b286" stroke-width="1.0" opacity="0.72"/>
<line x1="773.2" y1="532.0" x2="767.0" y2="476.0" stroke="#35623e" stroke-width="1.4" opacity="0.72"/>
<line x1="773.2" y1="532.0" x2="752.8" y2="466.6" stroke="#4f8552" stroke-width="1.0" opacity="0.72"/>
<line x1="773.2" y1="532.0" x2="784.7" y2="473.6" stroke="#558a58" stroke-width="1.2" opacity="0.72"/>
<line x1="773.2" y1="532.0" x2="790.9" y2="477.5" stroke="#4f8552" stroke-width="1.0" opacity="0.72"/>
<line x1="773.2" y1="532.0" x2="785.7" y2="471.7" stroke="#74a676" stroke-width="1.0" opacity="0.72"/>
<line x1="773.2" y1="532.0" x2="747.0" y2="471.7" stroke="#86b286" stroke-width="1.4" opacity="0.72"/>
<line x1="773.2" y1="532.0" x2="787.6" y2="469.3" stroke="#3e6f47" stroke-width="1.2" opacity="0.72"/>
<line x1="773.2" y1="532.0" x2="767.3" y2="472.2" stroke="#3e6f47" stroke-width="1.0" opacity="0.72"/>
<line x1="773.2" y1="532.0" x2="787.3" y2="470.7" stroke="#35623e" stroke-width="1.2" opacity="0.72"/>
<line x1="772.0" y1="553.9" x2="830.3" y2="471.8" stroke="#86b286" stroke-width="1.2" opacity="0.72"/>
<line x1="771.6" y1="561.2" x2="830.5" y2="473.2" stroke="#74a676" stroke-width="1.4" opacity="0.72"/>
<line x1="772.0" y1="554.7" x2="821.2" y2="479.6" stroke="#5e9160" stroke-width="1.0" opacity="0.72"/>
<line x1="771.7" y1="559.6" x2="819.2" y2="478.8" stroke="#558a58" stroke-width="1.0" opacity="0.72"/>
<line x1="772.2" y1="550.6" x2="830.9" y2="476.3" stroke="#3e6f47" stroke-width="1.4" opacity="0.72"/>
<line x1="769.4" y1="603.6" x2="839.1" y2="499.6" stroke="#86b286" stroke-width="1.0" opacity="0.72"/>
<line x1="769.6" y1="600.3" x2="847.9" y2="504.3" stroke="#4f8552" stroke-width="1.0" opacity="0.72"/>
<line x1="771.1" y1="572.0" x2="838.3" y2="490.0" stroke="#35623e" stroke-width="1.0" opacity="0.72"/>
<line x1="767.9" y1="631.1" x2="850.0" y2="509.8" stroke="#558a58" stroke-width="1.4" opacity="0.72"/>
<line x1="769.6" y1="598.6" x2="840.6" y2="491.6" stroke="#4f8552" stroke-width="1.2" opacity="0.72"/>
<line x1="770.3" y1="586.8" x2="831.3" y2="487.4" stroke="#86b286" stroke-width="1.2" opacity="0.72"/>
<line x1="769.9" y1="593.7" x2="843.8" y2="493.8" stroke="#74a676" stroke-width="1.0" opacity="0.72"/>
<line x1="770.6" y1="580.1" x2="833.3" y2="473.6" stroke="#86b286" stroke-width="1.0" opacity="0.72"/>
<line x1="768.8" y1="613.9" x2="841.9" y2="499.2" stroke="#5e9160" stroke-width="1.2" opacity="0.72"/>
<line x1="768.9" y1="612.4" x2="856.7" y2="519.3" stroke="#3e6f47" stroke-width="1.2" opacity="0.72"/>
<line x1="767.8" y1="634.0" x2="859.9" y2="521.9" stroke="#4f8552" stroke-width="1.2" opacity="0.72"/>
<line x1="767.1" y1="646.8" x2="865.0" y2="521.4" stroke="#86b286" stroke-width="1.2" opacity="0.72"/>
<line x1="768.1" y1="627.5" x2="858.3" y2="523.6" stroke="#74a676" stroke-width="1.0" opacity="0.72"/>
<line x1="768.2" y1="626.8" x2="854.9" y2="520.8" stroke="#4f8552" stroke-width="1.0" opacity="0.72"/>
<line x1="767.6" y1="637.7" x2="859.2" y2="524.5" stroke="#3e6f47" stroke-width="1.4" opacity="0.72"/>
<line x1="769.2" y1="606.4" x2="855.6" y2="517.3" stroke="#74a676" stroke-width="1.0" opacity="0.72"/>
<line x1="764.6" y1="694.7" x2="857.0" y2="551.5" stroke="#558a58" stroke-width="1.2" opacity="0.72"/>
<line x1="765.4" y1="677.9" x2="857.7" y2="555.5" stroke="#558a58" stroke-width="1.4" opacity="0.72"/>
<line x1="767.1" y1="647.1" x2="852.4" y2="546.8" stroke="#35623e" stroke-width="1.4" opacity="0.72"/>
<line x1="765.5" y1="676.2" x2="858.2" y2="538.4" stroke="#3e6f47" stroke-width="1.0" opacity="0.72"/>
<line x1="763.8" y1="708.9" x2="850.6" y2="557.8" stroke="#558a58" stroke-width="1.2" opacity="0.72"/>
<line x1="764.7" y1="691.3" x2="853.5" y2="553.5" stroke="#4f8552" stroke-width="1.0" opacity="0.72"/>
<line x1="764.4" y1="697.2" x2="849.1" y2="550.6" stroke="#35623e" stroke-width="1.0" opacity="0.72"/>
<line x1="765.2" y1="682.1" x2="863.7" y2="546.3" stroke="#4f8552" stroke-width="1.4" opacity="0.72"/>
<line x1="767.0" y1="648.8" x2="859.9" y2="532.1" stroke="#4f8552" stroke-width="1.0" opacity="0.72"/>
<line x1="765.6" y1="675.9" x2="857.3" y2="577.8" stroke="#558a58" stroke-width="1.4" opacity="0.72"/>
<line x1="765.9" y1="670.2" x2="851.6" y2="570.6" stroke="#86b286" stroke-width="1.2" opacity="0.72"/>
<line x1="763.9" y1="707.0" x2="860.0" y2="574.1" stroke="#558a58" stroke-width="1.4" opacity="0.72"/>
<line x1="763.0" y1="724.0" x2="850.5" y2="579.7" stroke="#4f8552" stroke-width="1.2" opacity="0.72"/>
<line x1="764.9" y1="687.7" x2="854.1" y2="564.7" stroke="#3e6f47" stroke-width="1.4" opacity="0.72"/>
<line x1="766.1" y1="665.0" x2="854.3" y2="565.9" stroke="#5e9160" stroke-width="1.2" opacity="0.72"/>
<line x1="764.7" y1="692.2" x2="851.3" y2="582.1" stroke="#86b286" stroke-width="1.2" opacity="0.72"/>
<line x1="764.5" y1="695.0" x2="848.4" y2="567.9" stroke="#86b286" stroke-width="1.2" opacity="0.72"/>
<line x1="763.1" y1="722.9" x2="860.0" y2="606.4" stroke="#86b286" stroke-width="1.2" opacity="0.72"/>
<line x1="763.0" y1="724.0" x2="858.2" y2="607.6" stroke="#5e9160" stroke-width="1.4" opacity="0.72"/>
<line x1="763.2" y1="719.8" x2="864.7" y2="615.6" stroke="#5e9160" stroke-width="1.4" opacity="0.72"/>
<line x1="763.0" y1="724.0" x2="866.2" y2="628.3" stroke="#3e6f47" stroke-width="1.0" opacity="0.72"/>
<line x1="763.6" y1="713.0" x2="862.8" y2="603.0" stroke="#5e9160" stroke-width="1.2" opacity="0.72"/>
<line x1="763.0" y1="724.0" x2="863.0" y2="623.9" stroke="#4f8552" stroke-width="1.2" opacity="0.72"/>
<line x1="763.0" y1="724.0" x2="862.0" y2="632.9" stroke="#558a58" stroke-width="1.0" opacity="0.72"/>
<line x1="763.4" y1="717.3" x2="860.7" y2="622.4" stroke="#4f8552" stroke-width="1.4" opacity="0.72"/>
<line x1="763.0" y1="724.0" x2="860.9" y2="614.2" stroke="#74a676" stroke-width="1.2" opacity="0.72"/>
<line x1="763.0" y1="724.0" x2="863.7" y2="626.8" stroke="#74a676" stroke-width="1.4" opacity="0.72"/>
<line x1="763.0" y1="724.0" x2="857.8" y2="597.3" stroke="#4f8552" stroke-width="1.4" opacity="0.72"/>
<line x1="763.0" y1="724.0" x2="861.9" y2="633.0" stroke="#5e9160" stroke-width="1.2" opacity="0.72"/>
<line x1="763.0" y1="724.0" x2="843.4" y2="666.4" stroke="#86b286" stroke-width="1.4" opacity="0.72"/>
<line x1="763.0" y1="724.0" x2="853.4" y2="652.8" stroke="#4f8552" stroke-width="1.0" opacity="0.72"/>
<line x1="763.0" y1="724.0" x2="841.0" y2="655.7" stroke="#74a676" stroke-width="1.4" opacity="0.72"/>
<line x1="763.0" y1="724.0" x2="857.2" y2="635.4" stroke="#35623e" stroke-width="1.0" opacity="0.72"/>
<line x1="763.0" y1="724.0" x2="850.9" y2="648.9" stroke="#86b286" stroke-width="1.2" opacity="0.72"/>
<line x1="763.0" y1="724.0" x2="856.7" y2="642.4" stroke="#558a58" stroke-width="1.2" opacity="0.72"/>
<line x1="763.0" y1="724.0" x2="840.4" y2="669.7" stroke="#35623e" stroke-width="1.4" opacity="0.72"/>
<line x1="763.0" y1="724.0" x2="869.5" y2="632.3" stroke="#35623e" stroke-width="1.4" opacity="0.72"/>
<line x1="763.0" y1="724.0" x2="840.2" y2="664.0" stroke="#4f8552" stroke-width="1.4" opacity="0.72"/>
<line x1="763.0" y1="724.0" x2="849.2" y2="654.4" stroke="#35623e" stroke-width="1.2" opacity="0.72"/>
<line x1="763.0" y1="724.0" x2="868.0" y2="634.7" stroke="#35623e" stroke-width="1.2" opacity="0.72"/>
<line x1="763.0" y1="724.0" x2="859.8" y2="641.0" stroke="#35623e" stroke-width="1.2" opacity="0.72"/>
<line x1="763.0" y1="724.0" x2="849.8" y2="644.2" stroke="#558a58" stroke-width="1.2" opacity="0.72"/>
<line x1="763.0" y1="724.0" x2="844.3" y2="657.8" stroke="#86b286" stroke-width="1.0" opacity="0.72"/>
<line x1="763.0" y1="724.0" x2="779.7" y2="720.2" stroke="#35623e" stroke-width="1.2" opacity="0.72"/>
<line x1="763.0" y1="724.0" x2="788.5" y2="708.3" stroke="#558a58" stroke-width="1.0" opacity="0.72"/>
<line x1="763.0" y1="724.0" x2="804.5" y2="704.4" stroke="#558a58" stroke-width="1.2" opacity="0.72"/>
<line x1="763.0" y1="724.0" x2="821.3" y2="691.1" stroke="#558a58" stroke-width="1.2" opacity="0.72"/>
<line x1="763.0" y1="724.0" x2="782.8" y2="713.5" stroke="#86b286" stroke-width="1.0" opacity="0.72"/>
<line x1="763.0" y1="724.0" x2="775.0" y2="723.1" stroke="#558a58" stroke-width="1.2" opacity="0.72"/>
<line x1="763.0" y1="724.0" x2="782.9" y2="713.0" stroke="#74a676" stroke-width="1.0" opacity="0.72"/>
<line x1="763.0" y1="724.0" x2="777.8" y2="710.0" stroke="#4f8552" stroke-width="1.0" opacity="0.72"/>
<line x1="763.0" y1="724.0" x2="795.4" y2="697.2" stroke="#3e6f47" stroke-width="1.0" opacity="0.72"/>
<line x1="763.0" y1="724.0" x2="790.5" y2="704.4" stroke="#5e9160" stroke-width="1.2" opacity="0.72"/>
<line x1="763.0" y1="724.0" x2="769.0" y2="721.2" stroke="#74a676" stroke-width="1.0" opacity="0.72"/>
<line x1="763.0" y1="724.0" x2="788.3" y2="709.0" stroke="#74a676" stroke-width="1.0" opacity="0.72"/>
<line x1="763.0" y1="724.0" x2="812.9" y2="696.6" stroke="#35623e" stroke-width="1.4" opacity="0.72"/>
<line x1="763.0" y1="724.0" x2="787.7" y2="716.5" stroke="#5e9160" stroke-width="1.4" opacity="0.72"/>
<line x1="763.0" y1="724.0" x2="834.7" y2="679.0" stroke="#4f8552" stroke-width="1.2" opacity="0.72"/>
<line x1="763.0" y1="724.0" x2="815.3" y2="682.7" stroke="#3e6f47" stroke-width="1.4" opacity="0.72"/>
<line x1="763.0" y1="724.0" x2="819.4" y2="680.1" stroke="#5e9160" stroke-width="1.0" opacity="0.72"/>
<line x1="763.0" y1="724.0" x2="821.8" y2="688.4" stroke="#4f8552" stroke-width="1.0" opacity="0.72"/>
<line x1="763.0" y1="724.0" x2="804.0" y2="701.7" stroke="#3e6f47" stroke-width="1.4" opacity="0.72"/>
<line x1="763.0" y1="724.0" x2="765.0" y2="729.5" stroke="#4f8552" stroke-width="1.0" opacity="0.72"/>
<line x1="763.0" y1="724.0" x2="830.7" y2="682.0" stroke="#3e6f47" stroke-width="1.2" opacity="0.72"/>
<line x1="763.0" y1="724.0" x2="836.9" y2="673.2" stroke="#4f8552" stroke-width="1.4" opacity="0.72"/>
<line x1="763.0" y1="724.0" x2="797.1" y2="699.0" stroke="#35623e" stroke-width="1.2" opacity="0.72"/>
<line x1="763.0" y1="724.0" x2="785.7" y2="711.5" stroke="#4f8552" stroke-width="1.0" opacity="0.72"/>
<line x1="766.2" y1="664.5" x2="745.5" y2="607.9" stroke="#5e9160" stroke-width="1.2" opacity="0.72"/>
<line x1="769.6" y1="599.8" x2="783.5" y2="566.3" stroke="#558a58" stroke-width="1.2" opacity="0.72"/>
<line x1="763.0" y1="724.0" x2="716.4" y2="641.0" stroke="#86b286" stroke-width="1.2" opacity="0.72"/>
<line x1="771.0" y1="572.5" x2="775.5" y2="545.2" stroke="#5e9160" stroke-width="1.4" opacity="0.72"/>
<line x1="769.2" y1="606.1" x2="809.1" y2="548.4" stroke="#86b286" stroke-width="1.0" opacity="0.72"/>
<line x1="767.3" y1="642.9" x2="817.2" y2="572.6" stroke="#35623e" stroke-width="1.2" opacity="0.72"/>
<line x1="764.2" y1="702.1" x2="849.7" y2="582.8" stroke="#86b286" stroke-width="1.4" opacity="0.72"/>
<line x1="763.0" y1="724.0" x2="757.7" y2="723.1" stroke="#4f8552" stroke-width="1.2" opacity="0.72"/>
<line x1="764.1" y1="702.4" x2="707.4" y2="607.0" stroke="#558a58" stroke-width="1.2" opacity="0.72"/>
<line x1="763.5" y1="715.0" x2="830.6" y2="627.7" stroke="#4f8552" stroke-width="1.4" opacity="0.72"/>
<line x1="763.0" y1="724.0" x2="679.7" y2="633.1" stroke="#74a676" stroke-width="1.0" opacity="0.72"/>
<line x1="771.5" y1="564.1" x2="753.0" y2="524.5" stroke="#3e6f47" stroke-width="1.0" opacity="0.72"/>
<line x1="763.0" y1="724.0" x2="666.2" y2="608.2" stroke="#3e6f47" stroke-width="1.0" opacity="0.72"/>
<line x1="767.4" y1="640.8" x2="798.6" y2="589.5" stroke="#4f8552" stroke-width="1.2" opacity="0.72"/>
<line x1="764.2" y1="702.2" x2="711.4" y2="622.2" stroke="#74a676" stroke-width="1.4" opacity="0.72"/>
<line x1="763.7" y1="710.7" x2="745.2" y2="672.7" stroke="#5e9160" stroke-width="1.0" opacity="0.72"/>
<line x1="768.2" y1="625.7" x2="706.3" y2="501.4" stroke="#558a58" stroke-width="1.0" opacity="0.72"/>
<line x1="768.6" y1="618.5" x2="789.4" y2="564.7" stroke="#4f8552" stroke-width="1.0" opacity="0.72"/>
<line x1="763.0" y1="724.0" x2="713.4" y2="648.7" stroke="#558a58" stroke-width="1.4" opacity="0.72"/>
<line x1="766.3" y1="662.1" x2="776.5" y2="624.7" stroke="#35623e" stroke-width="1.0" opacity="0.72"/>
<line x1="763.0" y1="724.0" x2="791.1" y2="666.4" stroke="#35623e" stroke-width="1.2" opacity="0.72"/>
<line x1="767.4" y1="640.5" x2="695.8" y2="536.2" stroke="#4f8552" stroke-width="1.0" opacity="0.72"/>
<line x1="764.5" y1="695.2" x2="746.4" y2="632.8" stroke="#558a58" stroke-width="1.4" opacity="0.72"/>
<line x1="763.0" y1="724.0" x2="677.0" y2="611.7" stroke="#86b286" stroke-width="1.2" opacity="0.72"/>
<line x1="765.8" y1="670.4" x2="800.4" y2="614.1" stroke="#74a676" stroke-width="1.0" opacity="0.72"/>
<line x1="768.5" y1="620.8" x2="790.7" y2="568.3" stroke="#558a58" stroke-width="1.0" opacity="0.72"/>
<line x1="771.5" y1="563.1" x2="757.9" y2="526.3" stroke="#35623e" stroke-width="1.4" opacity="0.72"/>
<line x1="763.0" y1="724.0" x2="728.9" y2="664.2" stroke="#4f8552" stroke-width="1.2" opacity="0.72"/>
<line x1="769.1" y1="608.0" x2="835.3" y2="491.2" stroke="#4f8552" stroke-width="1.4" opacity="0.72"/>
<line x1="763.0" y1="723.6" x2="789.1" y2="670.3" stroke="#35623e" stroke-width="1.4" opacity="0.72"/>
<line x1="765.6" y1="675.3" x2="700.8" y2="581.5" stroke="#5e9160" stroke-width="1.0" opacity="0.72"/>
<line x1="763.0" y1="724.0" x2="710.5" y2="680.9" stroke="#5e9160" stroke-width="1.4" opacity="0.72"/>
<line x1="764.0" y1="705.2" x2="734.3" y2="640.6" stroke="#74a676" stroke-width="1.0" opacity="0.72"/>
<line x1="765.0" y1="687.2" x2="773.0" y2="664.5" stroke="#558a58" stroke-width="1.4" opacity="0.72"/>
<line x1="764.3" y1="699.8" x2="853.0" y2="582.3" stroke="#35623e" stroke-width="1.0" opacity="0.72"/>
<line x1="771.1" y1="570.7" x2="734.4" y2="497.0" stroke="#558a58" stroke-width="1.4" opacity="0.72"/>
<line x1="763.0" y1="724.0" x2="672.8" y2="617.6" stroke="#4f8552" stroke-width="1.0" opacity="0.72"/>
<line x1="764.8" y1="690.7" x2="759.2" y2="648.8" stroke="#86b286" stroke-width="1.4" opacity="0.72"/>
<line x1="763.0" y1="724.0" x2="719.3" y2="672.1" stroke="#35623e" stroke-width="1.4" opacity="0.72"/>
<line x1="773.2" y1="532.0" x2="797.4" y2="493.1" stroke="#3e6f47" stroke-width="1.4" opacity="0.72"/>
<line x1="763.0" y1="724.0" x2="720.3" y2="659.0" stroke="#4f8552" stroke-width="1.2" opacity="0.72"/>
<line x1="769.9" y1="592.9" x2="804.2" y2="545.0" stroke="#3e6f47" stroke-width="1.4" opacity="0.72"/>
<line x1="767.4" y1="640.8" x2="811.1" y2="566.5" stroke="#3e6f47" stroke-width="1.2" opacity="0.72"/>
<line x1="763.0" y1="724.0" x2="777.4" y2="709.0" stroke="#35623e" stroke-width="1.0" opacity="0.72"/>
<line x1="763.0" y1="724.0" x2="749.2" y2="679.2" stroke="#4f8552" stroke-width="1.2" opacity="0.72"/>
<line x1="767.6" y1="636.7" x2="720.5" y2="553.9" stroke="#35623e" stroke-width="1.2" opacity="0.72"/>
<line x1="768.4" y1="622.5" x2="847.4" y2="536.1" stroke="#558a58" stroke-width="1.2" opacity="0.72"/>
<line x1="767.5" y1="638.2" x2="732.8" y2="566.3" stroke="#3e6f47" stroke-width="1.2" opacity="0.72"/>
<line x1="768.1" y1="628.4" x2="733.1" y2="574.1" stroke="#35623e" stroke-width="1.0" opacity="0.72"/>
<line x1="770.8" y1="577.6" x2="738.3" y2="522.3" stroke="#3e6f47" stroke-width="1.2" opacity="0.72"/>
<line x1="763.1" y1="722.8" x2="776.2" y2="677.6" stroke="#86b286" stroke-width="1.2" opacity="0.72"/>
<line x1="763.5" y1="714.1" x2="771.2" y2="687.8" stroke="#5e9160" stroke-width="1.4" opacity="0.72"/>
<line x1="772.5" y1="544.9" x2="776.0" y2="517.6" stroke="#4f8552" stroke-width="1.2" opacity="0.72"/>
<line x1="770.4" y1="584.2" x2="715.5" y2="477.7" stroke="#4f8552" stroke-width="1.4" opacity="0.72"/>
<line x1="766.7" y1="655.0" x2="765.9" y2="612.4" stroke="#3e6f47" stroke-width="1.4" opacity="0.72"/>
<line x1="763.0" y1="724.0" x2="795.0" y2="679.5" stroke="#5e9160" stroke-width="1.4" opacity="0.72"/>
<line x1="763.0" y1="724.0" x2="668.8" y2="613.1" stroke="#5e9160" stroke-width="1.2" opacity="0.72"/>
<line x1="771.1" y1="572.1" x2="824.4" y2="493.7" stroke="#3e6f47" stroke-width="1.0" opacity="0.72"/>
<line x1="772.3" y1="549.4" x2="791.3" y2="509.1" stroke="#35623e" stroke-width="1.2" opacity="0.72"/>
<line x1="763.0" y1="724.0" x2="815.3" y2="639.4" stroke="#86b286" stroke-width="1.2" opacity="0.72"/>
<line x1="768.5" y1="620.3" x2="707.8" y2="528.9" stroke="#86b286" stroke-width="1.0" opacity="0.72"/>
<line x1="764.7" y1="691.7" x2="819.6" y2="606.6" stroke="#558a58" stroke-width="1.2" opacity="0.72"/>
<line x1="767.2" y1="644.8" x2="819.4" y2="573.8" stroke="#558a58" stroke-width="1.0" opacity="0.72"/>
<line x1="765.9" y1="669.4" x2="799.6" y2="599.4" stroke="#4f8552" stroke-width="1.2" opacity="0.72"/>
<line x1="764.8" y1="690.3" x2="770.5" y2="658.0" stroke="#35623e" stroke-width="1.0" opacity="0.72"/>
<line x1="763.0" y1="724.0" x2="743.3" y2="685.2" stroke="#4f8552" stroke-width="1.4" opacity="0.72"/>
<line x1="763.0" y1="724.0" x2="798.3" y2="692.2" stroke="#35623e" stroke-width="1.4" opacity="0.72"/>
<line x1="766.4" y1="659.3" x2="792.7" y2="607.2" stroke="#74a676" stroke-width="1.2" opacity="0.72"/>
<line x1="763.0" y1="724.0" x2="807.7" y2="679.0" stroke="#558a58" stroke-width="1.0" opacity="0.72"/>
<line x1="768.7" y1="617.0" x2="745.6" y2="580.5" stroke="#86b286" stroke-width="1.0" opacity="0.72"/>
<line x1="767.5" y1="638.6" x2="691.0" y2="524.7" stroke="#74a676" stroke-width="1.0" opacity="0.72"/>
<line x1="768.8" y1="613.9" x2="746.4" y2="547.3" stroke="#86b286" stroke-width="1.0" opacity="0.72"/>
<line x1="768.8" y1="614.8" x2="721.3" y2="501.6" stroke="#3e6f47" stroke-width="1.4" opacity="0.72"/>
<line x1="763.0" y1="724.0" x2="794.3" y2="672.2" stroke="#86b286" stroke-width="1.0" opacity="0.72"/>
<line x1="765.9" y1="669.7" x2="753.6" y2="622.7" stroke="#86b286" stroke-width="1.4" opacity="0.72"/>
<line x1="767.7" y1="634.8" x2="701.7" y2="532.7" stroke="#4f8552" stroke-width="1.2" opacity="0.72"/>
<line x1="765.2" y1="683.1" x2="809.2" y2="625.5" stroke="#4f8552" stroke-width="1.0" opacity="0.72"/>
<line x1="767.2" y1="644.1" x2="703.2" y2="519.7" stroke="#4f8552" stroke-width="1.2" opacity="0.72"/>
<line x1="768.6" y1="617.7" x2="715.4" y2="516.5" stroke="#86b286" stroke-width="1.2" opacity="0.72"/>
<line x1="767.6" y1="636.7" x2="817.9" y2="552.4" stroke="#74a676" stroke-width="1.4" opacity="0.72"/>
<line x1="763.9" y1="706.4" x2="772.9" y2="682.8" stroke="#86b286" stroke-width="1.0" opacity="0.72"/>
<line x1="770.7" y1="578.8" x2="758.1" y2="539.2" stroke="#4f8552" stroke-width="1.2" opacity="0.72"/>
<line x1="764.3" y1="698.6" x2="728.5" y2="613.2" stroke="#74a676" stroke-width="1.4" opacity="0.72"/>
<line x1="768.7" y1="615.7" x2="702.5" y2="484.8" stroke="#74a676" stroke-width="1.4" opacity="0.72"/>
<line x1="765.8" y1="670.7" x2="737.8" y2="608.1" stroke="#558a58" stroke-width="1.4" opacity="0.72"/>
<line x1="770.6" y1="580.3" x2="765.9" y2="542.8" stroke="#74a676" stroke-width="1.2" opacity="0.72"/>
<line x1="769.3" y1="605.9" x2="756.6" y2="567.9" stroke="#86b286" stroke-width="1.2" opacity="0.72"/>
<line x1="763.0" y1="724.0" x2="826.3" y2="656.0" stroke="#4f8552" stroke-width="1.2" opacity="0.72"/>
<line x1="771.5" y1="562.7" x2="785.3" y2="512.6" stroke="#3e6f47" stroke-width="1.2" opacity="0.72"/>
<line x1="766.7" y1="654.4" x2="766.0" y2="636.3" stroke="#35623e" stroke-width="1.0" opacity="0.72"/>
<line x1="771.9" y1="555.4" x2="769.9" y2="510.9" stroke="#35623e" stroke-width="1.2" opacity="0.72"/>
<line x1="771.2" y1="569.0" x2="831.7" y2="493.3" stroke="#5e9160" stroke-width="1.4" opacity="0.72"/>
<line x1="763.0" y1="724.0" x2="713.0" y2="656.9" stroke="#558a58" stroke-width="1.0" opacity="0.72"/>
<line x1="763.8" y1="708.8" x2="675.9" y2="595.9" stroke="#35623e" stroke-width="1.0" opacity="0.72"/>
<line x1="763.0" y1="724.0" x2="755.8" y2="718.5" stroke="#5e9160" stroke-width="1.2" opacity="0.72"/>
<line x1="763.0" y1="724.0" x2="781.1" y2="693.2" stroke="#558a58" stroke-width="1.2" opacity="0.72"/>
<line x1="763.0" y1="724.0" x2="720.3" y2="675.6" stroke="#5e9160" stroke-width="1.0" opacity="0.72"/>
<line x1="763.0" y1="724.0" x2="744.6" y2="708.5" stroke="#3e6f47" stroke-width="1.0" opacity="0.72"/>
<line x1="764.6" y1="694.0" x2="699.8" y2="612.2" stroke="#5e9160" stroke-width="1.2" opacity="0.72"/>
<line x1="772.7" y1="541.6" x2="768.0" y2="512.6" stroke="#558a58" stroke-width="1.4" opacity="0.72"/>
<line x1="766.1" y1="665.5" x2="833.9" y2="552.3" stroke="#558a58" stroke-width="1.4" opacity="0.72"/>
<line x1="770.4" y1="584.6" x2="721.8" y2="491.6" stroke="#3e6f47" stroke-width="1.0" opacity="0.72"/>
<line x1="765.5" y1="676.6" x2="720.7" y2="592.5" stroke="#86b286" stroke-width="1.2" opacity="0.72"/>
<line x1="768.0" y1="630.3" x2="808.8" y2="564.8" stroke="#3e6f47" stroke-width="1.2" opacity="0.72"/>
<line x1="773.0" y1="535.2" x2="802.7" y2="499.3" stroke="#558a58" stroke-width="1.2" opacity="0.72"/>
<line x1="766.9" y1="650.0" x2="739.8" y2="591.1" stroke="#74a676" stroke-width="1.0" opacity="0.72"/>
<line x1="773.2" y1="532.0" x2="795.6" y2="475.2" stroke="#5e9160" stroke-width="1.4" opacity="0.72"/>
<line x1="763.4" y1="716.9" x2="736.1" y2="655.2" stroke="#5e9160" stroke-width="1.4" opacity="0.72"/>
<line x1="763.0" y1="724.0" x2="706.1" y2="617.5" stroke="#35623e" stroke-width="1.4" opacity="0.72"/>
<line x1="773.2" y1="532.0" x2="753.5" y2="474.7" stroke="#558a58" stroke-width="1.2" opacity="0.72"/>
<line x1="763.0" y1="724.0" x2="699.4" y2="630.9" stroke="#74a676" stroke-width="1.2" opacity="0.72"/>
<line x1="766.4" y1="659.1" x2="717.4" y2="569.0" stroke="#5e9160" stroke-width="1.4" opacity="0.72"/>
<line x1="770.8" y1="577.4" x2="771.1" y2="548.9" stroke="#3e6f47" stroke-width="1.0" opacity="0.72"/>
<line x1="767.5" y1="638.7" x2="727.5" y2="573.2" stroke="#35623e" stroke-width="1.4" opacity="0.72"/>
<line x1="770.0" y1="591.2" x2="798.3" y2="538.2" stroke="#4f8552" stroke-width="1.0" opacity="0.72"/>
<line x1="763.0" y1="724.0" x2="698.0" y2="660.7" stroke="#5e9160" stroke-width="1.2" opacity="0.72"/>
<line x1="764.0" y1="704.9" x2="776.0" y2="658.7" stroke="#4f8552" stroke-width="1.4" opacity="0.72"/>
<line x1="763.0" y1="724.0" x2="726.3" y2="685.3" stroke="#74a676" stroke-width="1.4" opacity="0.72"/>
<line x1="770.3" y1="586.9" x2="807.3" y2="518.4" stroke="#558a58" stroke-width="1.4" opacity="0.72"/>
<line x1="763.0" y1="724.0" x2="741.5" y2="687.9" stroke="#86b286" stroke-width="1.0" opacity="0.72"/>
<line x1="773.1" y1="532.7" x2="782.4" y2="495.2" stroke="#35623e" stroke-width="1.2" opacity="0.72"/>
<line x1="766.9" y1="651.2" x2="703.7" y2="512.5" stroke="#4f8552" stroke-width="1.2" opacity="0.72"/>
<line x1="767.4" y1="641.0" x2="746.8" y2="604.0" stroke="#86b286" stroke-width="1.2" opacity="0.72"/>
<line x1="763.0" y1="724.0" x2="794.2" y2="669.9" stroke="#35623e" stroke-width="1.0" opacity="0.72"/>
<line x1="767.1" y1="647.3" x2="831.5" y2="571.6" stroke="#3e6f47" stroke-width="1.0" opacity="0.72"/>
<line x1="765.6" y1="674.6" x2="726.3" y2="578.3" stroke="#35623e" stroke-width="1.0" opacity="0.72"/>
<line x1="763.0" y1="724.0" x2="824.8" y2="642.3" stroke="#4f8552" stroke-width="1.4" opacity="0.72"/>
<line x1="773.2" y1="532.0" x2="785.8" y2="476.8" stroke="#86b286" stroke-width="1.4" opacity="0.72"/>
<line x1="767.2" y1="645.5" x2="726.2" y2="560.3" stroke="#5e9160" stroke-width="1.0" opacity="0.72"/>
<line x1="772.7" y1="541.1" x2="794.9" y2="499.4" stroke="#4f8552" stroke-width="1.0" opacity="0.72"/>
<line x1="765.9" y1="670.1" x2="736.2" y2="603.4" stroke="#4f8552" stroke-width="1.2" opacity="0.72"/>
<line x1="771.8" y1="558.4" x2="786.5" y2="512.9" stroke="#86b286" stroke-width="1.4" opacity="0.72"/>
<line x1="770.0" y1="592.0" x2="772.9" y2="563.0" stroke="#558a58" stroke-width="1.4" opacity="0.72"/>
<line x1="773.0" y1="534.9" x2="762.6" y2="508.6" stroke="#4f8552" stroke-width="1.0" opacity="0.72"/>
<line x1="764.7" y1="692.5" x2="765.9" y2="656.6" stroke="#74a676" stroke-width="1.2" opacity="0.72"/>
<line x1="769.1" y1="608.4" x2="834.6" y2="522.9" stroke="#4f8552" stroke-width="1.0" opacity="0.72"/>
<line x1="763.0" y1="724.0" x2="858.2" y2="633.8" stroke="#35623e" stroke-width="1.4" opacity="0.72"/>
<line x1="769.2" y1="606.7" x2="697.5" y2="493.5" stroke="#74a676" stroke-width="1.4" opacity="0.72"/>
<line x1="763.3" y1="718.2" x2="707.6" y2="620.7" stroke="#5e9160" stroke-width="1.0" opacity="0.72"/>
<line x1="769.3" y1="605.8" x2="804.9" y2="556.9" stroke="#74a676" stroke-width="1.0" opacity="0.72"/>
<line x1="772.2" y1="551.3" x2="754.6" y2="504.0" stroke="#5e9160" stroke-width="1.4" opacity="0.72"/>
<line x1="763.0" y1="724.0" x2="849.4" y2="612.2" stroke="#35623e" stroke-width="1.4" opacity="0.72"/>
<line x1="766.4" y1="659.9" x2="775.6" y2="616.6" stroke="#5e9160" stroke-width="1.2" opacity="0.72"/>
<line x1="773.2" y1="532.3" x2="784.3" y2="503.6" stroke="#3e6f47" stroke-width="1.4" opacity="0.72"/>
<line x1="766.6" y1="655.9" x2="832.3" y2="546.5" stroke="#558a58" stroke-width="1.0" opacity="0.72"/>
<line x1="767.6" y1="636.3" x2="847.9" y2="534.1" stroke="#558a58" stroke-width="1.4" opacity="0.72"/>
<line x1="763.4" y1="716.3" x2="778.3" y2="686.3" stroke="#74a676" stroke-width="1.4" opacity="0.72"/>
<line x1="763.0" y1="724.0" x2="694.9" y2="613.3" stroke="#3e6f47" stroke-width="1.0" opacity="0.72"/>
<line x1="763.0" y1="724.0" x2="857.0" y2="641.9" stroke="#74a676" stroke-width="1.0" opacity="0.72"/>
<line x1="768.7" y1="616.1" x2="749.9" y2="561.5" stroke="#5e9160" stroke-width="1.2" opacity="0.72"/>
<line x1="766.8" y1="652.8" x2="730.5" y2="576.3" stroke="#3e6f47" stroke-width="1.4" opacity="0.72"/>
<line x1="766.8" y1="652.7" x2="770.3" y2="618.4" stroke="#74a676" stroke-width="1.0" opacity="0.72"/>
<line x1="771.9" y1="555.1" x2="768.0" y2="539.9" stroke="#4f8552" stroke-width="1.2" opacity="0.72"/>
<line x1="767.8" y1="632.8" x2="787.1" y2="593.6" stroke="#5e9160" stroke-width="1.0" opacity="0.72"/>
<line x1="765.1" y1="683.5" x2="790.5" y2="613.9" stroke="#3e6f47" stroke-width="1.2" opacity="0.72"/>
<line x1="771.2" y1="569.3" x2="751.3" y2="534.7" stroke="#558a58" stroke-width="1.4" opacity="0.72"/>
<line x1="768.1" y1="627.8" x2="766.1" y2="613.6" stroke="#5e9160" stroke-width="1.0" opacity="0.72"/>
<line x1="770.1" y1="589.9" x2="766.5" y2="566.4" stroke="#558a58" stroke-width="1.4" opacity="0.72"/>
<line x1="765.7" y1="672.9" x2="761.7" y2="634.2" stroke="#3e6f47" stroke-width="1.2" opacity="0.72"/>
<line x1="768.8" y1="615.2" x2="810.0" y2="528.9" stroke="#5e9160" stroke-width="1.0" opacity="0.72"/>
<line x1="767.5" y1="640.0" x2="760.3" y2="594.0" stroke="#86b286" stroke-width="1.0" opacity="0.72"/>
<line x1="768.0" y1="630.3" x2="740.0" y2="582.3" stroke="#35623e" stroke-width="1.0" opacity="0.72"/>
<line x1="763.8" y1="708.2" x2="736.8" y2="651.6" stroke="#558a58" stroke-width="1.4" opacity="0.72"/>
<line x1="763.7" y1="710.9" x2="774.1" y2="667.6" stroke="#3e6f47" stroke-width="1.0" opacity="0.72"/>
<line x1="763.7" y1="710.4" x2="740.7" y2="671.0" stroke="#4f8552" stroke-width="1.2" opacity="0.72"/>
<line x1="765.6" y1="675.2" x2="785.0" y2="613.2" stroke="#86b286" stroke-width="1.4" opacity="0.72"/>
<line x1="763.0" y1="724.0" x2="731.6" y2="681.0" stroke="#86b286" stroke-width="1.4" opacity="0.72"/>
<line x1="768.7" y1="616.1" x2="764.7" y2="586.4" stroke="#35623e" stroke-width="1.2" opacity="0.72"/>
<line x1="763.0" y1="724.0" x2="761.3" y2="680.9" stroke="#74a676" stroke-width="1.2" opacity="0.72"/>
<line x1="766.0" y1="667.0" x2="775.7" y2="645.1" stroke="#74a676" stroke-width="1.4" opacity="0.72"/>
<line x1="763.4" y1="716.6" x2="761.1" y2="680.0" stroke="#74a676" stroke-width="1.4" opacity="0.72"/>
<line x1="764.4" y1="698.4" x2="729.4" y2="650.4" stroke="#5e9160" stroke-width="1.2" opacity="0.72"/>
<line x1="770.2" y1="589.1" x2="762.8" y2="561.0" stroke="#4f8552" stroke-width="1.0" opacity="0.72"/>
<line x1="771.4" y1="564.7" x2="767.7" y2="524.9" stroke="#74a676" stroke-width="1.4" opacity="0.72"/>
<line x1="767.0" y1="649.2" x2="742.0" y2="589.4" stroke="#5e9160" stroke-width="1.2" opacity="0.72"/>
<line x1="773.2" y1="532.0" x2="773.9" y2="510.4" stroke="#4f8552" stroke-width="1.2" opacity="0.72"/>
<line x1="764.9" y1="688.4" x2="747.1" y2="639.0" stroke="#3e6f47" stroke-width="1.4" opacity="0.72"/>
<line x1="769.9" y1="593.9" x2="768.2" y2="561.3" stroke="#3e6f47" stroke-width="1.0" opacity="0.72"/>
<line x1="768.7" y1="616.6" x2="771.6" y2="579.1" stroke="#35623e" stroke-width="1.4" opacity="0.72"/>
<line x1="763.2" y1="720.2" x2="775.7" y2="682.3" stroke="#74a676" stroke-width="1.2" opacity="0.72"/>
<line x1="763.0" y1="724.0" x2="736.2" y2="693.3" stroke="#5e9160" stroke-width="1.4" opacity="0.72"/>
<line x1="764.8" y1="690.6" x2="721.9" y2="584.3" stroke="#86b286" stroke-width="1.0" opacity="0.72"/>
<line x1="764.4" y1="697.3" x2="774.5" y2="661.1" stroke="#3e6f47" stroke-width="1.0" opacity="0.72"/>
<line x1="764.3" y1="699.3" x2="814.5" y2="613.4" stroke="#35623e" stroke-width="1.4" opacity="0.72"/>
<line x1="763.0" y1="724.0" x2="805.7" y2="680.7" stroke="#3e6f47" stroke-width="1.2" opacity="0.72"/>
<line x1="770.1" y1="590.2" x2="802.4" y2="524.8" stroke="#4f8552" stroke-width="1.2" opacity="0.72"/>
<line x1="768.4" y1="621.9" x2="770.1" y2="607.5" stroke="#86b286" stroke-width="1.4" opacity="0.72"/>
<line x1="770.6" y1="579.7" x2="772.0" y2="548.8" stroke="#86b286" stroke-width="1.2" opacity="0.72"/>
<line x1="770.1" y1="589.8" x2="767.1" y2="559.9" stroke="#558a58" stroke-width="1.4" opacity="0.72"/>
<line x1="764.2" y1="701.7" x2="774.4" y2="679.0" stroke="#3e6f47" stroke-width="1.2" opacity="0.72"/>
<line x1="764.2" y1="701.5" x2="745.2" y2="663.1" stroke="#5e9160" stroke-width="1.0" opacity="0.72"/>
<line x1="766.6" y1="656.7" x2="784.5" y2="617.1" stroke="#4f8552" stroke-width="1.2" opacity="0.72"/>
<line x1="769.2" y1="606.7" x2="833.1" y2="509.2" stroke="#558a58" stroke-width="1.2" opacity="0.72"/>
<line x1="769.8" y1="595.1" x2="783.2" y2="561.6" stroke="#86b286" stroke-width="1.4" opacity="0.72"/>
<line x1="765.1" y1="684.9" x2="840.1" y2="599.7" stroke="#4f8552" stroke-width="1.0" opacity="0.72"/>
<line x1="766.6" y1="655.3" x2="738.8" y2="594.5" stroke="#3e6f47" stroke-width="1.2" opacity="0.72"/>
<line x1="770.0" y1="591.3" x2="754.9" y2="541.3" stroke="#3e6f47" stroke-width="1.0" opacity="0.72"/>
<line x1="763.0" y1="724.0" x2="826.2" y2="679.4" stroke="#74a676" stroke-width="1.2" opacity="0.72"/>
<line x1="769.7" y1="597.0" x2="786.5" y2="539.1" stroke="#86b286" stroke-width="1.0" opacity="0.72"/>
<line x1="766.6" y1="656.3" x2="747.6" y2="594.5" stroke="#558a58" stroke-width="1.2" opacity="0.72"/>
<line x1="767.4" y1="641.3" x2="839.9" y2="534.4" stroke="#558a58" stroke-width="1.2" opacity="0.72"/>
<line x1="768.3" y1="623.7" x2="709.7" y2="540.4" stroke="#558a58" stroke-width="1.0" opacity="0.72"/>
<line x1="765.0" y1="686.7" x2="788.9" y2="626.5" stroke="#74a676" stroke-width="1.4" opacity="0.72"/>
<line x1="768.8" y1="614.4" x2="828.2" y2="510.0" stroke="#86b286" stroke-width="1.0" opacity="0.72"/>
<line x1="772.7" y1="541.5" x2="770.1" y2="521.2" stroke="#3e6f47" stroke-width="1.2" opacity="0.72"/>
<line x1="763.0" y1="724.0" x2="741.3" y2="680.1" stroke="#5e9160" stroke-width="1.4" opacity="0.72"/>
<line x1="763.7" y1="711.2" x2="762.2" y2="673.9" stroke="#86b286" stroke-width="1.4" opacity="0.72"/>
<line x1="764.8" y1="690.3" x2="752.8" y2="639.2" stroke="#86b286" stroke-width="1.0" opacity="0.72"/>
<line x1="763.1" y1="721.9" x2="754.2" y2="687.6" stroke="#74a676" stroke-width="1.0" opacity="0.72"/>
<line x1="770.2" y1="587.6" x2="776.3" y2="544.6" stroke="#86b286" stroke-width="1.2" opacity="0.72"/>
<line x1="769.7" y1="597.3" x2="767.1" y2="561.4" stroke="#4f8552" stroke-width="1.0" opacity="0.72"/>
<line x1="770.3" y1="586.8" x2="755.0" y2="536.2" stroke="#5e9160" stroke-width="1.0" opacity="0.72"/>
<line x1="768.9" y1="612.6" x2="747.1" y2="547.1" stroke="#86b286" stroke-width="1.0" opacity="0.72"/>
<line x1="767.2" y1="644.4" x2="728.4" y2="574.5" stroke="#3e6f47" stroke-width="1.4" opacity="0.72"/>
<line x1="764.9" y1="689.0" x2="795.8" y2="632.4" stroke="#86b286" stroke-width="1.0" opacity="0.72"/>
<line x1="769.0" y1="610.0" x2="747.6" y2="545.8" stroke="#4f8552" stroke-width="1.2" opacity="0.72"/>
<line x1="767.9" y1="632.1" x2="808.9" y2="560.2" stroke="#3e6f47" stroke-width="1.2" opacity="0.72"/>
<line x1="769.6" y1="600.3" x2="753.5" y2="555.4" stroke="#3e6f47" stroke-width="1.0" opacity="0.72"/>
<line x1="763.0" y1="724.0" x2="835.6" y2="628.0" stroke="#4f8552" stroke-width="1.0" opacity="0.72"/>
<line x1="765.6" y1="674.6" x2="813.0" y2="588.1" stroke="#74a676" stroke-width="1.4" opacity="0.72"/>
<line x1="767.8" y1="634.3" x2="760.9" y2="605.7" stroke="#35623e" stroke-width="1.2" opacity="0.72"/>
<line x1="767.4" y1="641.4" x2="766.9" y2="619.9" stroke="#4f8552" stroke-width="1.2" opacity="0.72"/>
<line x1="770.7" y1="577.8" x2="771.6" y2="556.9" stroke="#35623e" stroke-width="1.4" opacity="0.72"/>
<line x1="769.9" y1="594.3" x2="824.4" y2="517.4" stroke="#5e9160" stroke-width="1.2" opacity="0.72"/>
<line x1="771.1" y1="570.5" x2="772.6" y2="557.0" stroke="#74a676" stroke-width="1.2" opacity="0.72"/>
<line x1="769.4" y1="602.7" x2="750.9" y2="555.8" stroke="#86b286" stroke-width="1.4" opacity="0.72"/>
<line x1="765.4" y1="679.3" x2="792.3" y2="609.6" stroke="#35623e" stroke-width="1.2" opacity="0.72"/>
<line x1="770.4" y1="585.1" x2="729.2" y2="506.7" stroke="#4f8552" stroke-width="1.4" opacity="0.72"/>
<line x1="769.4" y1="602.5" x2="781.9" y2="576.9" stroke="#4f8552" stroke-width="1.4" opacity="0.72"/>
<line x1="763.0" y1="724.0" x2="747.4" y2="685.9" stroke="#3e6f47" stroke-width="1.4" opacity="0.72"/>
<line x1="767.0" y1="649.3" x2="769.0" y2="611.2" stroke="#3e6f47" stroke-width="1.4" opacity="0.72"/>
<line x1="766.2" y1="663.6" x2="742.0" y2="629.0" stroke="#4f8552" stroke-width="1.2" opacity="0.72"/>
<line x1="763.0" y1="724.0" x2="798.2" y2="656.6" stroke="#5e9160" stroke-width="1.2" opacity="0.72"/>
<line x1="764.7" y1="692.2" x2="715.3" y2="603.3" stroke="#4f8552" stroke-width="1.0" opacity="0.72"/>
<line x1="765.9" y1="669.6" x2="765.7" y2="636.9" stroke="#74a676" stroke-width="1.0" opacity="0.72"/>
<line x1="766.7" y1="653.8" x2="785.9" y2="604.1" stroke="#558a58" stroke-width="1.4" opacity="0.72"/>
<line x1="764.5" y1="695.6" x2="761.4" y2="655.9" stroke="#5e9160" stroke-width="1.4" opacity="0.72"/>
<line x1="770.7" y1="577.8" x2="757.2" y2="533.0" stroke="#4f8552" stroke-width="1.4" opacity="0.72"/>
<line x1="768.5" y1="621.1" x2="757.3" y2="588.1" stroke="#35623e" stroke-width="1.2" opacity="0.72"/>
</g>
</svg><div class="abs" style="left:142px;top:122px;width:719px;height:229px;background:#ede2d1"></div>
<div class="t" style="left:173px;top:157px;font-family:'Liberation Serif',serif;font-weight:bold;font-size:36px;color:#2d2a26">Our Trees</div>
<div class="abs" style="left:173px;top:215px;width:700px;font-family:'Liberation Sans',sans-serif;font-size:15px;line-height:26.3px;color:#38382c;white-space:nowrap">
<div style="word-spacing:0.5px">Ac feugiat ante. Donec ultricies lobortis eros, nec auctor nisl semper ultricies. Aliquam sodales</div>
<div style="word-spacing:0.6px">nulla dolor. Fermentum nulla non justo aliquet, quis vehicula quam consequat duis ut hendrerit.</div>
<div style="word-spacing:1.05px">Luctus lectus non quisque turpis bibendum posuere. Morbi tortor nibh, fringilla sed pretium sit</div>
<div style="word-spacing:0.6px">amet.</div>
</div>
</div>
<div class="abs" style="left:1044px;top:49px;width:8px;height:706px;background:linear-gradient(90deg,rgba(253,253,253,0),#fdfdfd);z-index:2"></div><div id="gap"><div class="abs" style="left:5.2px;top:469.5px;width:4.3px;height:57px;background:#1f2731;border-radius:2px"></div></div><div id="pline"></div>
<div id="panel">
  <svg class="abs" style="left:-1064px;top:-49px" width="1536" height="755" viewBox="0 0 1536 755">
    <!-- close X -->
    <path d="M1510.6 67.2 L1519.6 75.8 M1519.6 67.2 L1510.6 75.8" stroke="#1f2530" stroke-width="2.3" stroke-linecap="round"/>
    <rect x="1064" y="128.7" width="472" height="1" fill="#e2e5ea"/>
    <path d="M1081.2 149.2 L1089.2 149.2 L1085.2 154.9Z" fill="#3c64c8"/>
    <!-- editor -->
    <rect x="1081.3" y="204.4" width="439.2" height="155" rx="3.5" fill="#212936"/>
    <rect x="1115.5" y="215.3" width="374.5" height="17.6" fill="#1d2430"/>
    <rect x="1081.3" y="329.8" width="439.2" height="1.1" fill="#384150"/>
    <rect x="1408.3" y="336" width="19" height="18.6" rx="3" fill="#fff"/>
    <path d="M1412.6 349.1 L1415.4 341.5 L1417.3 341.5 L1420 349.1 L1418.1 349.1 L1416.35 343.6 L1414.5 349.1Z" fill="#1a1f28"/>
    <rect x="1420.9" y="341.5" width="1.9" height="7.6" fill="#1a1f28"/><rect x="1414" y="346.2" width="4.6" height="1.5" fill="#1a1f28"/>
    <path d="M1447.2 340.6 V350.8 M1442.1 345.7 H1452.3" stroke="#f3f4f7" stroke-width="2"/>
    <path d="M1472.1 340.8 A6.6 6.6 0 1 0 1481.3 340.8" fill="none" stroke="#f3f4f7" stroke-width="2"/>
    <rect x="1475.7" y="338.1" width="2" height="7" fill="#f3f4f7"/>
    <path d="M1473.4 344.3 L1480 344.3 L1476.7 348.6Z" fill="#f3f4f7"/>
    <g fill="#f3f4f7">
      <rect x="1500.3" y="338" width="2" height="10.5"/>
      <path d="M1498.2 346.8 L1504.4 346.8 L1501.3 352.9Z"/>
      <rect x="1508.4" y="342.4" width="2" height="10.5"/>
      <path d="M1506.3 344.1 L1512.5 344.1 L1509.4 338Z"/>
    </g>
    <rect x="1064" y="376.5" width="472" height="1" fill="#e2e5ea"/>
    <path d="M1081 395.4 L1086.8 400.3 L1081 405.2Z" fill="#1f2530"/>
    <rect x="1064" y="423.5" width="472" height="1" fill="#e2e5ea"/>
    <path d="M1081 442.3 L1086.8 447.2 L1081 452.1Z" fill="#1f2530"/>
    <rect x="1064" y="471" width="472" height="1" fill="#e2e5ea"/>
    <circle cx="1091.7" cy="499.2" r="8.5" fill="#a3abc0"/>
    <path d="M1089.1 496.6 Q1089.1 493.9 1091.8 493.9 Q1094.5 493.9 1094.5 496.3 Q1094.5 497.8 1092.6 498.8 Q1091.8 499.3 1091.8 500.8" fill="none" stroke="#fff" stroke-width="1.7"/>
    <circle cx="1091.8" cy="503.3" r="1.05" fill="#fff"/>
  </svg>
  <div class="t" style="left:17.5px;top:18.5px;font-size:12.8px;font-weight:bold;color:#272c35">Page Settings</div>
  <div class="t" style="left:18px;top:52px;font-size:13px;font-weight:bold;color:#636d80">Content</div>
  <div class="t" style="left:87.5px;top:52px;font-size:13px;font-weight:bold;color:#636d80">Design</div>
  <div class="t" style="left:151px;top:52px;font-size:13px;font-weight:bold;color:#4a72c4">Advanced</div>
  <div class="t" style="left:34.3px;top:97px;font-size:12.8px;font-weight:bold;color:#3d63b8">Custom CSS</div>
  <div class="t" style="left:17px;top:132px;font-size:13px;color:#6b7280">Custom CSS</div>
  <div class="t" style="left:34px;top:345px;font-size:13px;font-weight:bold;color:#272c35">Visibility</div>
  <div class="t" style="left:34px;top:393px;font-size:13px;font-weight:bold;color:#272c35">Position</div>
  <div class="abs code" style="left:53.4px;top:168.5px;font-family:'Liberation Mono',monospace;font-size:12.6px;line-height:18.7px;font-weight:bold;white-space:pre;color:#e6e8ec"><span style="color:#8aa27a">:</span><span style="color:#e9b07c">root</span> <span style="color:#a6c35f">{</span>
  --section-padding<span style="color:#8cb060">:</span> <span style="color:#a385e8">calc</span><span style="color:#8cc265">(</span><span style="color:#eeb27c">4rem</span> <span style="color:#8cc265">+</span> <span style="color:#eeb27c">2vw</span><span style="color:#8cc265">)</span><span style="color:#8cb060">;</span>
<span style="color:#a6c35f">}</span></div>
  <div class="abs" style="left:36px;top:168.5px;font-family:'Liberation Mono',monospace;font-size:12.6px;line-height:18.7px;font-weight:bold;white-space:pre;color:#9aa1ae;text-align:right;width:10px">1
2
3
4</div>
</div>

<svg class="abs" style="left:0;top:0;z-index:50" width="1536" height="755" viewBox="0 0 1536 755">
<path d="M51 46.6 L68.8 59.9 L63.8 61.5 L88.5 103 L84.5 105.3 L59.8 63.8 L53.6 67.2 Z" fill="#ea0a14"/>
<rect x="87.6" y="104.6" width="30.6" height="32.8" rx="2" fill="#ea0a14"/>
<path d="M1084.8 281.4 L1071.7 298.5 L1069.5 293 L958.5 361 L956 357 L1067 289 L1063.4 284.6 Z" fill="#ea0a14"/>
<rect x="926.2" y="355.7" width="31.1" height="32.2" rx="2" fill="#ea0a14"/>
</svg>
<div class="abs" style="left:1203.5px;top:89.6px;width:82.5px;height:40.7px;border:4px solid #e20a15;border-radius:2px;z-index:50"></div>
<div class="abs" style="left:1304.3px;top:88.9px;width:30.1px;height:32.8px;background:#ea0a14;border-radius:2px;z-index:50"></div>
<div class="lbl" style="left:91px;top:111.5px;z-index:51">1.</div>
<div class="lbl" style="left:1306px;top:94.5px;z-index:51">2.</div>
<div class="lbl" style="left:928px;top:361.5px;z-index:51">3.</div>

</body></html>
